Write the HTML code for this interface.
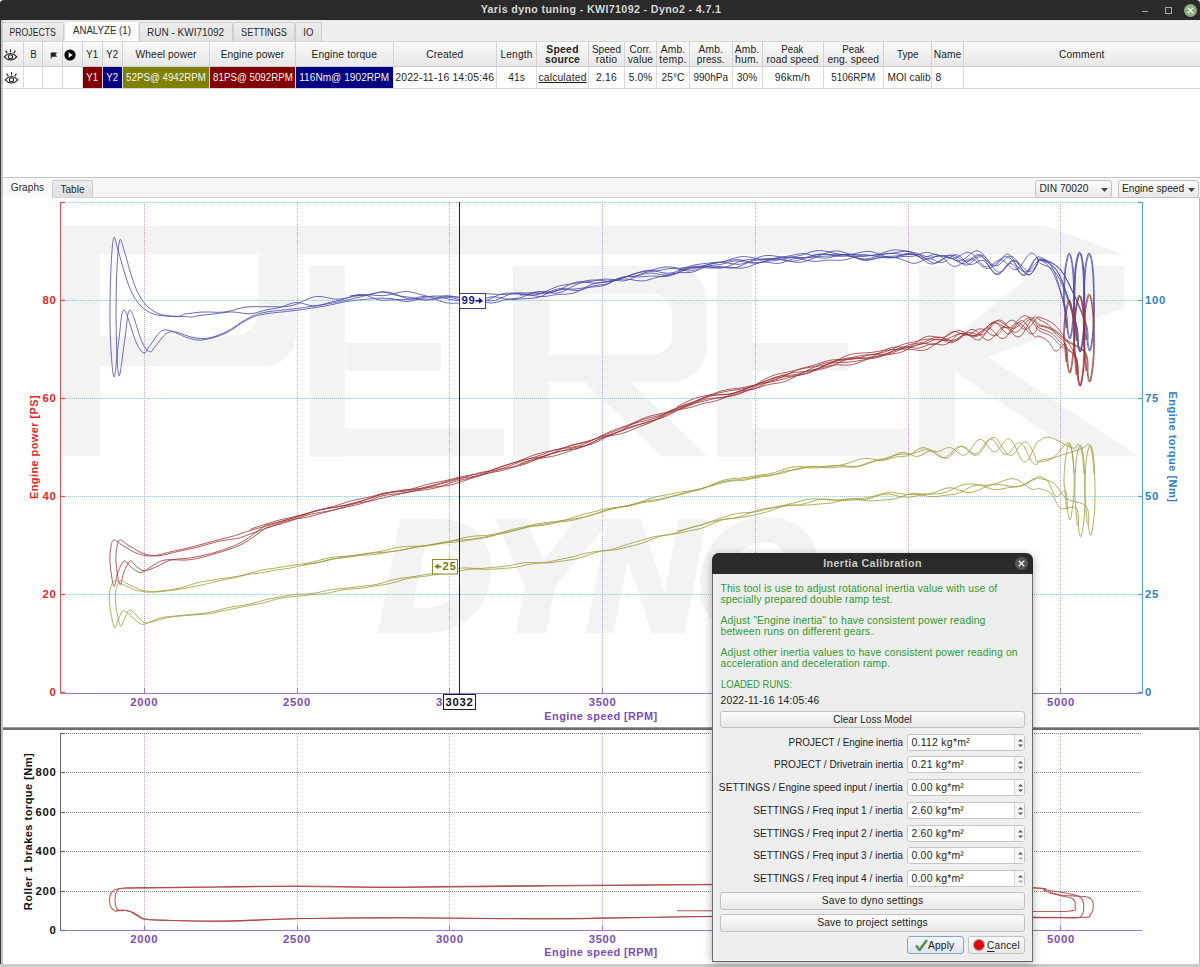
<!DOCTYPE html><html><head><meta charset="utf-8"><style>
*{box-sizing:border-box;margin:0;padding:0}
html,body{width:1200px;height:967px;overflow:hidden;background:#efefef;font-family:"Liberation Sans",sans-serif;font-size:10px;color:#202020;position:relative}
.a{position:absolute;white-space:nowrap}
.tab{position:absolute;top:22px;height:19px;background:linear-gradient(#ededed,#e3e3e3);border:1px solid #cdcdcd;border-bottom:none;color:#2a2a2a;text-align:center;line-height:19px;border-radius:2px 2px 0 0;white-space:nowrap}
.tab.sel{top:21px;height:20px;background:#fff;border-color:#e4e4e4;line-height:18px}
.hc{position:absolute;top:42px;height:25px;background:linear-gradient(#fafafa,#e8e8e8);border-right:1px solid #d2d2d2;border-bottom:1px solid #cdcdcd;color:#222;text-align:center;line-height:25px;white-space:nowrap}
.hc2{line-height:9.8px;padding-top:3px}
.rc{position:absolute;top:67px;height:22px;background:#fff;border-right:1px solid #dadada;border-bottom:1px solid #dadada;color:#1e1e1e;text-align:center;line-height:21px;white-space:nowrap;overflow:hidden}

.btn{position:absolute;border:1px solid #c2c2c2;border-radius:3px;background:linear-gradient(#fcfcfc,#e8e8e8);color:#222;text-align:center;white-space:nowrap}
.spin{position:absolute;left:907px;width:118px;height:17px;border:1px solid #c6c6c6;border-radius:3px;background:#fff;color:#222;line-height:16px;padding-left:3.5px}
.spin .ar{position:absolute;right:0;top:0;width:10px;height:15px;border-left:1px solid #d8d8d8;background:#f6f6f6}
.lbl{position:absolute;right:297px;color:#222;text-align:right;white-space:nowrap;line-height:11px}
.g{position:absolute;left:720.5px;color:#2f9a2f;white-space:nowrap;line-height:11px}
</style></head><body><div class="a" style="left:0;top:0;width:1200px;height:20px;background:#2a2a2a;border-radius:4px 4px 0 0"></div><div class="a" style="left:0;top:20px;width:1200px;height:1px;background:#e6e6e6"></div><div class="a" style="left:1px;top:3px;width:1200px;text-align:center;color:#d6d6d6;font-weight:bold;line-height:12px"><span style="font-size:10.70px;letter-spacing:0.356px">Yaris dyno tuning - KWI71092 - Dyno2 - 4.7.1</span></div><div class="a" style="left:1142px;top:11px;width:6px;height:1px;background:#a8a8a8"></div><div class="a" style="left:1165px;top:7px;width:7px;height:6.5px;border:1px solid #a8a8a8"></div><div class="a" style="left:1184px;top:3.5px;width:13px;height:13px;border-radius:50%;background:#8eac77"></div><svg class="a" style="left:1184px;top:3.5px" width="13" height="13"><path d="M3.8 3.8L9.2 9.2M9.2 3.8L3.8 9.2" stroke="#f0f0f0" stroke-width="1.3"/></svg><div class="a" style="left:0;top:20px;width:1px;height:947px;background:#3c3c3c"></div><div class="a" style="left:1px;top:20px;width:1.5px;height:947px;background:#c4c4c4"></div><div class="tab" style="left:2px;width:62px"><span style="display:inline-block;font-size:10.00px;transform:scaleX(0.8668);transform-origin:center">PROJECTS</span></div><div class="tab sel" style="left:64px;width:75px"><span style="display:inline-block;font-size:10.00px;transform:scaleX(0.9673);transform-origin:center">ANALYZE (1)</span></div><div class="tab" style="left:139px;width:94px"><span style="display:inline-block;font-size:10.00px;transform:scaleX(0.9973);transform-origin:center">RUN - KWI71092</span></div><div class="tab" style="left:233px;width:62px"><span style="display:inline-block;font-size:10.00px;transform:scaleX(0.9187);transform-origin:center">SETTINGS</span></div><div class="tab" style="left:295px;width:27px"><span style="display:inline-block;font-size:10.00px;transform:scaleX(0.9565);transform-origin:center">IO</span></div><div class="a" style="left:2.5px;top:41px;width:1197.5px;height:136px;background:#fff"></div><div class="a" style="left:2.5px;top:40.5px;width:1197.5px;height:1.5px;background:#d6d6d6"></div><div class="hc" style="left:2.5px;width:21.5px"><div style="position:absolute;left:0.5px;top:5.5px"><svg width="15" height="13" viewBox="0 0 15 13" style="display:block"><path d="M1.2 8.8Q7.5 2.2 13.8 8.8Q7.5 15.2 1.2 8.8Z" fill="none" stroke="#222" stroke-width="1.15"/><circle cx="7.5" cy="8.8" r="2.1" fill="none" stroke="#222" stroke-width="1.1"/><path d="M7.5 1.2V4.3M2.6 2.6L4.2 5.1M12.4 2.6L10.8 5.1" stroke="#222" stroke-width="1.1"/></svg></div></div><div class="hc" style="left:24px;width:19px"><span style="display:inline-block;font-size:10.00px;transform:scaleX(0.9597);transform-origin:center">B</span></div><div class="hc" style="left:43px;width:20px"><div style="position:absolute;left:7px;top:9.5px"><svg width="7" height="7" viewBox="0 0 7 7" style="display:block"><path d="M1 7V0.8H6.5L5.3 2.6L6.5 4.4H1.8" fill="#222" stroke="#222" stroke-width="0.6"/></svg></div></div><div class="hc" style="left:63px;width:20px"><div style="position:absolute;left:1.2px;top:6.5px"><svg width="12" height="12" viewBox="0 0 12 12" style="display:block"><circle cx="6" cy="6" r="5.6" fill="#000"/><path d="M4.6 3.3L8.7 6L4.6 8.7Z" fill="#fff"/></svg></div></div><div class="hc" style="left:83px;width:20px"><span style="display:inline-block;font-size:10.00px;transform:scaleX(0.9512);transform-origin:center">Y1</span></div><div class="hc" style="left:103px;width:20px"><span style="display:inline-block;font-size:10.00px;transform:scaleX(0.9512);transform-origin:center">Y2</span></div><div class="hc" style="left:123px;width:87px"><span style="font-size:10.23px;letter-spacing:0.122px">Wheel power</span></div><div class="hc" style="left:210px;width:86px"><span style="font-size:10.21px;letter-spacing:0.111px">Engine power</span></div><div class="hc" style="left:296px;width:97.5px"><span style="font-size:10.26px;letter-spacing:0.128px">Engine torque</span></div><div class="hc" style="left:393.5px;width:103.5px"><span style="font-size:10.19px;letter-spacing:0.097px">Created</span></div><div class="hc" style="left:497px;width:40px"><span style="font-size:10.26px;letter-spacing:0.135px">Length</span></div><div class="hc hc2" style="left:537px;width:52px"><b><span style="font-size:10.44px;letter-spacing:0.278px">Speed</span><br><span style="font-size:10.34px;letter-spacing:0.193px">source</span></b></div><div class="hc hc2" style="left:589px;width:36px"><span style="font-size:10.06px;letter-spacing:0.034px">Speed</span><br><span style="font-size:10.52px;letter-spacing:0.211px">ratio</span></div><div class="hc hc2" style="left:625px;width:32px"><span style="font-size:10.04px;letter-spacing:0.017px">Corr.</span><br><span style="font-size:10.33px;letter-spacing:0.161px">value</span></div><div class="hc hc2" style="left:657px;width:33px"><span style="font-size:10.22px;letter-spacing:0.129px">Amb.</span><br><span style="font-size:10.46px;letter-spacing:0.242px">temp.</span></div><div class="hc hc2" style="left:690px;width:42.5px"><span style="font-size:10.22px;letter-spacing:0.129px">Amb.</span><br><span style="font-size:10.14px;letter-spacing:0.063px">press.</span></div><div class="hc hc2" style="left:732.5px;width:30.0px"><span style="font-size:10.22px;letter-spacing:0.129px">Amb.</span><br><span style="font-size:10.36px;letter-spacing:0.210px">hum.</span></div><div class="hc hc2" style="left:762.5px;width:61.0px"><span style="display:inline-block;font-size:10.00px;transform:scaleX(0.9720);transform-origin:center">Peak</span><br><span style="font-size:10.21px;letter-spacing:0.106px">road speed</span></div><div class="hc hc2" style="left:823.5px;width:60.5px"><span style="display:inline-block;font-size:10.00px;transform:scaleX(0.9720);transform-origin:center">Peak</span><br><span style="font-size:10.22px;letter-spacing:0.112px">eng. speed</span></div><div class="hc" style="left:884px;width:48px"><span style="display:inline-block;font-size:10.00px;transform:scaleX(0.9886);transform-origin:center">Type</span></div><div class="hc" style="left:932px;width:32px"><span style="font-size:10.16px;letter-spacing:0.107px">Name</span></div><div class="hc" style="left:964px;width:236.5px"><span style="font-size:10.27px;letter-spacing:0.171px">Comment</span></div><div class="rc" style="left:2.5px;width:21.5px;"><div style="position:absolute;left:1.5px;top:3.5px"><svg width="15" height="13" viewBox="0 0 15 13" style="display:block"><path d="M1.2 8.8Q7.5 2.2 13.8 8.8Q7.5 15.2 1.2 8.8Z" fill="none" stroke="#222" stroke-width="1.15"/><circle cx="7.5" cy="8.8" r="2.1" fill="none" stroke="#222" stroke-width="1.1"/><path d="M7.5 1.2V4.3M2.6 2.6L4.2 5.1M12.4 2.6L10.8 5.1" stroke="#222" stroke-width="1.1"/></svg></div></div><div class="rc" style="left:24px;width:19px;"></div><div class="rc" style="left:43px;width:20px;"></div><div class="rc" style="left:63px;width:20px;"></div><div class="rc" style="left:83px;width:20px;background:#800000;color:#f2f2f2"><span style="display:inline-block;font-size:10.00px;transform:scaleX(0.9512);transform-origin:center">Y1</span></div><div class="rc" style="left:103px;width:20px;background:#000080;color:#f2f2f2"><span style="display:inline-block;font-size:10.00px;transform:scaleX(0.9512);transform-origin:center">Y2</span></div><div class="rc" style="left:123px;width:87px;background:#808000;color:#f6f6f6"><span style="display:inline-block;font-size:10.00px;transform:scaleX(0.9727);transform-origin:center">52PS@ 4942RPM</span></div><div class="rc" style="left:210px;width:86px;background:#800000;color:#f6f6f6"><span style="display:inline-block;font-size:10.00px;transform:scaleX(0.9727);transform-origin:center">81PS@ 5092RPM</span></div><div class="rc" style="left:296px;width:97.5px;background:#000080;color:#f6f6f6"><span style="font-size:10.07px;letter-spacing:0.043px">116Nm@ 1902RPM</span></div><div class="rc" style="left:393.5px;width:103.5px;"><span style="font-size:10.37px;letter-spacing:0.187px">2022-11-16 14:05:46</span></div><div class="rc" style="left:497px;width:40px;"><span style="font-size:10.19px;letter-spacing:0.103px">41s</span></div><div class="rc" style="left:537px;width:52px;"><u style="text-underline-offset:1px"><span style="font-size:10.34px;letter-spacing:0.157px">calculated</span></u></div><div class="rc" style="left:589px;width:36px;"><span style="font-size:10.33px;letter-spacing:0.167px">2.16</span></div><div class="rc" style="left:625px;width:32px;"><span style="font-size:10.20px;letter-spacing:0.115px">5.0%</span></div><div class="rc" style="left:657px;width:33px;"><span style="font-size:10.16px;letter-spacing:0.089px">25°C</span></div><div class="rc" style="left:690px;width:42.5px;"><span style="font-size:10.02px;letter-spacing:0.014px">990hPa</span></div><div class="rc" style="left:732.5px;width:30.0px;"><span style="font-size:10.18px;letter-spacing:0.122px">30%</span></div><div class="rc" style="left:762.5px;width:61.0px;"><span style="font-size:10.39px;letter-spacing:0.223px">96km/h</span></div><div class="rc" style="left:823.5px;width:60.5px;"><span style="display:inline-block;font-size:10.00px;transform:scaleX(0.9874);transform-origin:center">5106RPM</span></div><div class="rc" style="left:884px;width:48px;text-align:left;padding-left:3.5px;"><span style="font-size:10.10px;letter-spacing:0.047px">MOI calib</span></div><div class="rc" style="left:932px;width:32px;text-align:left;padding-left:3.5px;"><span style="font-size:10.33px;letter-spacing:0.191px">8</span></div><div class="rc" style="left:964px;width:236.5px;"></div><div class="a" style="left:2.5px;top:177px;width:1197.5px;height:1px;background:#c4c4c4"></div><div class="a" style="left:2.5px;top:178px;width:1197.5px;height:20px;background:#f6f6f6"></div><div class="a" style="left:2.5px;top:197px;width:1197.5px;height:1px;background:#d2d2d2"></div><div class="a" style="left:3px;top:178px;width:49px;height:20px;background:#fafafa;color:#2a2a2a;text-align:center;line-height:20px"><span style="font-size:10.10px;letter-spacing:0.058px">Graphs</span></div><div class="a" style="left:52px;top:180px;width:41px;height:17px;background:linear-gradient(#ececec,#e0e0e0);border:1px solid #cbcbcb;border-bottom:none;border-radius:2px 2px 0 0;color:#2a2a2a;text-align:center;line-height:17px"><span style="font-size:10.05px;letter-spacing:0.022px">Table</span></div><div class="btn" style="left:1035px;top:180px;width:77px;height:17.5px;text-align:left;padding-left:3.5px;line-height:16px"><span style="font-size:10.21px;letter-spacing:0.006px">DIN 70020</span><svg style="position:absolute;right:3.5px;top:6.5px" width="7" height="4"><path d="M0 0H7L3.5 4Z" fill="#444"/></svg></div><div class="btn" style="left:1117.5px;top:180px;width:81.5px;height:17.5px;text-align:left;padding-left:3.5px;line-height:16px"><span style="display:inline-block;font-size:10.19px;transform:scaleX(0.9990);transform-origin:left">Engine speed</span><svg style="position:absolute;right:3.5px;top:6.5px" width="7" height="4"><path d="M0 0H7L3.5 4Z" fill="#444"/></svg></div><div class="a" style="left:2.5px;top:198px;width:1196.5px;height:529px;background:#fff"></div><div class="a" style="left:1199px;top:198px;width:1px;height:766px;background:#b8b8b8"></div><div class="a" style="left:2.5px;top:727px;width:1196.5px;height:1px;background:#9a9a9a"></div><div class="a" style="left:2.5px;top:728px;width:1196.5px;height:2px;background:#6e6e6e"></div><div class="a" style="left:2.5px;top:730px;width:1196.5px;height:234px;background:#fff"></div><div class="a" style="left:0;top:964px;width:1200px;height:3px;background:#c9c9c9"></div><svg class="a" style="left:0;top:0" width="1200" height="967" viewBox="0 0 1200 967"><g fill="#f3f3f3" fill-rule="evenodd"><path d="M62 225.7H1045.5L1124 254.5H62Z"/><path d="M62 254.5H100.3V456H62Z"/><path d="M100.3 254.5H296V334A32 32 0 0 1 264 366H100.3Z M100.3 254.5H259V309.3A27 27 0 0 1 232 336.3H100.3Z"/><path d="M309.75 265.75H344.75V456.5H309.75Z"/><path d="M344.75 342.75H441V370.75H344.75Z"/><path d="M309.75 428.5H504V456.5H309.75Z"/><path d="M717.0 265.75H752.0V456.5H717.0Z"/><path d="M752.0 342.75H848.25V370.75H752.0Z"/><path d="M717.0 428.5H911.25V456.5H717.0Z"/><path d="M513 266H549V456.3H513Z"/><path d="M549 266H671.7A35 35 0 0 1 706.7 301V346.7A35 35 0 0 1 671.7 381.7H549Z M549 293.7H652A20 20 0 0 1 672 313.7V335A20 20 0 0 1 652 355H549Z"/><path d="M584 381.7H630L707 456.3H661.3Z"/><path d="M919 266H955V456.3H919Z"/><path d="M955 336L1042 266H1124V308L988 357L955 372Z"/><path d="M955 372L988 357L1139 456.3H1081.6Z"/></g><text x="380" y="629" font-family="Liberation Sans" font-weight="bold" font-style="italic" font-size="154" letter-spacing="-3" fill="#f3f3f3" stroke="#f3f3f3" stroke-width="8" stroke-linejoin="miter">DYNO</text><line x1="144.5" y1="202" x2="144.5" y2="692.5" stroke="#b8a0e0" stroke-width="1" stroke-dasharray="1 1"/><line x1="144.5" y1="734" x2="144.5" y2="930" stroke="#b8a0e0" stroke-width="1" stroke-dasharray="1 1"/><line x1="297.5" y1="202" x2="297.5" y2="692.5" stroke="#b8a0e0" stroke-width="1" stroke-dasharray="1 1"/><line x1="297.5" y1="734" x2="297.5" y2="930" stroke="#b8a0e0" stroke-width="1" stroke-dasharray="1 1"/><line x1="449.5" y1="202" x2="449.5" y2="692.5" stroke="#b8a0e0" stroke-width="1" stroke-dasharray="1 1"/><line x1="449.5" y1="734" x2="449.5" y2="930" stroke="#b8a0e0" stroke-width="1" stroke-dasharray="1 1"/><line x1="602.5" y1="202" x2="602.5" y2="692.5" stroke="#b8a0e0" stroke-width="1" stroke-dasharray="1 1"/><line x1="602.5" y1="734" x2="602.5" y2="930" stroke="#b8a0e0" stroke-width="1" stroke-dasharray="1 1"/><line x1="755.5" y1="202" x2="755.5" y2="692.5" stroke="#b8a0e0" stroke-width="1" stroke-dasharray="1 1"/><line x1="755.5" y1="734" x2="755.5" y2="930" stroke="#b8a0e0" stroke-width="1" stroke-dasharray="1 1"/><line x1="908.5" y1="202" x2="908.5" y2="692.5" stroke="#b8a0e0" stroke-width="1" stroke-dasharray="1 1"/><line x1="908.5" y1="734" x2="908.5" y2="930" stroke="#b8a0e0" stroke-width="1" stroke-dasharray="1 1"/><line x1="1060.5" y1="202" x2="1060.5" y2="692.5" stroke="#b8a0e0" stroke-width="1" stroke-dasharray="1 1"/><line x1="1060.5" y1="734" x2="1060.5" y2="930" stroke="#b8a0e0" stroke-width="1" stroke-dasharray="1 1"/><line x1="62" y1="594.5" x2="1142" y2="594.5" stroke="#9cc4e4" stroke-width="1" stroke-dasharray="1 1"/><line x1="62" y1="496.5" x2="1142" y2="496.5" stroke="#9cc4e4" stroke-width="1" stroke-dasharray="1 1"/><line x1="62" y1="398.5" x2="1142" y2="398.5" stroke="#9cc4e4" stroke-width="1" stroke-dasharray="1 1"/><line x1="62" y1="300.5" x2="1142" y2="300.5" stroke="#9cc4e4" stroke-width="1" stroke-dasharray="1 1"/><line x1="62" y1="202.5" x2="1142" y2="202.5" stroke="#9cc4e4" stroke-width="1" stroke-dasharray="1 1"/><line x1="62" y1="891.5" x2="1142" y2="891.5" stroke="#8a8a8a" stroke-width="1" stroke-dasharray="1 1"/><line x1="62" y1="851.5" x2="1142" y2="851.5" stroke="#8a8a8a" stroke-width="1" stroke-dasharray="1 1"/><line x1="62" y1="812.5" x2="1142" y2="812.5" stroke="#8a8a8a" stroke-width="1" stroke-dasharray="1 1"/><line x1="62" y1="772.5" x2="1142" y2="772.5" stroke="#8a8a8a" stroke-width="1" stroke-dasharray="1 1"/><line x1="62" y1="733.5" x2="1142" y2="733.5" stroke="#8a8a8a" stroke-width="1" stroke-dasharray="1 1"/><path d="M1066.8 328.0C1066.5 325.0 1065.7 315.4 1065.3 310.0C1064.9 304.6 1064.2 302.3 1064.3 295.5C1064.4 288.7 1064.9 275.9 1065.8 269.0C1066.7 262.1 1068.5 254.0 1069.8 254.0C1071.0 254.0 1072.5 262.1 1073.3 269.0C1074.1 275.9 1074.4 287.3 1074.5 295.5C1074.6 303.7 1074.4 310.9 1073.8 318.0C1073.2 325.1 1071.7 335.7 1070.8 338.0C1069.9 340.3 1069.1 336.7 1068.3 332.0C1067.5 327.3 1067.8 318.8 1065.8 310.0C1063.8 301.2 1059.0 286.8 1056.0 279.4C1053.0 271.9 1050.7 268.5 1048.0 265.4C1045.3 262.2 1041.8 260.9 1040.0 260.4C1038.2 259.8 1038.0 261.4 1037.0 262.2C1036.0 263.0 1035.0 264.2 1034.0 265.3C1033.0 266.4 1032.0 267.7 1031.0 268.6C1030.0 269.6 1029.0 270.5 1028.0 271.0C1027.0 271.6 1026.0 271.9 1025.0 271.9C1024.0 271.8 1023.0 271.4 1022.0 270.8C1021.0 270.2 1020.0 269.2 1019.0 268.2C1018.0 267.2 1017.0 265.8 1016.0 264.6C1015.0 263.4 1014.0 262.1 1013.0 261.0C1012.0 259.9 1011.0 258.9 1010.0 258.2C1009.0 257.5 1008.0 257.0 1007.0 256.8C1006.0 256.6 1005.0 256.7 1004.0 257.0C1003.0 257.4 1002.0 258.1 1001.0 258.8C1000.0 259.6 999.0 260.6 998.0 261.6C997.0 262.6 996.0 263.7 995.0 264.6C994.0 265.6 993.0 266.5 992.0 267.2C991.0 267.8 990.0 268.3 989.0 268.5C988.0 268.7 987.0 268.7 986.0 268.4C985.0 268.1 984.0 267.6 983.0 266.9C982.0 266.3 981.0 265.4 980.0 264.5C979.0 263.7 978.0 262.7 977.0 261.9C976.0 261.2 975.0 260.4 974.0 259.9C973.0 259.4 972.0 259.1 971.0 259.0C970.0 258.9 969.0 259.1 968.0 259.4C967.0 259.7 966.0 260.4 965.0 261.0C964.0 261.6 963.0 262.4 962.0 263.1C961.0 263.8 960.0 264.6 959.0 265.2C958.0 265.7 957.0 266.2 956.0 266.3C955.0 266.5 954.0 266.4 953.0 266.1C952.0 265.8 951.0 265.2 950.0 264.5C949.0 263.8 948.0 262.8 947.0 261.8C946.0 260.9 945.0 259.8 944.0 258.9C943.0 258.0 942.0 257.0 941.0 256.4C940.0 255.7 939.0 255.1 938.0 254.8C937.0 254.5 936.0 254.3 935.0 254.4C934.0 254.4 933.0 254.7 932.0 254.9C931.0 255.2 930.0 255.6 929.0 256.0C928.0 256.3 927.0 256.7 926.0 256.9C925.0 257.1 924.0 257.3 923.0 257.3C922.0 257.3 921.0 257.1 920.0 256.9C919.0 256.7 918.0 256.3 917.0 255.9C916.0 255.5 915.0 255.0 914.0 254.7C913.0 254.3 912.0 253.9 911.0 253.7C910.0 253.5 909.0 253.4 908.0 253.4C907.0 253.5 906.0 253.7 905.0 253.9C904.0 254.2 903.0 254.6 902.0 255.0C901.0 255.3 900.0 255.8 899.0 256.1C898.0 256.5 897.0 256.8 896.0 257.1C895.0 257.3 894.0 257.5 893.0 257.6C892.0 257.8 891.0 257.8 890.0 257.8C889.0 257.9 888.0 257.8 887.0 257.8C886.0 257.7 885.0 257.6 884.0 257.6C883.0 257.6 882.0 257.6 881.0 257.6C880.0 257.6 879.0 257.7 878.0 257.9C877.0 258.0 876.0 258.2 875.0 258.5C874.0 258.7 873.0 258.9 872.0 259.1C871.0 259.3 870.0 259.6 869.0 259.7C868.0 259.8 867.0 259.9 866.0 259.9C865.0 259.9 864.0 259.8 863.0 259.6C862.0 259.5 861.0 259.2 860.0 258.9C859.0 258.7 858.0 258.3 857.0 258.0C856.0 257.7 855.0 257.4 854.0 257.1C853.0 256.9 852.0 256.7 851.0 256.5C850.0 256.3 849.0 256.2 848.0 256.2C847.0 256.1 846.0 256.2 845.0 256.2C844.0 256.2 843.0 256.3 842.0 256.3C841.0 256.3 840.0 256.4 839.0 256.3C838.0 256.3 837.0 256.3 836.0 256.1C835.0 256.0 834.0 255.8 833.0 255.6C832.0 255.4 831.0 255.2 830.0 254.9C829.0 254.7 828.0 254.5 827.0 254.3C826.0 254.1 825.0 254.0 824.0 253.9C823.0 253.9 822.0 253.9 821.0 254.0C820.0 254.1 819.0 254.3 818.0 254.6C817.0 254.8 816.0 255.1 815.0 255.4C814.0 255.7 813.0 256.1 812.0 256.4C811.0 256.7 810.0 257.0 809.0 257.3C808.0 257.5 807.0 257.7 806.0 257.8C805.0 258.0 804.0 258.0 803.0 258.1C802.0 258.2 801.0 258.2 800.0 258.2C799.0 258.3 798.0 258.3 797.0 258.4C796.0 258.5 795.0 258.6 794.0 258.8C793.0 259.0 792.0 259.3 791.0 259.6C790.0 259.9 789.0 260.3 788.0 260.6C787.0 261.0 786.0 261.4 785.0 261.8C784.0 262.1 783.0 262.4 782.0 262.7C781.0 262.9 780.0 263.1 779.0 263.3C778.0 263.4 777.0 263.4 776.0 263.4C775.0 263.3 774.0 263.2 773.0 263.1C772.0 263.0 771.0 262.8 770.0 262.6C769.0 262.5 768.0 262.3 767.0 262.2C766.0 262.1 765.0 262.1 764.0 262.1C763.0 262.0 762.0 262.1 761.0 262.2C760.0 262.3 759.0 262.4 758.0 262.5C757.0 262.6 756.0 262.8 755.0 262.9C754.0 262.9 753.0 263.0 752.0 263.0C751.0 263.0 750.0 262.9 749.0 262.8C748.0 262.7 747.0 262.5 746.0 262.3C745.0 262.1 744.0 261.8 743.0 261.6C742.0 261.4 741.0 261.2 740.0 261.1C739.0 260.9 738.0 260.8 737.0 260.8C736.0 260.8 735.0 260.8 734.0 261.0C733.0 261.1 732.0 261.4 731.0 261.6C730.0 261.9 729.0 262.2 728.0 262.5C727.0 262.8 726.0 263.1 725.0 263.4C724.0 263.7 723.0 264.0 722.0 264.2C721.0 264.4 720.0 264.5 719.0 264.7C718.0 264.8 717.0 264.9 716.0 264.9C715.0 265.0 714.0 265.1 713.0 265.2C712.0 265.3 711.0 265.4 710.0 265.6C709.0 265.8 708.0 266.0 707.0 266.3C706.0 266.6 705.0 267.0 704.0 267.4C703.0 267.8 702.0 268.3 701.0 268.8C700.0 269.3 699.0 269.8 698.0 270.2C697.0 270.6 696.0 271.1 695.0 271.4C694.0 271.7 693.0 272.0 692.0 272.2C691.0 272.4 690.0 272.5 689.0 272.6C688.0 272.6 687.0 272.6 686.0 272.6C685.0 272.6 684.0 272.6 683.0 272.6C682.0 272.6 681.0 272.6 680.0 272.6C679.0 272.7 678.0 272.8 677.0 272.9C676.0 273.1 675.0 273.3 674.0 273.5C673.0 273.7 672.0 273.9 671.0 274.1C670.0 274.3 669.0 274.5 668.0 274.7C667.0 274.8 666.0 274.9 665.0 274.9C664.0 274.9 663.0 274.9 662.0 274.8C661.0 274.7 660.0 274.5 659.0 274.3C658.0 274.1 657.0 273.9 656.0 273.7C655.0 273.5 654.0 273.3 653.0 273.2C652.0 273.1 651.0 273.0 650.0 273.1C649.0 273.1 648.0 273.2 647.0 273.3C646.0 273.5 645.0 273.7 644.0 274.0C643.0 274.2 642.0 274.5 641.0 274.8C640.0 275.0 639.0 275.3 638.0 275.5C637.0 275.8 636.0 276.0 635.0 276.1C634.0 276.2 633.0 276.3 632.0 276.4C631.0 276.5 630.0 276.5 629.0 276.5C628.0 276.6 627.0 276.6 626.0 276.7C625.0 276.8 624.0 276.9 623.0 277.2C622.0 277.4 621.0 277.7 620.0 278.0C619.0 278.4 618.0 278.8 617.0 279.3C616.0 279.7 615.0 280.3 614.0 280.7C613.0 281.2 612.0 281.8 611.0 282.2C610.0 282.7 609.0 283.1 608.0 283.5C607.0 283.8 606.0 284.1 605.0 284.3C604.0 284.5 603.0 284.6 602.0 284.7C601.0 284.9 600.0 284.9 599.0 285.0C598.0 285.1 597.0 285.3 596.0 285.5C595.0 285.6 594.0 285.8 593.0 286.1C592.0 286.3 591.0 286.6 590.0 287.0C589.0 287.3 588.0 287.7 587.0 288.0C586.0 288.4 585.0 288.8 584.0 289.1C583.0 289.4 582.0 289.8 581.0 290.0C580.0 290.2 579.0 290.4 578.0 290.5C577.0 290.6 576.0 290.5 575.0 290.5C574.0 290.4 573.0 290.3 572.0 290.2C571.0 290.1 570.0 289.9 569.0 289.7C568.0 289.6 567.0 289.5 566.0 289.4C565.0 289.4 564.0 289.4 563.0 289.4C562.0 289.5 561.0 289.6 560.0 289.8C559.0 290.0 558.0 290.2 557.0 290.4C556.0 290.6 555.0 290.9 554.0 291.1C553.0 291.3 552.0 291.5 551.0 291.6C550.0 291.7 549.0 291.8 548.0 291.8C547.0 291.8 546.0 291.8 545.0 291.8C544.0 291.8 543.0 291.7 542.0 291.6C541.0 291.6 540.0 291.6 539.0 291.6C538.0 291.7 537.0 291.8 536.0 291.9C535.0 292.1 534.0 292.4 533.0 292.7C532.0 293.0 531.0 293.4 530.0 293.8C529.0 294.3 528.0 294.7 527.0 295.2C526.0 295.6 525.0 296.1 524.0 296.5C523.0 296.9 522.0 297.2 521.0 297.5C520.0 297.8 519.0 298.0 518.0 298.2C517.0 298.3 516.0 298.4 515.0 298.5C514.0 298.6 513.0 298.6 512.0 298.7C511.0 298.8 510.0 298.9 509.0 299.0C508.0 299.1 507.0 299.3 506.0 299.5C505.0 299.8 504.0 300.0 503.0 300.3C502.0 300.6 501.0 301.0 500.0 301.3C499.0 301.6 498.0 302.0 497.0 302.2C496.0 302.5 495.0 302.7 494.0 302.8C493.0 303.0 492.0 303.0 491.0 303.0C490.0 303.0 489.0 302.8 488.0 302.7C487.0 302.5 486.0 302.3 485.0 302.0C484.0 301.8 483.0 301.5 482.0 301.3C481.0 301.1 480.0 300.9 479.0 300.7C478.0 300.6 477.0 300.5 476.0 300.4C475.0 300.4 474.0 300.4 473.0 300.4C472.0 300.5 471.0 300.5 470.0 300.6C469.0 300.6 468.0 300.7 467.0 300.7C466.0 300.6 465.0 300.6 464.0 300.5C463.0 300.4 462.0 300.2 461.0 300.0C460.0 299.8 459.0 299.5 458.0 299.3C457.0 299.0 456.0 298.7 455.0 298.4C454.0 298.2 453.0 297.9 452.0 297.7C451.0 297.5 450.0 297.4 449.0 297.3C448.0 297.3 447.0 297.3 446.0 297.4C445.0 297.4 444.0 297.6 443.0 297.8C442.0 297.9 441.0 298.1 440.0 298.3C439.0 298.5 438.0 298.8 437.0 298.9C436.0 299.1 435.0 299.2 434.0 299.2C433.0 299.3 432.0 299.3 431.0 299.3C430.0 299.2 429.0 299.1 428.0 299.1C427.0 299.0 426.0 298.9 425.0 298.9C424.0 298.8 423.0 298.8 422.0 298.9C421.0 298.9 420.0 299.0 419.0 299.2C418.0 299.3 417.0 299.6 416.0 299.8C415.0 300.0 414.0 300.3 413.0 300.6C412.0 300.8 411.0 301.0 410.0 301.2C409.0 301.4 408.0 301.5 407.0 301.5C406.0 301.6 405.0 301.5 404.0 301.4C403.0 301.3 402.0 301.1 401.0 300.9C400.0 300.7 399.0 300.4 398.0 300.1C397.0 299.9 396.0 299.6 395.0 299.3C394.0 299.1 393.0 298.9 392.0 298.7C391.0 298.6 390.0 298.5 389.0 298.4C388.0 298.3 387.0 298.3 386.0 298.3C385.0 298.3 384.0 298.3 383.0 298.3C382.0 298.2 385.5 297.6 380.0 298.1C374.5 298.5 359.2 299.7 350.0 301.0C340.8 302.3 334.2 304.4 325.0 306.0C315.8 307.6 305.5 309.1 295.0 310.5C284.5 311.9 270.3 312.8 262.0 314.5C253.7 316.2 251.2 317.8 245.0 321.0C238.8 324.2 232.2 330.3 225.0 333.5C217.8 336.7 208.3 339.3 202.0 340.0C195.7 340.7 193.3 339.2 187.0 337.5C180.7 335.8 170.2 328.7 164.0 330.0C157.8 331.3 153.3 341.7 150.0 345.5C146.7 349.3 146.3 353.6 144.0 353.0C141.7 352.4 139.3 349.2 136.0 342.0C132.7 334.8 126.8 310.7 124.0 310.0C121.2 309.3 120.7 326.8 119.0 338.0C117.3 349.2 115.5 377.5 114.0 377.0C112.5 376.5 110.9 351.2 110.3 335.0C109.7 318.8 110.0 296.1 110.5 280.0C111.0 263.9 112.2 243.5 113.5 238.5C114.8 233.5 116.2 244.6 118.0 250.0C119.8 255.4 121.8 264.2 124.0 271.0C126.2 277.8 128.3 285.3 131.0 291.0C133.7 296.7 136.5 301.2 140.0 305.0C143.5 308.8 147.8 311.7 152.0 313.5C156.2 315.3 160.7 315.5 165.0 316.0C169.3 316.5 174.7 316.8 178.0 316.5C181.3 316.2 183.3 314.4 185.0 313.9C186.7 313.5 187.0 313.7 188.0 313.6C189.0 313.5 190.0 313.4 191.0 313.2C192.0 313.1 193.0 313.0 194.0 312.9C195.0 312.8 196.0 312.6 197.0 312.5C198.0 312.4 199.0 312.3 200.0 312.2C201.0 312.1 202.0 312.1 203.0 312.0C204.0 312.0 205.0 312.0 206.0 312.0C207.0 312.0 208.0 312.0 209.0 312.0C210.0 312.0 211.0 312.1 212.0 312.1C213.0 312.1 214.0 312.2 215.0 312.2C216.0 312.3 217.0 312.3 218.0 312.3C219.0 312.3 220.0 312.3 221.0 312.2C222.0 312.2 223.0 312.1 224.0 312.0C225.0 311.9 226.0 311.8 227.0 311.6C228.0 311.4 229.0 311.2 230.0 311.0C231.0 310.7 232.0 310.5 233.0 310.2C234.0 309.9 235.0 309.6 236.0 309.3C237.0 309.1 238.0 308.8 239.0 308.5C240.0 308.2 241.0 308.0 242.0 307.8C243.0 307.5 244.0 307.3 245.0 307.2C246.0 307.0 247.0 306.9 248.0 306.8C249.0 306.8 250.0 306.7 251.0 306.7C252.0 306.6 253.0 306.6 254.0 306.6C255.0 306.6 256.0 306.6 257.0 306.6C258.0 306.6 259.0 306.6 260.0 306.7C261.0 306.7 262.0 306.7 263.0 306.7C264.0 306.7 265.0 306.7 266.0 306.7C267.0 306.7 268.0 306.7 269.0 306.7C270.0 306.7 271.0 306.7 272.0 306.7C273.0 306.7 274.0 306.7 275.0 306.7C276.0 306.7 277.0 306.8 278.0 306.8C279.0 306.8 280.0 306.9 281.0 306.8C282.0 306.8 283.0 306.8 284.0 306.7C285.0 306.6 286.0 306.6 287.0 306.5C288.0 306.3 289.0 306.2 290.0 306.0C291.0 305.8 292.0 305.6 293.0 305.3C294.0 305.0 295.0 304.7 296.0 304.3C297.0 303.9 298.0 303.4 299.0 303.0C300.0 302.6 301.0 302.1 302.0 301.6C303.0 301.2 304.0 300.7 305.0 300.2C306.0 299.8 307.0 299.3 308.0 298.9C309.0 298.4 310.0 298.0 311.0 297.7C312.0 297.4 313.0 297.1 314.0 296.9C315.0 296.7 316.0 296.5 317.0 296.5C318.0 296.4 319.0 296.4 320.0 296.5C321.0 296.5 322.0 296.7 323.0 296.8C324.0 297.0 325.0 297.2 326.0 297.4C327.0 297.7 328.0 297.9 329.0 298.1C330.0 298.3 331.0 298.6 332.0 298.7C333.0 298.9 334.0 299.0 335.0 299.1C336.0 299.2 337.0 299.2 338.0 299.2C339.0 299.1 340.0 299.1 341.0 298.9C342.0 298.8 343.0 298.7 344.0 298.5C345.0 298.3 346.0 298.1 347.0 297.9C348.0 297.7 349.0 297.4 350.0 297.2C351.0 297.0 352.0 296.8 353.0 296.6C354.0 296.4 355.0 296.2 356.0 296.1C357.0 295.9 358.0 295.8 359.0 295.6C360.0 295.5 361.0 295.4 362.0 295.3C363.0 295.2 364.0 295.1 365.0 295.0C366.0 294.8 367.0 294.7 368.0 294.6C369.0 294.4 370.0 294.2 371.0 294.0C372.0 293.9 373.0 293.6 374.0 293.4C375.0 293.2 376.0 293.0 377.0 292.8C378.0 292.6 379.0 292.4 380.0 292.3C381.0 292.1 382.0 292.0 383.0 291.9C384.0 291.9 385.0 291.8 386.0 291.9C387.0 291.9 388.0 292.0 389.0 292.2C390.0 292.4 391.0 292.6 392.0 292.9C393.0 293.2 394.0 293.6 395.0 294.0C396.0 294.3 397.0 294.8 398.0 295.2C399.0 295.6 400.0 296.1 401.0 296.5C402.0 296.9 403.0 297.3 404.0 297.6C405.0 298.0 406.0 298.3 407.0 298.5C408.0 298.8 409.0 299.0 410.0 299.1C411.0 299.2 412.0 299.3 413.0 299.2C414.0 299.2 415.0 299.1 416.0 299.0C417.0 298.9 418.0 298.7 419.0 298.5C420.0 298.3 421.0 298.1 422.0 297.9C423.0 297.7 424.0 297.4 425.0 297.2C426.0 297.0 427.0 296.8 428.0 296.7C429.0 296.5 430.0 296.4 431.0 296.3C432.0 296.2 433.0 296.1 434.0 296.0C435.0 296.0 436.0 296.0 437.0 296.0C438.0 296.0 439.0 296.0 440.0 296.0C441.0 296.0 442.0 296.1 443.0 296.2C444.0 296.2 445.0 296.3 446.0 296.3C447.0 296.4 448.0 296.5 449.0 296.5C450.0 296.5 451.0 296.6 452.0 296.6C453.0 296.7 454.0 296.7 455.0 296.8C456.0 296.8 457.0 296.9 458.0 297.0C459.0 297.1 460.0 297.2 461.0 297.3C462.0 297.5 463.0 297.6 464.0 297.9C465.0 298.1 466.0 298.3 467.0 298.6C468.0 298.8 469.0 299.1 470.0 299.4C471.0 299.7 472.0 300.0 473.0 300.2C474.0 300.4 475.0 300.7 476.0 300.8C477.0 301.0 478.0 301.1 479.0 301.2C480.0 301.2 481.0 301.2 482.0 301.1C483.0 301.0 484.0 300.8 485.0 300.6C486.0 300.3 487.0 300.0 488.0 299.7C489.0 299.3 490.0 298.9 491.0 298.4C492.0 298.0 493.0 297.5 494.0 297.1C495.0 296.6 496.0 296.1 497.0 295.7C498.0 295.3 499.0 294.9 500.0 294.5C501.0 294.2 502.0 293.9 503.0 293.7C504.0 293.5 505.0 293.3 506.0 293.2C507.0 293.1 508.0 293.0 509.0 293.0C510.0 293.0 511.0 293.0 512.0 293.1C513.0 293.2 514.0 293.3 515.0 293.3C516.0 293.4 517.0 293.5 518.0 293.6C519.0 293.7 520.0 293.8 521.0 293.9C522.0 293.9 523.0 294.0 524.0 294.0C525.0 294.0 526.0 294.0 527.0 294.0C528.0 294.0 529.0 293.9 530.0 293.9C531.0 293.9 532.0 293.8 533.0 293.8C534.0 293.7 535.0 293.7 536.0 293.6C537.0 293.6 538.0 293.6 539.0 293.5C540.0 293.5 541.0 293.5 542.0 293.5C543.0 293.4 544.0 293.4 545.0 293.3C546.0 293.3 547.0 293.2 548.0 293.1C549.0 293.0 550.0 292.9 551.0 292.7C552.0 292.5 553.0 292.2 554.0 291.9C555.0 291.6 556.0 291.3 557.0 290.9C558.0 290.5 559.0 290.0 560.0 289.5C561.0 289.1 562.0 288.5 563.0 288.0C564.0 287.5 565.0 286.9 566.0 286.4C567.0 285.8 568.0 285.3 569.0 284.8C570.0 284.3 571.0 283.9 572.0 283.5C573.0 283.1 574.0 282.8 575.0 282.5C576.0 282.3 577.0 282.1 578.0 282.0C579.0 281.9 580.0 281.8 581.0 281.8C582.0 281.8 583.0 281.9 584.0 282.0C585.0 282.1 586.0 282.3 587.0 282.4C588.0 282.5 589.0 282.7 590.0 282.8C591.0 282.9 592.0 283.0 593.0 283.1C594.0 283.1 595.0 283.2 596.0 283.1C597.0 283.1 598.0 283.0 599.0 282.9C600.0 282.8 601.0 282.7 602.0 282.5C603.0 282.4 604.0 282.2 605.0 282.0C606.0 281.8 607.0 281.5 608.0 281.3C609.0 281.0 610.0 280.8 611.0 280.5C612.0 280.3 613.0 280.0 614.0 279.8C615.0 279.5 616.0 279.3 617.0 279.0C618.0 278.8 619.0 278.5 620.0 278.3C621.0 278.1 622.0 277.8 623.0 277.6C624.0 277.3 625.0 277.1 626.0 276.8C627.0 276.5 628.0 276.2 629.0 275.9C630.0 275.6 631.0 275.3 632.0 274.9C633.0 274.6 634.0 274.2 635.0 273.8C636.0 273.5 637.0 273.1 638.0 272.8C639.0 272.4 640.0 272.1 641.0 271.8C642.0 271.5 643.0 271.2 644.0 271.0C645.0 270.8 646.0 270.6 647.0 270.5C648.0 270.4 649.0 270.4 650.0 270.4C651.0 270.5 652.0 270.6 653.0 270.7C654.0 270.8 655.0 271.0 656.0 271.2C657.0 271.4 658.0 271.7 659.0 271.9C660.0 272.1 661.0 272.4 662.0 272.6C663.0 272.8 664.0 273.0 665.0 273.1C666.0 273.2 667.0 273.2 668.0 273.2C669.0 273.2 670.0 273.1 671.0 273.0C672.0 272.8 673.0 272.6 674.0 272.4C675.0 272.1 676.0 271.7 677.0 271.4C678.0 271.0 679.0 270.6 680.0 270.2C681.0 269.8 682.0 269.3 683.0 268.9C684.0 268.4 685.0 268.0 686.0 267.6C687.0 267.2 688.0 266.8 689.0 266.5C690.0 266.1 691.0 265.8 692.0 265.6C693.0 265.3 694.0 265.1 695.0 264.9C696.0 264.7 697.0 264.5 698.0 264.4C699.0 264.2 700.0 264.1 701.0 264.0C702.0 263.8 703.0 263.7 704.0 263.6C705.0 263.5 706.0 263.4 707.0 263.3C708.0 263.1 709.0 263.0 710.0 262.9C711.0 262.8 712.0 262.7 713.0 262.6C714.0 262.5 715.0 262.4 716.0 262.3C717.0 262.3 718.0 262.2 719.0 262.2C720.0 262.2 721.0 262.3 722.0 262.3C723.0 262.4 724.0 262.5 725.0 262.6C726.0 262.7 727.0 262.9 728.0 263.0C729.0 263.2 730.0 263.4 731.0 263.6C732.0 263.7 733.0 263.9 734.0 264.0C735.0 264.1 736.0 264.2 737.0 264.3C738.0 264.3 739.0 264.3 740.0 264.2C741.0 264.1 742.0 264.0 743.0 263.7C744.0 263.5 745.0 263.2 746.0 262.9C747.0 262.6 748.0 262.1 749.0 261.7C750.0 261.3 751.0 260.8 752.0 260.3C753.0 259.9 754.0 259.3 755.0 258.9C756.0 258.4 757.0 258.0 758.0 257.6C759.0 257.2 760.0 256.8 761.0 256.5C762.0 256.2 763.0 256.0 764.0 255.8C765.0 255.6 766.0 255.5 767.0 255.5C768.0 255.4 769.0 255.5 770.0 255.5C771.0 255.6 772.0 255.7 773.0 255.8C774.0 255.9 775.0 256.1 776.0 256.2C777.0 256.4 778.0 256.5 779.0 256.7C780.0 256.8 781.0 256.9 782.0 257.0C783.0 257.1 784.0 257.2 785.0 257.3C786.0 257.3 787.0 257.4 788.0 257.4C789.0 257.4 790.0 257.4 791.0 257.4C792.0 257.4 793.0 257.4 794.0 257.4C795.0 257.4 796.0 257.4 797.0 257.5C798.0 257.5 799.0 257.5 800.0 257.5C801.0 257.5 802.0 257.6 803.0 257.6C804.0 257.6 805.0 257.6 806.0 257.6C807.0 257.6 808.0 257.6 809.0 257.6C810.0 257.5 811.0 257.4 812.0 257.3C813.0 257.2 814.0 257.0 815.0 256.8C816.0 256.6 817.0 256.3 818.0 256.0C819.0 255.7 820.0 255.4 821.0 255.0C822.0 254.7 823.0 254.3 824.0 253.9C825.0 253.5 826.0 253.1 827.0 252.8C828.0 252.4 829.0 252.1 830.0 251.8C831.0 251.6 832.0 251.3 833.0 251.2C834.0 251.0 835.0 251.0 836.0 251.0C837.0 251.0 838.0 251.0 839.0 251.2C840.0 251.3 841.0 251.5 842.0 251.8C843.0 252.1 844.0 252.4 845.0 252.7C846.0 253.0 847.0 253.4 848.0 253.7C849.0 254.1 850.0 254.5 851.0 254.8C852.0 255.1 853.0 255.4 854.0 255.6C855.0 255.9 856.0 256.1 857.0 256.2C858.0 256.4 859.0 256.4 860.0 256.5C861.0 256.5 862.0 256.5 863.0 256.5C864.0 256.4 865.0 256.3 866.0 256.2C867.0 256.1 868.0 256.0 869.0 255.9C870.0 255.7 871.0 255.6 872.0 255.4C873.0 255.3 874.0 255.2 875.0 255.1C876.0 254.9 877.0 254.8 878.0 254.7C879.0 254.6 880.0 254.6 881.0 254.5C882.0 254.4 883.0 254.3 884.0 254.2C885.0 254.1 886.0 254.0 887.0 253.9C888.0 253.8 889.0 253.6 890.0 253.5C891.0 253.3 892.0 253.2 893.0 253.0C894.0 252.8 895.0 252.6 896.0 252.5C897.0 252.3 898.0 252.1 899.0 252.0C900.0 251.8 901.0 251.6 902.0 251.5C903.0 251.4 904.0 251.2 905.0 251.2C906.0 251.2 907.0 251.2 908.0 251.3C909.0 251.5 910.0 251.8 911.0 252.2C912.0 252.6 913.0 253.1 914.0 253.7C915.0 254.3 916.0 255.0 917.0 255.6C918.0 256.2 919.0 256.9 920.0 257.4C921.0 258.0 922.0 258.5 923.0 258.8C924.0 259.1 925.0 259.3 926.0 259.3C927.0 259.4 928.0 259.2 929.0 259.0C930.0 258.8 931.0 258.4 932.0 258.1C933.0 257.7 934.0 257.2 935.0 256.9C936.0 256.6 937.0 256.2 938.0 256.1C939.0 255.9 940.0 255.8 941.0 255.9C942.0 255.9 943.0 256.1 944.0 256.3C945.0 256.6 946.0 256.9 947.0 257.2C948.0 257.5 949.0 257.9 950.0 258.1C951.0 258.3 952.0 258.4 953.0 258.4C954.0 258.3 955.0 258.1 956.0 257.8C957.0 257.4 958.0 256.9 959.0 256.3C960.0 255.8 961.0 255.0 962.0 254.4C963.0 253.9 964.0 253.2 965.0 252.9C966.0 252.5 967.0 252.2 968.0 252.3C969.0 252.3 970.0 252.6 971.0 253.1C972.0 253.6 973.0 254.5 974.0 255.5C975.0 256.4 976.0 257.7 977.0 258.9C978.0 260.0 979.0 261.4 980.0 262.5C981.0 263.5 982.0 264.6 983.0 265.3C984.0 266.0 985.0 266.5 986.0 266.7C987.0 266.9 988.0 266.7 989.0 266.3C990.0 266.0 991.0 265.3 992.0 264.6C993.0 263.9 994.0 263.0 995.0 262.3C996.0 261.6 997.0 260.8 998.0 260.4C999.0 260.0 1000.0 259.7 1001.0 259.8C1002.0 259.9 1003.0 260.4 1004.0 261.0C1005.0 261.6 1006.0 262.6 1007.0 263.5C1008.0 264.5 1009.0 265.7 1010.0 266.6C1011.0 267.5 1012.0 268.5 1013.0 269.0C1014.0 269.4 1015.0 269.7 1016.0 269.5C1017.0 269.4 1018.0 268.8 1019.0 267.9C1020.0 267.0 1021.0 265.5 1022.0 264.2C1023.0 262.8 1024.0 260.9 1025.0 259.5C1026.0 258.0 1027.0 256.4 1028.0 255.3C1029.0 254.3 1030.0 253.4 1031.0 253.2C1032.0 253.0 1033.0 253.2 1034.0 254.0C1035.0 254.7 1036.0 256.1 1037.0 257.7C1038.0 259.2 1037.7 261.6 1040.0 263.3C1042.3 265.1 1047.5 265.2 1051.0 268.3C1054.5 271.5 1057.0 273.2 1061.0 282.3C1065.0 291.5 1072.4 312.6 1075.2 323.0C1078.0 333.4 1076.9 340.3 1077.7 345.0C1078.5 349.7 1079.3 353.3 1080.2 351.0C1081.1 348.7 1082.6 339.2 1083.2 331.0C1083.8 322.8 1084.0 312.0 1083.9 301.5C1083.8 291.0 1083.5 276.2 1082.7 268.0C1081.9 259.8 1080.5 252.0 1079.2 252.0C1078.0 252.0 1076.1 259.8 1075.2 268.0C1074.3 276.2 1073.8 292.3 1073.7 301.5C1073.6 310.7 1074.3 316.4 1074.7 323.0C1075.1 329.6 1076.0 338.0 1076.2 341.0" fill="none" stroke="#4848a8" stroke-width="1.0" stroke-opacity="0.8"/><path d="M1077.0 341.0C1076.8 338.0 1075.9 329.6 1075.5 323.0C1075.1 316.4 1074.4 310.7 1074.5 301.5C1074.6 292.3 1075.1 276.1 1076.0 268.0C1076.9 259.9 1078.8 253.0 1080.0 253.0C1081.2 253.0 1082.7 259.9 1083.5 268.0C1084.3 276.1 1084.6 291.0 1084.7 301.5C1084.8 312.0 1084.6 322.8 1084.0 331.0C1083.4 339.2 1081.9 348.7 1081.0 351.0C1080.1 353.3 1079.3 349.7 1078.5 345.0C1077.7 340.3 1078.9 334.0 1076.0 323.0C1073.1 312.0 1065.2 288.5 1061.0 278.7C1056.8 269.0 1054.5 267.9 1051.0 264.7C1047.5 261.6 1042.3 260.9 1040.0 259.7C1037.7 258.6 1038.0 258.0 1037.0 258.0C1036.0 258.1 1035.0 259.0 1034.0 260.1C1033.0 261.3 1032.0 263.2 1031.0 265.0C1030.0 266.7 1029.0 268.9 1028.0 270.4C1027.0 271.9 1026.0 273.4 1025.0 274.0C1024.0 274.7 1023.0 274.8 1022.0 274.3C1021.0 273.8 1020.0 272.5 1019.0 271.0C1018.0 269.5 1017.0 267.2 1016.0 265.3C1015.0 263.4 1014.0 261.0 1013.0 259.3C1012.0 257.7 1011.0 256.1 1010.0 255.2C1009.0 254.3 1008.0 254.0 1007.0 254.1C1006.0 254.2 1005.0 255.1 1004.0 256.0C1003.0 256.9 1002.0 258.5 1001.0 259.7C1000.0 260.9 999.0 262.5 998.0 263.4C997.0 264.4 996.0 265.3 995.0 265.6C994.0 265.9 993.0 265.8 992.0 265.4C991.0 265.1 990.0 264.1 989.0 263.2C988.0 262.4 987.0 261.1 986.0 260.1C985.0 259.2 984.0 258.2 983.0 257.6C982.0 257.0 981.0 256.6 980.0 256.7C979.0 256.7 978.0 257.1 977.0 257.7C976.0 258.2 975.0 259.2 974.0 260.1C973.0 261.0 972.0 262.1 971.0 262.8C970.0 263.6 969.0 264.3 968.0 264.7C967.0 265.0 966.0 265.1 965.0 265.0C964.0 264.8 963.0 264.2 962.0 263.6C961.0 262.9 960.0 261.9 959.0 261.1C958.0 260.2 957.0 259.2 956.0 258.5C955.0 257.7 954.0 257.0 953.0 256.5C952.0 256.0 951.0 255.7 950.0 255.5C949.0 255.3 948.0 255.4 947.0 255.4C946.0 255.4 945.0 255.6 944.0 255.7C943.0 255.8 942.0 255.9 941.0 255.9C940.0 255.8 939.0 255.7 938.0 255.5C937.0 255.3 936.0 254.9 935.0 254.6C934.0 254.2 933.0 253.7 932.0 253.4C931.0 253.1 930.0 252.7 929.0 252.6C928.0 252.4 927.0 252.3 926.0 252.4C925.0 252.5 924.0 252.7 923.0 253.0C922.0 253.3 921.0 253.7 920.0 254.1C919.0 254.5 918.0 254.9 917.0 255.2C916.0 255.6 915.0 255.9 914.0 256.1C913.0 256.3 912.0 256.4 911.0 256.4C910.0 256.5 909.0 256.4 908.0 256.4C907.0 256.4 906.0 256.3 905.0 256.4C904.0 256.4 903.0 256.4 902.0 256.5C901.0 256.6 900.0 256.8 899.0 257.0C898.0 257.1 897.0 257.3 896.0 257.4C895.0 257.5 894.0 257.6 893.0 257.7C892.0 257.7 891.0 257.7 890.0 257.6C889.0 257.5 888.0 257.4 887.0 257.1C886.0 256.9 885.0 256.6 884.0 256.2C883.0 255.9 882.0 255.5 881.0 255.0C880.0 254.6 879.0 254.2 878.0 253.8C877.0 253.4 876.0 253.0 875.0 252.6C874.0 252.3 873.0 252.0 872.0 251.8C871.0 251.6 870.0 251.5 869.0 251.4C868.0 251.4 867.0 251.4 866.0 251.5C865.0 251.6 864.0 251.7 863.0 251.9C862.0 252.1 861.0 252.3 860.0 252.5C859.0 252.7 858.0 253.0 857.0 253.2C856.0 253.4 855.0 253.6 854.0 253.8C853.0 253.9 852.0 254.0 851.0 254.2C850.0 254.3 849.0 254.4 848.0 254.4C847.0 254.5 846.0 254.6 845.0 254.7C844.0 254.8 843.0 254.9 842.0 255.0C841.0 255.1 840.0 255.3 839.0 255.4C838.0 255.6 837.0 255.8 836.0 256.1C835.0 256.3 834.0 256.6 833.0 256.8C832.0 257.0 831.0 257.3 830.0 257.5C829.0 257.7 828.0 257.9 827.0 258.0C826.0 258.2 825.0 258.3 824.0 258.2C823.0 258.2 822.0 258.2 821.0 258.0C820.0 257.9 819.0 257.7 818.0 257.4C817.0 257.1 816.0 256.8 815.0 256.5C814.0 256.2 813.0 255.8 812.0 255.5C811.0 255.1 810.0 254.8 809.0 254.5C808.0 254.3 807.0 254.0 806.0 253.9C805.0 253.7 804.0 253.7 803.0 253.6C802.0 253.6 801.0 253.7 800.0 253.8C799.0 253.9 798.0 254.1 797.0 254.2C796.0 254.4 795.0 254.7 794.0 254.9C793.0 255.1 792.0 255.3 791.0 255.5C790.0 255.7 789.0 255.9 788.0 256.1C787.0 256.3 786.0 256.4 785.0 256.6C784.0 256.7 783.0 256.8 782.0 257.0C781.0 257.1 780.0 257.2 779.0 257.4C778.0 257.5 777.0 257.7 776.0 257.9C775.0 258.1 774.0 258.4 773.0 258.6C772.0 258.9 771.0 259.3 770.0 259.6C769.0 259.9 768.0 260.3 767.0 260.7C766.0 261.0 765.0 261.4 764.0 261.7C763.0 262.0 762.0 262.3 761.0 262.5C760.0 262.7 759.0 262.9 758.0 263.0C757.0 263.0 756.0 263.0 755.0 263.0C754.0 262.9 753.0 262.8 752.0 262.6C751.0 262.4 750.0 262.1 749.0 261.8C748.0 261.6 747.0 261.3 746.0 261.0C745.0 260.7 744.0 260.5 743.0 260.3C742.0 260.0 741.0 259.9 740.0 259.8C739.0 259.6 738.0 259.6 737.0 259.6C736.0 259.6 735.0 259.7 734.0 259.8C733.0 259.9 732.0 260.1 731.0 260.3C730.0 260.5 729.0 260.7 728.0 260.9C727.0 261.1 726.0 261.4 725.0 261.5C724.0 261.7 723.0 261.9 722.0 262.1C721.0 262.3 720.0 262.4 719.0 262.5C718.0 262.7 717.0 262.8 716.0 263.0C715.0 263.1 714.0 263.3 713.0 263.5C712.0 263.7 711.0 263.9 710.0 264.2C709.0 264.4 708.0 264.8 707.0 265.1C706.0 265.5 705.0 265.9 704.0 266.3C703.0 266.7 702.0 267.2 701.0 267.6C700.0 268.1 699.0 268.5 698.0 268.9C697.0 269.3 696.0 269.7 695.0 270.0C694.0 270.3 693.0 270.5 692.0 270.7C691.0 270.9 690.0 270.9 689.0 270.9C688.0 270.9 687.0 270.8 686.0 270.7C685.0 270.6 684.0 270.4 683.0 270.2C682.0 270.0 681.0 269.8 680.0 269.6C679.0 269.3 678.0 269.1 677.0 268.9C676.0 268.8 675.0 268.6 674.0 268.6C673.0 268.5 672.0 268.5 671.0 268.5C670.0 268.6 669.0 268.7 668.0 268.8C667.0 268.9 666.0 269.1 665.0 269.3C664.0 269.4 663.0 269.6 662.0 269.8C661.0 270.0 660.0 270.2 659.0 270.4C658.0 270.5 657.0 270.7 656.0 270.8C655.0 271.0 654.0 271.1 653.0 271.2C652.0 271.3 651.0 271.4 650.0 271.6C649.0 271.8 648.0 271.9 647.0 272.1C646.0 272.4 645.0 272.6 644.0 272.9C643.0 273.2 642.0 273.6 641.0 274.0C640.0 274.4 639.0 274.9 638.0 275.4C637.0 275.9 636.0 276.4 635.0 276.9C634.0 277.4 633.0 277.9 632.0 278.4C631.0 278.8 630.0 279.3 629.0 279.6C628.0 280.0 627.0 280.3 626.0 280.5C625.0 280.7 624.0 280.8 623.0 280.9C622.0 280.9 621.0 280.9 620.0 280.8C619.0 280.7 618.0 280.6 617.0 280.4C616.0 280.3 615.0 280.1 614.0 279.9C613.0 279.8 612.0 279.6 611.0 279.4C610.0 279.3 609.0 279.2 608.0 279.2C607.0 279.1 606.0 279.1 605.0 279.1C604.0 279.2 603.0 279.2 602.0 279.4C601.0 279.5 600.0 279.6 599.0 279.8C598.0 280.0 597.0 280.2 596.0 280.4C595.0 280.6 594.0 280.8 593.0 281.0C592.0 281.2 591.0 281.3 590.0 281.5C589.0 281.6 588.0 281.7 587.0 281.9C586.0 282.0 585.0 282.1 584.0 282.3C583.0 282.5 582.0 282.7 581.0 282.9C580.0 283.2 579.0 283.5 578.0 283.9C577.0 284.2 576.0 284.6 575.0 285.1C574.0 285.6 573.0 286.1 572.0 286.7C571.0 287.2 570.0 287.8 569.0 288.4C568.0 288.9 567.0 289.5 566.0 290.0C565.0 290.6 564.0 291.1 563.0 291.5C562.0 291.9 561.0 292.2 560.0 292.5C559.0 292.8 558.0 292.9 557.0 293.1C556.0 293.2 555.0 293.2 554.0 293.2C553.0 293.1 552.0 293.0 551.0 292.9C550.0 292.8 549.0 292.7 548.0 292.6C547.0 292.5 546.0 292.3 545.0 292.2C544.0 292.2 543.0 292.1 542.0 292.1C541.0 292.0 540.0 292.0 539.0 292.1C538.0 292.1 537.0 292.2 536.0 292.3C535.0 292.4 534.0 292.5 533.0 292.5C532.0 292.6 531.0 292.7 530.0 292.8C529.0 292.8 528.0 292.9 527.0 292.9C526.0 292.9 525.0 292.9 524.0 292.9C523.0 292.9 522.0 292.8 521.0 292.8C520.0 292.8 519.0 292.8 518.0 292.8C517.0 292.8 516.0 292.9 515.0 293.0C514.0 293.1 513.0 293.3 512.0 293.6C511.0 293.8 510.0 294.1 509.0 294.5C508.0 294.8 507.0 295.3 506.0 295.7C505.0 296.2 504.0 296.7 503.0 297.1C502.0 297.6 501.0 298.1 500.0 298.5C499.0 298.9 498.0 299.4 497.0 299.7C496.0 300.1 495.0 300.3 494.0 300.5C493.0 300.7 492.0 300.8 491.0 300.9C490.0 300.9 489.0 300.9 488.0 300.8C487.0 300.7 486.0 300.5 485.0 300.4C484.0 300.2 483.0 300.0 482.0 299.9C481.0 299.7 480.0 299.5 479.0 299.3C478.0 299.2 477.0 299.1 476.0 299.0C475.0 298.8 474.0 298.8 473.0 298.7C472.0 298.7 471.0 298.6 470.0 298.6C469.0 298.6 468.0 298.5 467.0 298.5C466.0 298.4 465.0 298.4 464.0 298.3C463.0 298.2 462.0 298.0 461.0 297.9C460.0 297.7 459.0 297.6 458.0 297.4C457.0 297.2 456.0 297.0 455.0 296.8C454.0 296.6 453.0 296.3 452.0 296.2C451.0 296.0 450.0 295.8 449.0 295.8C448.0 295.7 447.0 295.7 446.0 295.7C445.0 295.8 444.0 295.9 443.0 296.1C442.0 296.2 441.0 296.5 440.0 296.8C439.0 297.1 438.0 297.5 437.0 297.8C436.0 298.2 435.0 298.5 434.0 298.8C433.0 299.1 432.0 299.4 431.0 299.6C430.0 299.9 429.0 300.0 428.0 300.1C427.0 300.2 426.0 300.2 425.0 300.1C424.0 300.1 423.0 299.9 422.0 299.8C421.0 299.6 420.0 299.4 419.0 299.2C418.0 298.9 417.0 298.7 416.0 298.5C415.0 298.2 414.0 298.0 413.0 297.8C412.0 297.6 411.0 297.4 410.0 297.3C409.0 297.1 408.0 297.0 407.0 296.9C406.0 296.8 405.0 296.7 404.0 296.6C403.0 296.4 402.0 296.3 401.0 296.2C400.0 296.1 399.0 295.9 398.0 295.7C397.0 295.5 396.0 295.3 395.0 295.0C394.0 294.8 393.0 294.5 392.0 294.2C391.0 293.9 390.0 293.6 389.0 293.3C388.0 293.0 387.0 292.8 386.0 292.6C385.0 292.4 384.0 292.2 383.0 292.1C382.0 292.0 385.2 290.9 380.0 292.1C374.8 293.2 360.7 297.0 351.8 299.0C342.9 301.0 336.0 302.4 326.8 304.0C317.6 305.6 307.3 307.1 296.8 308.5C286.3 309.9 272.1 310.8 263.8 312.5C255.5 314.2 253.0 315.8 246.8 319.0C240.6 322.2 233.3 328.3 226.8 331.5C220.3 334.7 213.6 337.2 208.0 338.2C202.4 339.2 199.3 338.6 193.0 337.5C186.7 336.4 176.2 330.5 170.0 331.8C163.8 333.1 159.3 342.2 156.0 345.5C152.7 348.8 152.3 352.4 150.0 351.8C147.7 351.2 145.3 349.0 142.0 342.0C138.7 335.0 132.8 310.7 130.0 310.0C127.2 309.3 126.8 327.0 125.0 338.0C123.2 349.0 120.5 376.3 119.1 375.8C117.6 375.3 116.7 351.0 116.3 335.0C115.9 319.0 116.0 295.7 116.5 280.0C117.0 264.3 118.2 245.9 119.5 240.9C120.8 235.9 122.2 245.0 124.0 250.0C125.8 255.0 127.8 264.2 130.0 271.0C132.2 277.8 134.3 285.3 137.0 291.0C139.7 296.7 142.5 301.2 146.0 305.0C149.5 308.8 153.8 311.7 158.0 313.5C162.2 315.3 166.7 315.5 171.0 316.0C175.3 316.5 180.7 316.3 184.0 316.5C187.3 316.7 189.3 317.0 191.0 317.0C192.7 317.0 193.0 316.7 194.0 316.5C195.0 316.3 196.0 316.1 197.0 316.0C198.0 315.8 199.0 315.6 200.0 315.4C201.0 315.3 202.0 315.2 203.0 315.1C204.0 315.0 205.0 314.9 206.0 314.8C207.0 314.7 208.0 314.6 209.0 314.5C210.0 314.4 211.0 314.3 212.0 314.2C213.0 314.1 214.0 314.0 215.0 313.9C216.0 313.7 217.0 313.6 218.0 313.5C219.0 313.3 220.0 313.2 221.0 313.0C222.0 312.9 223.0 312.7 224.0 312.6C225.0 312.5 226.0 312.3 227.0 312.2C228.0 312.1 229.0 312.1 230.0 312.0C231.0 312.0 232.0 312.0 233.0 312.0C234.0 312.0 235.0 312.1 236.0 312.2C237.0 312.3 238.0 312.5 239.0 312.6C240.0 312.8 241.0 313.0 242.0 313.1C243.0 313.3 244.0 313.4 245.0 313.5C246.0 313.6 247.0 313.7 248.0 313.7C249.0 313.8 250.0 313.7 251.0 313.6C252.0 313.5 253.0 313.4 254.0 313.2C255.0 313.0 256.0 312.7 257.0 312.5C258.0 312.2 259.0 311.9 260.0 311.6C261.0 311.3 262.0 311.0 263.0 310.8C264.0 310.5 265.0 310.3 266.0 310.0C267.0 309.8 268.0 309.6 269.0 309.4C270.0 309.2 271.0 309.1 272.0 308.9C273.0 308.8 274.0 308.6 275.0 308.5C276.0 308.3 277.0 308.1 278.0 307.9C279.0 307.7 280.0 307.4 281.0 307.1C282.0 306.8 283.0 306.4 284.0 306.0C285.0 305.7 286.0 305.3 287.0 304.9C288.0 304.5 289.0 304.1 290.0 303.8C291.0 303.5 292.0 303.2 293.0 303.0C294.0 302.8 295.0 302.7 296.0 302.6C297.0 302.6 298.0 302.6 299.0 302.7C300.0 302.8 301.0 303.0 302.0 303.3C303.0 303.5 304.0 303.8 305.0 304.1C306.0 304.4 307.0 304.7 308.0 305.0C309.0 305.2 310.0 305.4 311.0 305.6C312.0 305.7 313.0 305.8 314.0 305.9C315.0 305.9 316.0 305.8 317.0 305.7C318.0 305.6 319.0 305.4 320.0 305.2C321.0 305.0 322.0 304.7 323.0 304.4C324.0 304.1 325.0 303.8 326.0 303.5C327.0 303.2 328.0 302.9 329.0 302.7C330.0 302.4 331.0 302.2 332.0 301.9C333.0 301.7 334.0 301.5 335.0 301.3C336.0 301.1 337.0 300.9 338.0 300.6C339.0 300.4 340.0 300.2 341.0 299.9C342.0 299.7 343.0 299.4 344.0 299.1C345.0 298.8 346.0 298.4 347.0 298.0C348.0 297.7 349.0 297.3 350.0 296.9C351.0 296.5 352.0 296.1 353.0 295.8C354.0 295.4 355.0 295.1 356.0 294.9C357.0 294.7 358.0 294.5 359.0 294.4C360.0 294.3 361.0 294.4 362.0 294.5C363.0 294.6 364.0 294.8 365.0 295.0C366.0 295.3 367.0 295.7 368.0 296.0C369.0 296.4 370.0 296.8 371.0 297.2C372.0 297.6 373.0 298.0 374.0 298.4C375.0 298.7 376.0 299.1 377.0 299.3C378.0 299.6 379.0 299.8 380.0 300.0C381.0 300.1 382.0 300.2 383.0 300.2C384.0 300.3 385.0 300.2 386.0 300.2C387.0 300.2 388.0 300.1 389.0 300.0C390.0 299.9 391.0 299.9 392.0 299.8C393.0 299.7 394.0 299.7 395.0 299.7C396.0 299.6 397.0 299.6 398.0 299.6C399.0 299.6 400.0 299.6 401.0 299.7C402.0 299.7 403.0 299.7 404.0 299.6C405.0 299.6 406.0 299.6 407.0 299.5C408.0 299.4 409.0 299.3 410.0 299.1C411.0 299.0 412.0 298.8 413.0 298.5C414.0 298.3 415.0 298.1 416.0 297.8C417.0 297.6 418.0 297.3 419.0 297.1C420.0 296.9 421.0 296.7 422.0 296.6C423.0 296.5 424.0 296.4 425.0 296.4C426.0 296.5 427.0 296.6 428.0 296.8C429.0 296.9 430.0 297.2 431.0 297.5C432.0 297.8 433.0 298.2 434.0 298.6C435.0 299.0 436.0 299.5 437.0 299.8C438.0 300.2 439.0 300.6 440.0 301.0C441.0 301.4 442.0 301.7 443.0 302.0C444.0 302.3 445.0 302.6 446.0 302.8C447.0 302.9 448.0 303.1 449.0 303.1C450.0 303.2 451.0 303.2 452.0 303.3C453.0 303.3 454.0 303.3 455.0 303.2C456.0 303.2 457.0 303.2 458.0 303.2C459.0 303.1 460.0 303.1 461.0 303.1C462.0 303.1 463.0 303.1 464.0 303.1C465.0 303.1 466.0 303.1 467.0 303.1C468.0 303.1 469.0 303.0 470.0 303.0C471.0 302.9 472.0 302.7 473.0 302.5C474.0 302.4 475.0 302.1 476.0 301.8C477.0 301.5 478.0 301.2 479.0 300.8C480.0 300.4 481.0 300.0 482.0 299.6C483.0 299.2 484.0 298.8 485.0 298.4C486.0 298.1 487.0 297.7 488.0 297.5C489.0 297.2 490.0 297.0 491.0 296.9C492.0 296.8 493.0 296.8 494.0 296.8C495.0 296.8 496.0 297.0 497.0 297.1C498.0 297.3 499.0 297.5 500.0 297.7C501.0 297.9 502.0 298.2 503.0 298.4C504.0 298.6 505.0 298.9 506.0 299.0C507.0 299.2 508.0 299.4 509.0 299.5C510.0 299.5 511.0 299.6 512.0 299.6C513.0 299.6 514.0 299.5 515.0 299.5C516.0 299.4 517.0 299.3 518.0 299.2C519.0 299.1 520.0 299.0 521.0 298.9C522.0 298.8 523.0 298.7 524.0 298.7C525.0 298.6 526.0 298.6 527.0 298.5C528.0 298.5 529.0 298.5 530.0 298.4C531.0 298.4 532.0 298.4 533.0 298.2C534.0 298.1 535.0 298.0 536.0 297.8C537.0 297.6 538.0 297.4 539.0 297.1C540.0 296.7 541.0 296.3 542.0 295.9C543.0 295.5 544.0 295.0 545.0 294.5C546.0 294.0 547.0 293.4 548.0 292.9C549.0 292.3 550.0 291.8 551.0 291.3C552.0 290.8 553.0 290.4 554.0 290.0C555.0 289.6 556.0 289.3 557.0 289.1C558.0 288.9 559.0 288.7 560.0 288.6C561.0 288.6 562.0 288.6 563.0 288.6C564.0 288.6 565.0 288.7 566.0 288.7C567.0 288.8 568.0 288.9 569.0 289.0C570.0 289.0 571.0 289.1 572.0 289.1C573.0 289.1 574.0 289.1 575.0 289.0C576.0 288.9 577.0 288.8 578.0 288.7C579.0 288.6 580.0 288.4 581.0 288.3C582.0 288.1 583.0 287.9 584.0 287.8C585.0 287.6 586.0 287.5 587.0 287.4C588.0 287.3 589.0 287.2 590.0 287.1C591.0 287.0 592.0 287.0 593.0 286.9C594.0 286.9 595.0 286.8 596.0 286.7C597.0 286.7 598.0 286.5 599.0 286.4C600.0 286.3 601.0 286.2 602.0 285.9C603.0 285.7 604.0 285.5 605.0 285.2C606.0 284.8 607.0 284.4 608.0 284.0C609.0 283.5 610.0 283.0 611.0 282.5C612.0 282.0 613.0 281.4 614.0 280.8C615.0 280.3 616.0 279.8 617.0 279.3C618.0 278.8 619.0 278.4 620.0 278.0C621.0 277.7 622.0 277.4 623.0 277.2C624.0 276.9 625.0 276.8 626.0 276.7C627.0 276.6 628.0 276.6 629.0 276.6C630.0 276.6 631.0 276.7 632.0 276.7C633.0 276.8 634.0 276.9 635.0 276.9C636.0 276.9 637.0 276.9 638.0 276.9C639.0 276.9 640.0 276.9 641.0 276.8C642.0 276.7 643.0 276.7 644.0 276.6C645.0 276.5 646.0 276.4 647.0 276.3C648.0 276.2 649.0 276.1 650.0 276.1C651.0 276.0 652.0 276.0 653.0 276.0C654.0 276.0 655.0 276.1 656.0 276.1C657.0 276.2 658.0 276.3 659.0 276.4C660.0 276.4 661.0 276.5 662.0 276.6C663.0 276.6 664.0 276.6 665.0 276.6C666.0 276.5 667.0 276.4 668.0 276.2C669.0 276.1 670.0 275.8 671.0 275.5C672.0 275.1 673.0 274.7 674.0 274.3C675.0 273.8 676.0 273.3 677.0 272.8C678.0 272.3 679.0 271.7 680.0 271.2C681.0 270.7 682.0 270.2 683.0 269.7C684.0 269.3 685.0 268.9 686.0 268.5C687.0 268.2 688.0 267.9 689.0 267.7C690.0 267.5 691.0 267.4 692.0 267.3C693.0 267.2 694.0 267.2 695.0 267.2C696.0 267.1 697.0 267.2 698.0 267.2C699.0 267.1 700.0 267.2 701.0 267.1C702.0 267.1 703.0 267.1 704.0 267.0C705.0 267.0 706.0 266.9 707.0 266.8C708.0 266.7 709.0 266.6 710.0 266.5C711.0 266.5 712.0 266.4 713.0 266.3C714.0 266.3 715.0 266.3 716.0 266.3C717.0 266.4 718.0 266.4 719.0 266.5C720.0 266.6 721.0 266.8 722.0 266.9C723.0 267.1 724.0 267.3 725.0 267.5C726.0 267.6 727.0 267.8 728.0 267.9C729.0 268.0 730.0 268.1 731.0 268.1C732.0 268.1 733.0 268.1 734.0 267.9C735.0 267.8 736.0 267.6 737.0 267.3C738.0 267.0 739.0 266.6 740.0 266.2C741.0 265.8 742.0 265.3 743.0 264.9C744.0 264.4 745.0 263.9 746.0 263.5C747.0 263.0 748.0 262.5 749.0 262.2C750.0 261.8 751.0 261.4 752.0 261.2C753.0 260.9 754.0 260.7 755.0 260.5C756.0 260.3 757.0 260.2 758.0 260.2C759.0 260.1 760.0 260.1 761.0 260.0C762.0 260.0 763.0 260.0 764.0 259.9C765.0 259.9 766.0 259.9 767.0 259.8C768.0 259.8 769.0 259.7 770.0 259.6C771.0 259.5 772.0 259.4 773.0 259.3C774.0 259.2 775.0 259.1 776.0 259.1C777.0 259.0 778.0 259.0 779.0 259.0C780.0 259.0 781.0 259.1 782.0 259.2C783.0 259.3 784.0 259.5 785.0 259.7C786.0 259.9 787.0 260.1 788.0 260.4C789.0 260.6 790.0 260.9 791.0 261.2C792.0 261.4 793.0 261.7 794.0 261.9C795.0 262.1 796.0 262.3 797.0 262.3C798.0 262.4 799.0 262.4 800.0 262.3C801.0 262.2 802.0 262.1 803.0 261.8C804.0 261.6 805.0 261.3 806.0 261.0C807.0 260.6 808.0 260.2 809.0 259.9C810.0 259.5 811.0 259.1 812.0 258.7C813.0 258.3 814.0 258.0 815.0 257.7C816.0 257.4 817.0 257.1 818.0 256.9C819.0 256.7 820.0 256.6 821.0 256.5C822.0 256.4 823.0 256.3 824.0 256.2C825.0 256.2 826.0 256.2 827.0 256.1C828.0 256.1 829.0 256.0 830.0 256.0C831.0 255.9 832.0 255.9 833.0 255.8C834.0 255.7 835.0 255.6 836.0 255.5C837.0 255.4 838.0 255.3 839.0 255.2C840.0 255.1 841.0 255.0 842.0 255.0C843.0 255.0 844.0 255.0 845.0 255.1C846.0 255.2 847.0 255.3 848.0 255.5C849.0 255.7 850.0 256.0 851.0 256.3C852.0 256.6 853.0 257.0 854.0 257.3C855.0 257.7 856.0 258.1 857.0 258.4C858.0 258.8 859.0 259.2 860.0 259.4C861.0 259.7 862.0 260.0 863.0 260.1C864.0 260.3 865.0 260.4 866.0 260.4C867.0 260.4 868.0 260.3 869.0 260.1C870.0 260.0 871.0 259.8 872.0 259.5C873.0 259.3 874.0 259.0 875.0 258.7C876.0 258.5 877.0 258.1 878.0 257.9C879.0 257.6 880.0 257.4 881.0 257.2C882.0 257.0 883.0 256.8 884.0 256.7C885.0 256.6 886.0 256.5 887.0 256.4C888.0 256.4 889.0 256.3 890.0 256.3C891.0 256.3 892.0 256.2 893.0 256.2C894.0 256.1 895.0 256.1 896.0 256.0C897.0 255.9 898.0 255.7 899.0 255.6C900.0 255.5 901.0 255.4 902.0 255.3C903.0 255.1 904.0 255.0 905.0 254.8C906.0 254.7 907.0 254.5 908.0 254.4C909.0 254.2 910.0 254.1 911.0 254.2C912.0 254.2 913.0 254.3 914.0 254.5C915.0 254.8 916.0 255.1 917.0 255.6C918.0 256.1 919.0 256.8 920.0 257.4C921.0 258.1 922.0 258.9 923.0 259.7C924.0 260.4 925.0 261.2 926.0 261.8C927.0 262.5 928.0 263.1 929.0 263.4C930.0 263.8 931.0 264.0 932.0 264.0C933.0 264.0 934.0 263.8 935.0 263.5C936.0 263.1 937.0 262.5 938.0 261.9C939.0 261.4 940.0 260.6 941.0 260.0C942.0 259.3 943.0 258.6 944.0 258.2C945.0 257.7 946.0 257.4 947.0 257.2C948.0 257.1 949.0 257.2 950.0 257.4C951.0 257.7 952.0 258.2 953.0 258.8C954.0 259.3 955.0 260.1 956.0 260.7C957.0 261.3 958.0 262.0 959.0 262.5C960.0 263.0 961.0 263.4 962.0 263.5C963.0 263.7 964.0 263.6 965.0 263.2C966.0 262.9 967.0 262.3 968.0 261.6C969.0 260.9 970.0 259.9 971.0 259.0C972.0 258.2 973.0 257.1 974.0 256.4C975.0 255.7 976.0 255.1 977.0 254.8C978.0 254.6 979.0 254.6 980.0 255.0C981.0 255.4 982.0 256.2 983.0 257.3C984.0 258.3 985.0 259.8 986.0 261.3C987.0 262.8 988.0 264.7 989.0 266.3C990.0 267.8 991.0 269.6 992.0 270.8C993.0 272.1 994.0 273.2 995.0 273.8C996.0 274.4 997.0 274.7 998.0 274.5C999.0 274.3 1000.0 273.6 1001.0 272.7C1002.0 271.8 1003.0 270.4 1004.0 269.1C1005.0 267.9 1006.0 266.3 1007.0 265.0C1008.0 263.8 1009.0 262.5 1010.0 261.8C1011.0 261.0 1012.0 260.5 1013.0 260.5C1014.0 260.4 1015.0 260.9 1016.0 261.6C1017.0 262.3 1018.0 263.6 1019.0 264.8C1020.0 266.0 1021.0 267.7 1022.0 269.0C1023.0 270.3 1024.0 271.8 1025.0 272.7C1026.0 273.6 1027.0 274.4 1028.0 274.6C1029.0 274.7 1030.0 274.4 1031.0 273.7C1032.0 272.9 1033.0 271.6 1034.0 270.1C1035.0 268.7 1036.0 266.7 1037.0 264.9C1038.0 263.1 1037.2 259.6 1040.0 259.5C1042.8 259.5 1049.7 261.4 1054.0 264.5C1058.3 267.7 1060.8 268.9 1066.0 278.5C1071.2 288.1 1081.3 311.1 1084.9 322.0C1088.5 332.9 1086.6 339.3 1087.4 344.0C1088.2 348.7 1089.0 352.3 1089.9 350.0C1090.8 347.7 1092.3 338.1 1092.9 330.0C1093.5 321.9 1093.7 311.7 1093.6 301.5C1093.5 291.3 1093.2 277.1 1092.4 269.0C1091.6 260.9 1090.2 253.0 1088.9 253.0C1087.7 253.0 1085.8 260.9 1084.9 269.0C1084.0 277.1 1083.5 292.7 1083.4 301.5C1083.3 310.3 1084.0 315.6 1084.4 322.0C1084.8 328.4 1085.7 337.0 1085.9 340.0" fill="none" stroke="#4848a8" stroke-width="1.0" stroke-opacity="0.8"/><path d="M350.0 295.7C350.5 295.7 352.0 295.7 353.0 295.7C354.0 295.7 355.0 295.6 356.0 295.6C357.0 295.5 358.0 295.4 359.0 295.4C360.0 295.3 361.0 295.2 362.0 295.2C363.0 295.1 364.0 295.1 365.0 295.0C366.0 295.0 367.0 295.0 368.0 295.0C369.0 295.0 370.0 295.0 371.0 295.1C372.0 295.1 373.0 295.2 374.0 295.2C375.0 295.3 376.0 295.4 377.0 295.5C378.0 295.5 379.0 295.6 380.0 295.6C381.0 295.6 382.0 295.6 383.0 295.6C384.0 295.5 385.0 295.5 386.0 295.4C387.0 295.2 388.0 295.1 389.0 294.9C390.0 294.7 391.0 294.5 392.0 294.2C393.0 294.0 394.0 293.7 395.0 293.4C396.0 293.2 397.0 292.9 398.0 292.6C399.0 292.4 400.0 292.1 401.0 292.0C402.0 291.8 403.0 291.6 404.0 291.6C405.0 291.5 406.0 291.5 407.0 291.5C408.0 291.5 409.0 291.6 410.0 291.8C411.0 291.9 412.0 292.2 413.0 292.4C414.0 292.6 415.0 292.9 416.0 293.2C417.0 293.5 418.0 293.8 419.0 294.1C420.0 294.4 421.0 294.7 422.0 294.9C423.0 295.2 424.0 295.5 425.0 295.7C426.0 295.9 427.0 296.1 428.0 296.3C429.0 296.4 430.0 296.6 431.0 296.7C432.0 296.8 433.0 296.9 434.0 297.0C435.0 297.0 436.0 297.1 437.0 297.2C438.0 297.3 439.0 297.3 440.0 297.5C441.0 297.6 442.0 297.8 443.0 297.9C444.0 298.1 445.0 298.3 446.0 298.5C447.0 298.7 448.0 299.0 449.0 299.2C450.0 299.4 451.0 299.6 452.0 299.7C453.0 299.9 454.0 300.1 455.0 300.2C456.0 300.3 457.0 300.3 458.0 300.3C459.0 300.3 460.0 300.2 461.0 300.1C462.0 300.0 463.0 299.8 464.0 299.6C465.0 299.3 466.0 299.0 467.0 298.7C468.0 298.4 469.0 298.1 470.0 297.7C471.0 297.4 472.0 297.0 473.0 296.6C474.0 296.3 475.0 295.9 476.0 295.6C477.0 295.3 478.0 295.0 479.0 294.7C480.0 294.5 481.0 294.3 482.0 294.1C483.0 294.0 484.0 293.9 485.0 293.8C486.0 293.7 487.0 293.7 488.0 293.8C489.0 293.8 490.0 293.8 491.0 293.9C492.0 294.0 493.0 294.0 494.0 294.1C495.0 294.2 496.0 294.3 497.0 294.3C498.0 294.3 499.0 294.4 500.0 294.4C501.0 294.4 502.0 294.4 503.0 294.4C504.0 294.4 505.0 294.3 506.0 294.3C507.0 294.3 508.0 294.2 509.0 294.2C510.0 294.1 511.0 294.0 512.0 294.0C513.0 294.0 514.0 294.0 515.0 294.0C516.0 294.0 517.0 294.0 518.0 294.0C519.0 294.1 520.0 294.2 521.0 294.3C522.0 294.4 523.0 294.5 524.0 294.6C525.0 294.7 526.0 294.8 527.0 294.9C528.0 295.0 529.0 295.1 530.0 295.2C531.0 295.2 532.0 295.2 533.0 295.2C534.0 295.1 535.0 295.0 536.0 294.8C537.0 294.7 538.0 294.5 539.0 294.2C540.0 293.9 541.0 293.6 542.0 293.2C543.0 292.8 544.0 292.4 545.0 291.9C546.0 291.5 547.0 291.0 548.0 290.5C549.0 290.0 550.0 289.6 551.0 289.1C552.0 288.6 553.0 288.2 554.0 287.8C555.0 287.4 556.0 287.0 557.0 286.7C558.0 286.4 559.0 286.1 560.0 285.8C561.0 285.6 562.0 285.3 563.0 285.1C564.0 285.0 565.0 284.8 566.0 284.7C567.0 284.5 568.0 284.4 569.0 284.2C570.0 284.1 571.0 283.9 572.0 283.8C573.0 283.6 574.0 283.5 575.0 283.3C576.0 283.1 577.0 282.9 578.0 282.7C579.0 282.4 580.0 282.2 581.0 282.0C582.0 281.8 583.0 281.5 584.0 281.3C585.0 281.1 586.0 280.9 587.0 280.7C588.0 280.5 589.0 280.4 590.0 280.2C591.0 280.1 592.0 280.1 593.0 280.0C594.0 280.0 595.0 280.0 596.0 280.0C597.0 280.0 598.0 280.1 599.0 280.2C600.0 280.3 601.0 280.4 602.0 280.6C603.0 280.7 604.0 280.9 605.0 281.0C606.0 281.1 607.0 281.2 608.0 281.3C609.0 281.3 610.0 281.3 611.0 281.2C612.0 281.1 613.0 281.0 614.0 280.8C615.0 280.6 616.0 280.4 617.0 280.1C618.0 279.8 619.0 279.4 620.0 279.1C621.0 278.7 622.0 278.3 623.0 277.9C624.0 277.4 625.0 277.0 626.0 276.6C627.0 276.2 628.0 275.8 629.0 275.4C630.0 275.0 631.0 274.7 632.0 274.3C633.0 274.0 634.0 273.7 635.0 273.5C636.0 273.2 637.0 273.0 638.0 272.8C639.0 272.6 640.0 272.4 641.0 272.2C642.0 272.0 643.0 271.8 644.0 271.7C645.0 271.5 646.0 271.3 647.0 271.1C648.0 270.9 649.0 270.7 650.0 270.4C651.0 270.2 652.0 269.9 653.0 269.7C654.0 269.4 655.0 269.2 656.0 268.9C657.0 268.6 658.0 268.4 659.0 268.1C660.0 267.9 661.0 267.7 662.0 267.5C663.0 267.3 664.0 267.1 665.0 267.1C666.0 267.0 667.0 266.9 668.0 266.9C669.0 266.9 670.0 267.0 671.0 267.1C672.0 267.2 673.0 267.3 674.0 267.5C675.0 267.6 676.0 267.8 677.0 268.0C678.0 268.2 679.0 268.5 680.0 268.6C681.0 268.8 682.0 269.0 683.0 269.1C684.0 269.2 685.0 269.3 686.0 269.3C687.0 269.3 688.0 269.3 689.0 269.2C690.0 269.2 691.0 269.0 692.0 268.9C693.0 268.7 694.0 268.4 695.0 268.2C696.0 267.9 697.0 267.6 698.0 267.3C699.0 267.0 700.0 266.7 701.0 266.4C702.0 266.1 703.0 265.8 704.0 265.5C705.0 265.2 706.0 264.9 707.0 264.7C708.0 264.4 709.0 264.2 710.0 264.0C711.0 263.8 712.0 263.6 713.0 263.4C714.0 263.2 715.0 263.1 716.0 262.9C717.0 262.7 718.0 262.6 719.0 262.4C720.0 262.2 721.0 262.0 722.0 261.8C723.0 261.5 724.0 261.3 725.0 261.0C726.0 260.7 727.0 260.4 728.0 260.1C729.0 259.8 730.0 259.5 731.0 259.2C732.0 258.9 733.0 258.5 734.0 258.2C735.0 258.0 736.0 257.7 737.0 257.4C738.0 257.2 739.0 257.0 740.0 256.8C741.0 256.7 742.0 256.6 743.0 256.6C744.0 256.5 745.0 256.6 746.0 256.7C747.0 256.7 748.0 256.9 749.0 257.0C750.0 257.2 751.0 257.4 752.0 257.6C753.0 257.8 754.0 258.1 755.0 258.3C756.0 258.6 757.0 258.8 758.0 259.0C759.0 259.2 760.0 259.4 761.0 259.5C762.0 259.6 763.0 259.7 764.0 259.7C765.0 259.8 766.0 259.8 767.0 259.7C768.0 259.7 769.0 259.6 770.0 259.5C771.0 259.4 772.0 259.2 773.0 259.1C774.0 258.9 775.0 258.7 776.0 258.6C777.0 258.4 778.0 258.2 779.0 258.1C780.0 258.0 781.0 257.8 782.0 257.7C783.0 257.6 784.0 257.5 785.0 257.4C786.0 257.3 787.0 257.2 788.0 257.2C789.0 257.1 790.0 257.0 791.0 256.9C792.0 256.8 793.0 256.7 794.0 256.6C795.0 256.5 796.0 256.3 797.0 256.2C798.0 256.0 799.0 255.7 800.0 255.5C801.0 255.2 802.0 254.9 803.0 254.6C804.0 254.3 805.0 254.0 806.0 253.7C807.0 253.3 808.0 253.0 809.0 252.6C810.0 252.3 811.0 252.0 812.0 251.7C813.0 251.4 814.0 251.2 815.0 251.0C816.0 250.8 817.0 250.7 818.0 250.6C819.0 250.5 820.0 250.5 821.0 250.6C822.0 250.6 823.0 250.7 824.0 250.9C825.0 251.0 826.0 251.2 827.0 251.4C828.0 251.6 829.0 251.9 830.0 252.2C831.0 252.4 832.0 252.7 833.0 252.9C834.0 253.1 835.0 253.4 836.0 253.6C837.0 253.8 838.0 253.9 839.0 254.1C840.0 254.2 841.0 254.3 842.0 254.4C843.0 254.4 844.0 254.5 845.0 254.5C846.0 254.5 847.0 254.5 848.0 254.5C849.0 254.5 850.0 254.5 851.0 254.5C852.0 254.5 853.0 254.5 854.0 254.5C855.0 254.5 856.0 254.6 857.0 254.6C858.0 254.7 859.0 254.7 860.0 254.8C861.0 254.9 862.0 255.0 863.0 255.1C864.0 255.2 865.0 255.3 866.0 255.3C867.0 255.4 868.0 255.4 869.0 255.4C870.0 255.4 871.0 255.4 872.0 255.3C873.0 255.2 874.0 255.1 875.0 254.9C876.0 254.8 877.0 254.5 878.0 254.3C879.0 254.0 880.0 253.7 881.0 253.4C882.0 253.1 883.0 252.7 884.0 252.4C885.0 252.1 886.0 251.7 887.0 251.4C888.0 251.1 889.0 250.8 890.0 250.6C891.0 250.4 892.0 250.2 893.0 250.1C894.0 249.9 895.0 249.9 896.0 249.9C897.0 249.9 898.0 249.9 899.0 250.0C900.0 250.1 901.0 250.3 902.0 250.5C903.0 250.6 904.0 250.8 905.0 251.0C906.0 251.1 907.0 251.3 908.0 251.4C909.0 251.6 910.0 251.7 911.0 251.9C912.0 252.1 913.0 252.3 914.0 252.6C915.0 252.8 916.0 253.1 917.0 253.4C918.0 253.7 919.0 254.1 920.0 254.4C921.0 254.8 922.0 255.2 923.0 255.5C924.0 255.8 925.0 256.1 926.0 256.4C927.0 256.6 928.0 256.8 929.0 256.9C930.0 257.0 931.0 257.0 932.0 257.0C933.0 256.9 934.0 256.8 935.0 256.7C936.0 256.5 937.0 256.3 938.0 256.2C939.0 256.1 940.0 255.9 941.0 255.8C942.0 255.8 943.0 255.8 944.0 255.9C945.0 256.0 946.0 256.3 947.0 256.6C948.0 256.9 949.0 257.3 950.0 257.8C951.0 258.2 952.0 258.7 953.0 259.2C954.0 259.6 955.0 260.0 956.0 260.3C957.0 260.6 958.0 260.8 959.0 260.7C960.0 260.7 961.0 260.5 962.0 260.2C963.0 259.8 964.0 259.2 965.0 258.5C966.0 257.8 967.0 256.9 968.0 256.1C969.0 255.3 970.0 254.3 971.0 253.5C972.0 252.8 973.0 252.0 974.0 251.5C975.0 251.1 976.0 250.7 977.0 250.8C978.0 250.8 979.0 251.1 980.0 251.7C981.0 252.2 982.0 253.2 983.0 254.2C984.0 255.2 985.0 256.5 986.0 257.7C987.0 258.9 988.0 260.3 989.0 261.4C990.0 262.5 991.0 263.7 992.0 264.4C993.0 265.1 994.0 265.6 995.0 265.8C996.0 265.9 997.0 265.7 998.0 265.3C999.0 264.9 1000.0 264.0 1001.0 263.2C1002.0 262.3 1003.0 261.2 1004.0 260.2C1005.0 259.3 1006.0 258.2 1007.0 257.6C1008.0 256.9 1009.0 256.4 1010.0 256.3C1011.0 256.2 1012.0 256.4 1013.0 257.0C1014.0 257.6 1015.0 258.7 1016.0 259.9C1017.0 261.2 1018.0 262.9 1019.0 264.4C1020.0 266.0 1021.0 267.8 1022.0 269.3C1023.0 270.8 1024.0 272.3 1025.0 273.3C1026.0 274.2 1027.0 274.9 1028.0 275.0C1029.0 275.2 1030.0 274.8 1031.0 274.0C1032.0 273.2 1033.0 271.8 1034.0 270.3C1035.0 268.7 1036.0 266.7 1037.0 264.8C1038.0 262.9 1037.2 259.2 1040.0 259.0C1042.8 258.9 1049.7 260.9 1054.0 264.0C1058.3 267.2 1060.7 268.4 1066.0 278.0C1071.3 287.7 1082.0 311.0 1085.7 322.0C1089.4 333.0 1087.4 339.3 1088.2 344.0C1089.0 348.7 1089.8 352.3 1090.7 350.0C1091.6 347.7 1093.1 338.1 1093.7 330.0C1094.3 321.9 1094.5 311.7 1094.4 301.5C1094.3 291.3 1094.0 276.9 1093.2 269.0C1092.4 261.1 1091.0 254.0 1089.7 254.0C1088.5 254.0 1086.6 261.1 1085.7 269.0C1084.8 276.9 1084.3 292.7 1084.2 301.5C1084.1 310.3 1084.8 315.6 1085.2 322.0C1085.6 328.4 1086.5 337.0 1086.7 340.0" fill="none" stroke="#4848a8" stroke-width="1.0" stroke-opacity="0.8"/><path d="M520.0 295.4C520.5 295.3 522.0 295.0 523.0 294.9C524.0 294.8 525.0 294.8 526.0 294.8C527.0 294.8 528.0 294.9 529.0 295.0C530.0 295.1 531.0 295.2 532.0 295.4C533.0 295.6 534.0 295.7 535.0 295.9C536.0 296.1 537.0 296.2 538.0 296.3C539.0 296.4 540.0 296.5 541.0 296.5C542.0 296.5 543.0 296.5 544.0 296.5C545.0 296.4 546.0 296.3 547.0 296.2C548.0 296.0 549.0 295.8 550.0 295.7C551.0 295.5 552.0 295.3 553.0 295.2C554.0 295.0 555.0 294.9 556.0 294.7C557.0 294.6 558.0 294.5 559.0 294.4C560.0 294.4 561.0 294.3 562.0 294.3C563.0 294.2 564.0 294.2 565.0 294.2C566.0 294.1 567.0 294.1 568.0 294.0C569.0 293.9 570.0 293.8 571.0 293.6C572.0 293.4 573.0 293.2 574.0 292.9C575.0 292.6 576.0 292.2 577.0 291.8C578.0 291.4 579.0 290.9 580.0 290.4C581.0 289.9 582.0 289.3 583.0 288.8C584.0 288.2 585.0 287.6 586.0 287.1C587.0 286.6 588.0 286.1 589.0 285.6C590.0 285.2 591.0 284.7 592.0 284.4C593.0 284.0 594.0 283.7 595.0 283.4C596.0 283.2 597.0 282.9 598.0 282.8C599.0 282.6 600.0 282.5 601.0 282.4C602.0 282.2 603.0 282.2 604.0 282.1C605.0 282.1 606.0 282.0 607.0 281.9C608.0 281.7 609.0 281.6 610.0 281.4C611.0 281.3 612.0 281.1 613.0 280.9C614.0 280.7 615.0 280.4 616.0 280.2C617.0 280.0 618.0 279.8 619.0 279.6C620.0 279.4 621.0 279.3 622.0 279.2C623.0 279.1 624.0 279.0 625.0 279.0C626.0 279.0 627.0 279.1 628.0 279.2C629.0 279.3 630.0 279.4 631.0 279.6C632.0 279.8 633.0 280.0 634.0 280.1C635.0 280.3 636.0 280.5 637.0 280.6C638.0 280.7 639.0 280.8 640.0 280.9C641.0 280.9 642.0 280.9 643.0 280.8C644.0 280.8 645.0 280.6 646.0 280.4C647.0 280.3 648.0 280.0 649.0 279.7C650.0 279.5 651.0 279.1 652.0 278.8C653.0 278.5 654.0 278.2 655.0 277.9C656.0 277.6 657.0 277.3 658.0 277.1C659.0 276.8 660.0 276.6 661.0 276.4C662.0 276.2 663.0 276.0 664.0 275.8C665.0 275.7 666.0 275.5 667.0 275.4C668.0 275.2 669.0 275.1 670.0 274.9C671.0 274.8 672.0 274.6 673.0 274.4C674.0 274.1 675.0 273.8 676.0 273.5C677.0 273.2 678.0 272.9 679.0 272.5C680.0 272.1 681.0 271.7 682.0 271.2C683.0 270.8 684.0 270.4 685.0 269.9C686.0 269.5 687.0 269.1 688.0 268.7C689.0 268.4 690.0 268.1 691.0 267.8C692.0 267.6 693.0 267.4 694.0 267.2C695.0 267.1 696.0 267.1 697.0 267.0C698.0 267.0 699.0 267.1 700.0 267.2C701.0 267.2 702.0 267.4 703.0 267.5C704.0 267.6 705.0 267.7 706.0 267.8C707.0 267.9 708.0 268.0 709.0 268.0C710.0 268.1 711.0 268.1 712.0 268.0C713.0 268.0 714.0 267.9 715.0 267.9C716.0 267.8 717.0 267.7 718.0 267.6C719.0 267.5 720.0 267.4 721.0 267.3C722.0 267.2 723.0 267.1 724.0 267.1C725.0 267.1 726.0 267.1 727.0 267.1C728.0 267.1 729.0 267.2 730.0 267.3C731.0 267.4 732.0 267.5 733.0 267.6C734.0 267.7 735.0 267.9 736.0 268.0C737.0 268.1 738.0 268.1 739.0 268.2C740.0 268.2 741.0 268.2 742.0 268.1C743.0 268.0 744.0 267.9 745.0 267.6C746.0 267.4 747.0 267.2 748.0 266.9C749.0 266.5 750.0 266.2 751.0 265.8C752.0 265.4 753.0 265.0 754.0 264.6C755.0 264.2 756.0 263.8 757.0 263.4C758.0 263.1 759.0 262.8 760.0 262.5C761.0 262.2 762.0 261.9 763.0 261.7C764.0 261.5 765.0 261.4 766.0 261.3C767.0 261.2 768.0 261.1 769.0 261.0C770.0 260.9 771.0 260.9 772.0 260.8C773.0 260.7 774.0 260.6 775.0 260.5C776.0 260.4 777.0 260.2 778.0 260.1C779.0 259.9 780.0 259.7 781.0 259.5C782.0 259.3 783.0 259.1 784.0 258.9C785.0 258.6 786.0 258.4 787.0 258.2C788.0 258.0 789.0 257.9 790.0 257.8C791.0 257.7 792.0 257.6 793.0 257.6C794.0 257.6 795.0 257.7 796.0 257.8C797.0 257.9 798.0 258.1 799.0 258.3C800.0 258.5 801.0 258.8 802.0 259.1C803.0 259.3 804.0 259.6 805.0 259.9C806.0 260.1 807.0 260.4 808.0 260.6C809.0 260.8 810.0 261.0 811.0 261.1C812.0 261.3 813.0 261.3 814.0 261.4C815.0 261.4 816.0 261.3 817.0 261.3C818.0 261.2 819.0 261.1 820.0 261.0C821.0 260.9 822.0 260.7 823.0 260.6C824.0 260.5 825.0 260.4 826.0 260.3C827.0 260.2 828.0 260.2 829.0 260.2C830.0 260.1 831.0 260.1 832.0 260.1C833.0 260.2 834.0 260.2 835.0 260.2C836.0 260.3 837.0 260.3 838.0 260.3C839.0 260.3 840.0 260.3 841.0 260.3C842.0 260.2 843.0 260.1 844.0 260.0C845.0 259.8 846.0 259.6 847.0 259.4C848.0 259.1 849.0 258.8 850.0 258.5C851.0 258.2 852.0 257.8 853.0 257.5C854.0 257.2 855.0 256.8 856.0 256.5C857.0 256.2 858.0 255.9 859.0 255.6C860.0 255.4 861.0 255.2 862.0 255.1C863.0 255.0 864.0 254.9 865.0 254.9C866.0 254.9 867.0 255.0 868.0 255.1C869.0 255.2 870.0 255.3 871.0 255.5C872.0 255.7 873.0 255.9 874.0 256.0C875.0 256.2 876.0 256.4 877.0 256.5C878.0 256.6 879.0 256.7 880.0 256.8C881.0 256.9 882.0 257.0 883.0 257.0C884.0 257.0 885.0 257.0 886.0 257.1C887.0 257.1 888.0 257.1 889.0 257.1C890.0 257.1 891.0 257.2 892.0 257.3C893.0 257.4 894.0 257.5 895.0 257.7C896.0 257.8 897.0 258.1 898.0 258.3C899.0 258.6 900.0 258.9 901.0 259.2C902.0 259.5 903.0 259.8 904.0 260.2C905.0 260.6 906.0 261.0 907.0 261.4C908.0 261.8 909.0 262.2 910.0 262.6C911.0 262.9 912.0 263.2 913.0 263.3C914.0 263.4 915.0 263.3 916.0 263.2C917.0 263.0 918.0 262.6 919.0 262.2C920.0 261.8 921.0 261.2 922.0 260.7C923.0 260.2 924.0 259.6 925.0 259.2C926.0 258.9 927.0 258.6 928.0 258.5C929.0 258.4 930.0 258.5 931.0 258.7C932.0 259.0 933.0 259.4 934.0 259.9C935.0 260.3 936.0 261.0 937.0 261.4C938.0 261.8 939.0 262.3 940.0 262.4C941.0 262.6 942.0 262.5 943.0 262.3C944.0 262.0 945.0 261.4 946.0 260.8C947.0 260.2 948.0 259.2 949.0 258.4C950.0 257.6 951.0 256.7 952.0 256.1C953.0 255.5 954.0 254.9 955.0 254.8C956.0 254.6 957.0 254.7 958.0 255.1C959.0 255.5 960.0 256.3 961.0 257.2C962.0 258.0 963.0 259.2 964.0 260.2C965.0 261.2 966.0 262.3 967.0 263.0C968.0 263.7 969.0 264.2 970.0 264.4C971.0 264.6 972.0 264.5 973.0 264.2C974.0 263.9 975.0 263.2 976.0 262.7C977.0 262.1 978.0 261.4 979.0 261.0C980.0 260.6 981.0 260.2 982.0 260.3C983.0 260.4 984.0 260.9 985.0 261.6C986.0 262.3 987.0 263.6 988.0 264.8C989.0 266.0 990.0 267.6 991.0 268.9C992.0 270.2 993.0 271.6 994.0 272.5C995.0 273.4 996.0 274.0 997.0 274.1C998.0 274.2 999.0 273.8 1000.0 273.1C1001.0 272.5 1002.0 271.2 1003.0 270.1C1004.0 269.0 1005.0 267.5 1006.0 266.4C1007.0 265.4 1008.0 264.4 1009.0 263.9C1010.0 263.5 1011.0 263.5 1012.0 263.9C1013.0 264.3 1014.0 265.4 1015.0 266.5C1016.0 267.6 1017.0 269.3 1018.0 270.7C1019.0 272.0 1020.0 273.6 1021.0 274.4C1022.0 275.3 1023.0 275.9 1024.0 275.8C1025.0 275.8 1026.0 275.0 1027.0 273.9C1028.0 272.8 1029.0 270.9 1030.0 269.0C1031.0 267.2 1032.0 264.8 1033.0 263.0C1034.0 261.2 1035.0 259.3 1036.0 258.3C1037.0 257.3 1037.0 256.3 1039.0 256.9C1041.0 257.5 1045.2 258.8 1048.0 261.9C1050.8 265.1 1053.2 267.9 1056.0 275.9C1058.8 283.9 1063.1 300.7 1065.0 310.0C1066.9 319.3 1066.7 327.3 1067.5 332.0C1068.3 336.7 1069.1 340.3 1070.0 338.0C1070.9 335.7 1072.4 325.1 1073.0 318.0C1073.6 310.9 1073.8 303.7 1073.7 295.5C1073.6 287.3 1073.3 276.1 1072.5 269.0C1071.7 261.9 1070.2 253.0 1069.0 253.0C1067.8 253.0 1065.9 261.9 1065.0 269.0C1064.1 276.1 1063.6 288.7 1063.5 295.5C1063.4 302.3 1064.1 304.6 1064.5 310.0C1064.9 315.4 1065.8 325.0 1066.0 328.0" fill="none" stroke="#4848a8" stroke-width="1.0" stroke-opacity="0.8"/><path d="M680.0 268.0C680.5 268.0 682.0 267.9 683.0 267.8C684.0 267.7 685.0 267.6 686.0 267.5C687.0 267.5 688.0 267.4 689.0 267.2C690.0 267.1 691.0 267.0 692.0 266.9C693.0 266.8 694.0 266.6 695.0 266.5C696.0 266.4 697.0 266.3 698.0 266.2C699.0 266.2 700.0 266.1 701.0 266.1C702.0 266.1 703.0 266.1 704.0 266.2C705.0 266.3 706.0 266.4 707.0 266.5C708.0 266.6 709.0 266.8 710.0 267.0C711.0 267.2 712.0 267.4 713.0 267.5C714.0 267.7 715.0 267.8 716.0 267.9C717.0 268.0 718.0 268.1 719.0 268.1C720.0 268.1 721.0 268.0 722.0 267.9C723.0 267.7 724.0 267.5 725.0 267.3C726.0 267.0 727.0 266.7 728.0 266.3C729.0 265.9 730.0 265.5 731.0 265.1C732.0 264.6 733.0 264.1 734.0 263.7C735.0 263.2 736.0 262.8 737.0 262.4C738.0 262.0 739.0 261.6 740.0 261.2C741.0 260.9 742.0 260.6 743.0 260.4C744.0 260.1 745.0 260.0 746.0 259.8C747.0 259.7 748.0 259.6 749.0 259.5C750.0 259.4 751.0 259.4 752.0 259.3C753.0 259.3 754.0 259.3 755.0 259.2C756.0 259.2 757.0 259.2 758.0 259.1C759.0 259.1 760.0 259.0 761.0 259.0C762.0 258.9 763.0 258.8 764.0 258.8C765.0 258.7 766.0 258.6 767.0 258.5C768.0 258.5 769.0 258.4 770.0 258.4C771.0 258.4 772.0 258.4 773.0 258.5C774.0 258.5 775.0 258.6 776.0 258.8C777.0 258.9 778.0 259.0 779.0 259.2C780.0 259.4 781.0 259.6 782.0 259.9C783.0 260.1 784.0 260.3 785.0 260.5C786.0 260.7 787.0 260.9 788.0 261.0C789.0 261.2 790.0 261.3 791.0 261.3C792.0 261.3 793.0 261.3 794.0 261.2C795.0 261.1 796.0 260.9 797.0 260.6C798.0 260.4 799.0 260.1 800.0 259.8C801.0 259.4 802.0 259.0 803.0 258.7C804.0 258.3 805.0 257.8 806.0 257.4C807.0 257.1 808.0 256.7 809.0 256.3C810.0 256.0 811.0 255.6 812.0 255.4C813.0 255.1 814.0 254.9 815.0 254.7C816.0 254.5 817.0 254.4 818.0 254.3C819.0 254.3 820.0 254.2 821.0 254.2C822.0 254.2 823.0 254.2 824.0 254.3C825.0 254.3 826.0 254.3 827.0 254.4C828.0 254.4 829.0 254.4 830.0 254.4C831.0 254.5 832.0 254.5 833.0 254.5C834.0 254.5 835.0 254.4 836.0 254.4C837.0 254.4 838.0 254.4 839.0 254.4C840.0 254.5 841.0 254.5 842.0 254.5C843.0 254.6 844.0 254.7 845.0 254.8C846.0 254.9 847.0 255.1 848.0 255.3C849.0 255.5 850.0 255.8 851.0 256.0C852.0 256.3 853.0 256.6 854.0 256.9C855.0 257.1 856.0 257.4 857.0 257.7C858.0 258.0 859.0 258.2 860.0 258.4C861.0 258.6 862.0 258.8 863.0 258.8C864.0 258.9 865.0 258.9 866.0 258.9C867.0 258.8 868.0 258.7 869.0 258.5C870.0 258.3 871.0 258.1 872.0 257.8C873.0 257.5 874.0 257.1 875.0 256.8C876.0 256.5 877.0 256.1 878.0 255.7C879.0 255.4 880.0 255.0 881.0 254.8C882.0 254.5 883.0 254.2 884.0 254.0C885.0 253.8 886.0 253.6 887.0 253.5C888.0 253.4 889.0 253.4 890.0 253.4C891.0 253.3 892.0 253.4 893.0 253.4C894.0 253.5 895.0 253.6 896.0 253.7C897.0 253.8 898.0 253.9 899.0 254.0C900.0 254.1 901.0 254.3 902.0 254.4C903.0 254.5 904.0 254.6 905.0 254.6C906.0 254.7 907.0 254.6 908.0 254.6C909.0 254.6 910.0 254.5 911.0 254.4C912.0 254.3 913.0 254.2 914.0 254.3C915.0 254.3 916.0 254.3 917.0 254.5C918.0 254.7 919.0 254.9 920.0 255.3C921.0 255.7 922.0 256.3 923.0 256.9C924.0 257.5 925.0 258.2 926.0 258.9C927.0 259.6 928.0 260.4 929.0 261.0C930.0 261.6 931.0 262.2 932.0 262.5C933.0 262.9 934.0 263.1 935.0 263.1C936.0 263.1 937.0 262.8 938.0 262.4C939.0 262.1 940.0 261.4 941.0 260.7C942.0 260.1 943.0 259.2 944.0 258.5C945.0 257.8 946.0 257.0 947.0 256.4C948.0 255.8 949.0 255.4 950.0 255.1C951.0 254.9 952.0 254.9 953.0 255.0C954.0 255.2 955.0 255.6 956.0 256.1C957.0 256.6 958.0 257.3 959.0 258.0C960.0 258.6 961.0 259.4 962.0 259.9C963.0 260.4 964.0 260.9 965.0 261.2C966.0 261.4 967.0 261.4 968.0 261.2C969.0 261.0 970.0 260.5 971.0 260.0C972.0 259.4 973.0 258.6 974.0 258.0C975.0 257.3 976.0 256.5 977.0 256.0C978.0 255.5 979.0 255.1 980.0 255.0C981.0 254.9 982.0 255.1 983.0 255.6C984.0 256.1 985.0 257.0 986.0 258.1C987.0 259.2 988.0 260.6 989.0 262.0C990.0 263.4 991.0 265.0 992.0 266.3C993.0 267.7 994.0 269.1 995.0 270.0C996.0 270.9 997.0 271.7 998.0 272.0C999.0 272.3 1000.0 272.2 1001.0 271.8C1002.0 271.4 1003.0 270.5 1004.0 269.6C1005.0 268.6 1006.0 267.3 1007.0 266.2C1008.0 265.1 1009.0 263.8 1010.0 262.9C1011.0 262.1 1012.0 261.3 1013.0 260.9C1014.0 260.6 1015.0 260.6 1016.0 260.9C1017.0 261.2 1018.0 262.0 1019.0 262.8C1020.0 263.7 1021.0 265.0 1022.0 266.1C1023.0 267.2 1024.0 268.5 1025.0 269.4C1026.0 270.2 1027.0 271.1 1028.0 271.4C1029.0 271.7 1030.0 271.6 1031.0 271.2C1032.0 270.7 1033.0 269.7 1034.0 268.6C1035.0 267.4 1036.0 265.7 1037.0 264.2C1038.0 262.7 1037.7 259.5 1040.0 259.5C1042.3 259.6 1047.5 261.4 1051.0 264.5C1054.5 267.7 1056.8 268.8 1061.0 278.5C1065.2 288.3 1073.1 311.9 1076.0 323.0C1078.9 334.1 1077.7 340.3 1078.5 345.0C1079.3 349.7 1080.1 353.3 1081.0 351.0C1081.9 348.7 1083.4 339.2 1084.0 331.0C1084.6 322.8 1084.8 312.0 1084.7 301.5C1084.6 291.0 1084.3 276.1 1083.5 268.0C1082.7 259.9 1081.2 253.0 1080.0 253.0C1078.8 253.0 1076.9 259.9 1076.0 268.0C1075.1 276.1 1074.6 292.3 1074.5 301.5C1074.4 310.7 1075.1 316.4 1075.5 323.0C1075.9 329.6 1076.8 338.0 1077.0 341.0" fill="none" stroke="#4848a8" stroke-width="1.0" stroke-opacity="0.8"/><path d="M1066.8 362.0C1066.5 359.0 1065.7 348.3 1065.3 344.0C1064.9 339.7 1064.2 340.7 1064.3 336.0C1064.4 331.3 1064.9 321.8 1065.8 316.0C1066.7 310.2 1068.5 301.0 1069.8 301.0C1071.0 301.0 1072.5 310.2 1073.3 316.0C1074.1 321.8 1074.4 330.0 1074.5 336.0C1074.6 342.0 1074.4 346.0 1073.8 352.0C1073.2 358.0 1071.7 369.7 1070.8 372.0C1069.9 374.3 1069.1 370.7 1068.3 366.0C1067.5 361.3 1067.8 346.5 1065.8 344.0C1063.8 341.5 1059.0 351.6 1056.0 351.1C1053.0 350.6 1050.8 343.6 1048.0 341.1C1045.2 338.6 1041.0 336.7 1039.0 336.1C1037.0 335.5 1037.0 337.5 1036.0 337.3C1035.0 337.1 1034.0 336.2 1033.0 335.1C1032.0 333.9 1031.0 332.0 1030.0 330.4C1029.0 328.7 1028.0 326.6 1027.0 325.1C1026.0 323.7 1025.0 322.2 1024.0 321.5C1023.0 320.8 1022.0 320.5 1021.0 320.8C1020.0 321.1 1019.0 322.0 1018.0 323.1C1017.0 324.2 1016.0 325.9 1015.0 327.2C1014.0 328.6 1013.0 330.3 1012.0 331.4C1011.0 332.4 1010.0 333.3 1009.0 333.6C1008.0 333.9 1007.0 333.7 1006.0 333.1C1005.0 332.5 1004.0 331.4 1003.0 330.2C1002.0 329.1 1001.0 327.6 1000.0 326.5C999.0 325.3 998.0 324.1 997.0 323.5C996.0 322.9 995.0 322.6 994.0 322.9C993.0 323.1 992.0 323.9 991.0 325.0C990.0 326.0 989.0 327.6 988.0 329.1C987.0 330.6 986.0 332.5 985.0 334.0C984.0 335.4 983.0 336.9 982.0 337.9C981.0 338.9 980.0 339.6 979.0 339.9C978.0 340.2 977.0 340.0 976.0 339.7C975.0 339.3 974.0 338.6 973.0 337.9C972.0 337.3 971.0 336.4 970.0 335.9C969.0 335.4 968.0 334.9 967.0 334.7C966.0 334.6 965.0 334.7 964.0 335.1C963.0 335.4 962.0 336.1 961.0 336.8C960.0 337.5 959.0 338.4 958.0 339.2C957.0 339.9 956.0 340.8 955.0 341.3C954.0 341.9 953.0 342.3 952.0 342.5C951.0 342.7 950.0 342.6 949.0 342.5C948.0 342.3 947.0 341.8 946.0 341.5C945.0 341.1 944.0 340.5 943.0 340.2C942.0 339.8 941.0 339.5 940.0 339.3C939.0 339.1 938.0 339.1 937.0 339.2C936.0 339.3 935.0 339.6 934.0 339.9C933.0 340.3 932.0 340.7 931.0 341.1C930.0 341.5 929.0 342.0 928.0 342.4C927.0 342.7 926.0 343.0 925.0 343.3C924.0 343.5 923.0 343.7 922.0 343.9C921.0 344.1 920.0 344.2 919.0 344.4C918.0 344.6 917.0 344.8 916.0 345.1C915.0 345.4 914.0 345.8 913.0 346.3C912.0 346.7 911.0 347.3 910.0 347.8C909.0 348.4 908.0 349.0 907.0 349.6C906.0 350.1 905.0 350.7 904.0 351.1C903.0 351.6 902.0 352.0 901.0 352.3C900.0 352.6 899.0 352.8 898.0 353.0C897.0 353.3 896.0 353.4 895.0 353.6C894.0 353.8 893.0 353.9 892.0 354.1C891.0 354.2 890.0 354.4 889.0 354.5C888.0 354.7 887.0 354.8 886.0 355.0C885.0 355.2 884.0 355.4 883.0 355.6C882.0 355.7 881.0 356.0 880.0 356.2C879.0 356.4 878.0 356.6 877.0 356.8C876.0 357.0 875.0 357.2 874.0 357.3C873.0 357.5 872.0 357.6 871.0 357.7C870.0 357.9 869.0 357.9 868.0 358.0C867.0 358.0 866.0 358.0 865.0 358.0C864.0 358.0 863.0 358.0 862.0 357.9C861.0 357.9 860.0 357.9 859.0 357.8C858.0 357.8 857.0 357.8 856.0 357.8C855.0 357.9 854.0 357.9 853.0 358.0C852.0 358.1 851.0 358.3 850.0 358.5C849.0 358.7 848.0 359.0 847.0 359.4C846.0 359.7 845.0 360.1 844.0 360.5C843.0 360.9 842.0 361.4 841.0 361.8C840.0 362.3 839.0 362.8 838.0 363.2C837.0 363.7 836.0 364.2 835.0 364.6C834.0 365.0 833.0 365.5 832.0 365.9C831.0 366.3 830.0 366.6 829.0 366.9C828.0 367.3 827.0 367.6 826.0 367.9C825.0 368.1 824.0 368.4 823.0 368.6C822.0 368.9 821.0 369.1 820.0 369.3C819.0 369.6 818.0 369.8 817.0 370.0C816.0 370.3 815.0 370.5 814.0 370.8C813.0 371.1 812.0 371.4 811.0 371.7C810.0 371.9 809.0 372.3 808.0 372.6C807.0 372.9 806.0 373.2 805.0 373.5C804.0 373.7 803.0 374.0 802.0 374.3C801.0 374.5 800.0 374.8 799.0 375.0C798.0 375.2 797.0 375.4 796.0 375.6C795.0 375.8 794.0 375.9 793.0 376.0C792.0 376.1 791.0 376.2 790.0 376.3C789.0 376.3 788.0 376.4 787.0 376.5C786.0 376.6 785.0 376.6 784.0 376.8C783.0 376.9 782.0 377.0 781.0 377.2C780.0 377.4 779.0 377.6 778.0 377.9C777.0 378.2 776.0 378.5 775.0 378.9C774.0 379.2 773.0 379.7 772.0 380.1C771.0 380.6 770.0 381.1 769.0 381.6C768.0 382.1 767.0 382.6 766.0 383.1C765.0 383.6 764.0 384.2 763.0 384.7C762.0 385.2 761.0 385.7 760.0 386.2C759.0 386.7 758.0 387.2 757.0 387.6C756.0 388.0 755.0 388.4 754.0 388.8C753.0 389.1 752.0 389.4 751.0 389.6C750.0 389.9 749.0 390.2 748.0 390.5C747.0 390.7 746.0 391.0 745.0 391.3C744.0 391.6 743.0 391.9 742.0 392.2C741.0 392.5 740.0 392.8 739.0 393.1C738.0 393.5 737.0 393.8 736.0 394.1C735.0 394.5 734.0 394.8 733.0 395.1C732.0 395.4 731.0 395.7 730.0 396.0C729.0 396.3 728.0 396.5 727.0 396.8C726.0 397.0 725.0 397.2 724.0 397.3C723.0 397.5 722.0 397.6 721.0 397.7C720.0 397.8 719.0 397.8 718.0 397.9C717.0 398.0 716.0 398.0 715.0 398.0C714.0 398.1 713.0 398.1 712.0 398.2C711.0 398.3 710.0 398.4 709.0 398.5C708.0 398.7 707.0 398.9 706.0 399.1C705.0 399.3 704.0 399.6 703.0 399.9C702.0 400.2 701.0 400.5 700.0 400.9C699.0 401.3 698.0 401.7 697.0 402.1C696.0 402.6 695.0 403.0 694.0 403.5C693.0 404.0 692.0 404.5 691.0 404.9C690.0 405.4 689.0 405.8 688.0 406.2C687.0 406.6 686.0 406.9 685.0 407.3C684.0 407.6 683.0 408.0 682.0 408.4C681.0 408.7 680.0 409.1 679.0 409.4C678.0 409.8 677.0 410.2 676.0 410.6C675.0 411.0 674.0 411.3 673.0 411.8C672.0 412.2 671.0 412.6 670.0 413.1C669.0 413.5 668.0 414.0 667.0 414.5C666.0 415.0 665.0 415.5 664.0 416.0C663.0 416.5 662.0 417.0 661.0 417.5C660.0 418.0 659.0 418.5 658.0 418.9C657.0 419.4 656.0 419.8 655.0 420.2C654.0 420.6 653.0 421.0 652.0 421.3C651.0 421.7 650.0 422.0 649.0 422.3C648.0 422.6 647.0 422.8 646.0 423.0C645.0 423.3 644.0 423.5 643.0 423.7C642.0 423.9 641.0 424.1 640.0 424.4C639.0 424.6 638.0 424.8 637.0 425.0C636.0 425.3 635.0 425.6 634.0 425.9C633.0 426.2 632.0 426.5 631.0 426.8C630.0 427.2 629.0 427.5 628.0 427.9C627.0 428.3 626.0 428.7 625.0 429.2C624.0 429.6 623.0 430.0 622.0 430.4C621.0 430.8 620.0 431.3 619.0 431.7C618.0 432.1 617.0 432.5 616.0 432.9C615.0 433.3 614.0 433.7 613.0 434.0C612.0 434.4 611.0 434.7 610.0 435.1C609.0 435.4 608.0 435.8 607.0 436.1C606.0 436.4 605.0 436.7 604.0 437.1C603.0 437.4 602.0 437.8 601.0 438.2C600.0 438.7 599.0 439.2 598.0 439.7C597.0 440.2 596.0 440.7 595.0 441.2C594.0 441.6 593.0 442.2 592.0 442.6C591.0 443.1 590.0 443.6 589.0 444.1C588.0 444.6 587.0 445.0 586.0 445.4C585.0 445.9 584.0 446.3 583.0 446.6C582.0 447.0 581.0 447.3 580.0 447.6C579.0 447.9 578.0 448.2 577.0 448.4C576.0 448.7 575.0 448.8 574.0 449.0C573.0 449.2 572.0 449.4 571.0 449.5C570.0 449.7 569.0 449.8 568.0 449.9C567.0 450.1 566.0 450.2 565.0 450.4C564.0 450.6 563.0 450.7 562.0 450.9C561.0 451.1 560.0 451.3 559.0 451.6C558.0 451.8 557.0 452.1 556.0 452.3C555.0 452.6 554.0 452.9 553.0 453.2C552.0 453.5 551.0 453.8 550.0 454.2C549.0 454.5 548.0 454.8 547.0 455.1C546.0 455.5 545.0 455.8 544.0 456.1C543.0 456.5 542.0 456.8 541.0 457.1C540.0 457.4 539.0 457.7 538.0 458.0C537.0 458.2 536.0 458.5 535.0 458.7C534.0 459.0 533.0 459.3 532.0 459.6C531.0 459.9 530.0 460.2 529.0 460.5C528.0 460.9 527.0 461.2 526.0 461.6C525.0 462.0 524.0 462.4 523.0 462.8C522.0 463.2 521.0 463.6 520.0 464.1C519.0 464.5 518.0 465.0 517.0 465.4C516.0 465.8 515.0 466.3 514.0 466.7C513.0 467.1 512.0 467.5 511.0 467.9C510.0 468.2 509.0 468.6 508.0 468.9C507.0 469.2 506.0 469.5 505.0 469.8C504.0 470.1 503.0 470.3 502.0 470.5C501.0 470.8 500.0 471.0 499.0 471.2C498.0 471.4 497.0 471.6 496.0 471.7C495.0 471.9 494.0 472.1 493.0 472.3C492.0 472.5 491.0 472.7 490.0 472.9C489.0 473.2 488.0 473.4 487.0 473.6C486.0 473.9 485.0 474.1 484.0 474.4C483.0 474.6 482.0 474.9 481.0 475.2C480.0 475.5 479.0 475.7 478.0 476.0C477.0 476.3 476.0 476.5 475.0 476.8C474.0 477.1 473.0 477.3 472.0 477.5C471.0 477.8 470.0 478.0 469.0 478.2C468.0 478.5 467.0 478.7 466.0 478.9C465.0 479.1 464.0 479.3 463.0 479.5C462.0 479.8 461.0 480.0 460.0 480.2C459.0 480.4 458.0 480.7 457.0 481.0C456.0 481.2 455.0 481.5 454.0 481.8C453.0 482.1 452.0 482.4 451.0 482.8C450.0 483.1 449.0 483.5 448.0 483.8C447.0 484.2 446.0 484.5 445.0 484.9C444.0 485.3 443.0 485.6 442.0 485.9C441.0 486.3 440.0 486.6 439.0 486.9C438.0 487.2 437.0 487.5 436.0 487.8C435.0 488.0 434.0 488.2 433.0 488.5C432.0 488.7 431.0 488.9 430.0 489.0C429.0 489.2 428.0 489.3 427.0 489.5C426.0 489.6 425.0 489.7 424.0 489.9C423.0 490.0 422.0 490.1 421.0 490.2C420.0 490.4 419.0 490.5 418.0 490.6C417.0 490.8 416.0 490.9 415.0 491.1C414.0 491.2 413.0 491.4 412.0 491.5C411.0 491.7 410.0 491.9 409.0 492.0C408.0 492.2 407.0 492.4 406.0 492.5C405.0 492.7 404.0 492.8 403.0 493.0C402.0 493.1 401.0 493.3 400.0 493.4C399.0 493.5 398.0 493.7 397.0 493.8C396.0 493.9 395.0 494.0 394.0 494.1C393.0 494.2 392.0 494.3 391.0 494.5C390.0 494.6 389.0 494.7 388.0 494.8C387.0 495.0 386.0 495.1 385.0 495.3C384.0 495.5 383.0 495.7 382.0 495.9C381.0 496.1 380.0 496.4 379.0 496.8C378.0 497.1 377.0 497.6 376.0 498.0C375.0 498.4 374.0 498.9 373.0 499.3C372.0 499.7 371.0 500.1 370.0 500.5C369.0 500.9 368.0 501.3 367.0 501.7C366.0 502.1 365.0 502.4 364.0 502.7C363.0 503.1 362.0 503.4 361.0 503.7C360.0 503.9 359.0 504.2 358.0 504.5C357.0 504.7 356.0 504.9 355.0 505.2C354.0 505.4 353.0 505.6 352.0 505.8C351.0 506.0 350.0 506.2 349.0 506.4C348.0 506.6 347.0 506.9 346.0 507.1C345.0 507.3 344.0 507.5 343.0 507.8C342.0 508.0 341.0 508.3 340.0 508.5C339.0 508.7 338.0 509.0 337.0 509.2C336.0 509.4 335.0 509.7 334.0 509.9C333.0 510.1 332.0 510.3 331.0 510.5C330.0 510.7 329.0 510.9 328.0 511.1C327.0 511.3 326.0 511.5 325.0 511.6C324.0 511.8 323.0 512.0 322.0 512.1C321.0 512.3 320.0 512.4 319.0 512.6C318.0 512.8 317.0 512.9 316.0 513.1C315.0 513.3 314.0 513.5 313.0 513.7C312.0 513.9 311.0 514.2 310.0 514.4C309.0 514.7 308.0 514.9 307.0 515.2C306.0 515.5 305.0 515.8 304.0 516.1C303.0 516.5 302.0 516.8 301.0 517.1C300.0 517.4 299.0 517.8 298.0 518.1C297.0 518.5 296.0 518.9 295.0 519.3C294.0 519.7 293.0 520.0 292.0 520.4C291.0 520.7 290.0 521.1 289.0 521.4C288.0 521.7 287.0 522.1 286.0 522.4C285.0 522.7 284.0 523.0 283.0 523.2C282.0 523.5 281.0 523.8 280.0 524.1C279.0 524.4 278.0 524.7 277.0 525.0C276.0 525.2 275.0 525.5 274.0 525.8C273.0 526.1 272.0 526.4 271.0 526.7C270.0 527.1 269.0 527.4 268.0 527.7C267.0 528.0 269.3 525.9 265.0 528.6C260.7 531.4 250.3 540.0 242.0 544.2C233.7 548.4 223.7 551.1 215.0 553.7C206.3 556.3 198.3 558.7 190.0 559.7C181.7 560.8 171.3 559.0 165.0 560.0C158.7 561.0 156.0 563.9 152.0 566.0C148.0 568.1 144.5 572.3 141.0 572.5C137.5 572.7 133.8 568.9 131.0 567.0C128.2 565.1 126.4 560.2 124.2 561.0C122.0 561.8 119.7 567.8 118.0 572.0C116.3 576.2 115.2 587.6 113.9 586.4C112.6 585.2 110.8 571.1 110.2 565.0C109.6 558.9 109.9 554.2 110.5 550.0C111.1 545.8 111.7 540.8 113.6 540.0C115.5 539.2 118.4 542.9 122.0 545.0C125.6 547.1 131.2 550.8 135.0 552.5C138.8 554.2 141.7 555.0 145.0 555.5C148.3 556.0 150.5 556.2 155.0 555.5C159.5 554.8 165.8 552.9 172.0 551.5C178.2 550.1 185.3 548.7 192.0 547.0C198.7 545.3 205.3 543.3 212.0 541.5C218.7 539.7 228.2 537.4 232.0 536.4C235.8 535.4 234.0 535.8 235.0 535.5C236.0 535.2 237.0 534.9 238.0 534.6C239.0 534.2 240.0 533.9 241.0 533.5C242.0 533.2 243.0 532.9 244.0 532.5C245.0 532.2 246.0 531.8 247.0 531.5C248.0 531.2 249.0 530.9 250.0 530.6C251.0 530.2 252.0 529.9 253.0 529.6C254.0 529.4 255.0 529.1 256.0 528.8C257.0 528.5 258.0 528.2 259.0 528.0C260.0 527.7 261.0 527.5 262.0 527.2C263.0 526.9 264.0 526.7 265.0 526.4C266.0 526.2 267.0 525.9 268.0 525.6C269.0 525.3 270.0 525.1 271.0 524.8C272.0 524.5 273.0 524.1 274.0 523.8C275.0 523.5 276.0 523.2 277.0 522.9C278.0 522.5 279.0 522.2 280.0 521.9C281.0 521.6 282.0 521.2 283.0 520.9C284.0 520.6 285.0 520.3 286.0 520.0C287.0 519.6 288.0 519.3 289.0 519.0C290.0 518.7 291.0 518.4 292.0 518.1C293.0 517.8 294.0 517.5 295.0 517.1C296.0 516.8 297.0 516.5 298.0 516.2C299.0 515.9 300.0 515.7 301.0 515.4C302.0 515.1 303.0 514.8 304.0 514.5C305.0 514.2 306.0 513.9 307.0 513.7C308.0 513.4 309.0 513.0 310.0 512.7C311.0 512.4 312.0 512.1 313.0 511.8C314.0 511.5 315.0 511.2 316.0 511.0C317.0 510.7 318.0 510.4 319.0 510.1C320.0 509.9 321.0 509.6 322.0 509.4C323.0 509.2 324.0 509.0 325.0 508.8C326.0 508.6 327.0 508.4 328.0 508.2C329.0 508.0 330.0 507.9 331.0 507.8C332.0 507.6 333.0 507.5 334.0 507.3C335.0 507.2 336.0 507.0 337.0 506.9C338.0 506.8 339.0 506.6 340.0 506.4C341.0 506.3 342.0 506.1 343.0 505.9C344.0 505.7 345.0 505.5 346.0 505.3C347.0 505.0 348.0 504.8 349.0 504.5C350.0 504.3 351.0 504.0 352.0 503.7C353.0 503.5 354.0 503.2 355.0 502.9C356.0 502.6 357.0 502.3 358.0 502.0C359.0 501.7 360.0 501.4 361.0 501.1C362.0 500.8 363.0 500.5 364.0 500.2C365.0 499.9 366.0 499.5 367.0 499.2C368.0 498.9 369.0 498.6 370.0 498.3C371.0 498.0 372.0 497.7 373.0 497.4C374.0 497.0 375.0 496.7 376.0 496.4C377.0 496.0 378.0 495.6 379.0 495.3C380.0 495.0 381.0 494.7 382.0 494.5C383.0 494.2 384.0 494.0 385.0 493.8C386.0 493.5 387.0 493.3 388.0 493.1C389.0 492.8 390.0 492.6 391.0 492.3C392.0 492.1 393.0 491.9 394.0 491.6C395.0 491.4 396.0 491.2 397.0 491.0C398.0 490.8 399.0 490.6 400.0 490.5C401.0 490.3 402.0 490.2 403.0 490.0C404.0 489.9 405.0 489.8 406.0 489.7C407.0 489.6 408.0 489.5 409.0 489.5C410.0 489.4 411.0 489.3 412.0 489.3C413.0 489.2 414.0 489.1 415.0 489.1C416.0 489.0 417.0 488.9 418.0 488.8C419.0 488.7 420.0 488.6 421.0 488.5C422.0 488.3 423.0 488.2 424.0 488.0C425.0 487.8 426.0 487.6 427.0 487.4C428.0 487.2 429.0 487.0 430.0 486.7C431.0 486.5 432.0 486.2 433.0 485.9C434.0 485.7 435.0 485.4 436.0 485.1C437.0 484.8 438.0 484.6 439.0 484.3C440.0 484.0 441.0 483.7 442.0 483.5C443.0 483.2 444.0 482.9 445.0 482.7C446.0 482.4 447.0 482.1 448.0 481.9C449.0 481.6 450.0 481.4 451.0 481.1C452.0 480.8 453.0 480.6 454.0 480.3C455.0 480.1 456.0 479.8 457.0 479.5C458.0 479.2 459.0 478.9 460.0 478.6C461.0 478.4 462.0 478.0 463.0 477.7C464.0 477.4 465.0 477.1 466.0 476.8C467.0 476.5 468.0 476.1 469.0 475.8C470.0 475.5 471.0 475.2 472.0 474.8C473.0 474.5 474.0 474.2 475.0 474.0C476.0 473.7 477.0 473.4 478.0 473.1C479.0 472.9 480.0 472.7 481.0 472.5C482.0 472.2 483.0 472.1 484.0 471.9C485.0 471.7 486.0 471.5 487.0 471.4C488.0 471.2 489.0 471.0 490.0 470.9C491.0 470.7 492.0 470.6 493.0 470.4C494.0 470.2 495.0 470.1 496.0 469.9C497.0 469.7 498.0 469.5 499.0 469.2C500.0 469.0 501.0 468.7 502.0 468.4C503.0 468.1 504.0 467.8 505.0 467.5C506.0 467.2 507.0 466.8 508.0 466.5C509.0 466.1 510.0 465.7 511.0 465.3C512.0 464.9 513.0 464.6 514.0 464.2C515.0 463.8 516.0 463.4 517.0 463.0C518.0 462.6 519.0 462.2 520.0 461.9C521.0 461.5 522.0 461.1 523.0 460.8C524.0 460.4 525.0 460.1 526.0 459.8C527.0 459.5 528.0 459.1 529.0 458.8C530.0 458.5 531.0 458.2 532.0 457.9C533.0 457.6 534.0 457.3 535.0 457.0C536.0 456.6 537.0 456.3 538.0 456.0C539.0 455.7 540.0 455.4 541.0 455.0C542.0 454.6 543.0 454.2 544.0 453.8C545.0 453.4 546.0 453.0 547.0 452.7C548.0 452.3 549.0 451.9 550.0 451.6C551.0 451.3 552.0 451.0 553.0 450.7C554.0 450.4 555.0 450.1 556.0 449.8C557.0 449.6 558.0 449.4 559.0 449.2C560.0 449.0 561.0 448.8 562.0 448.6C563.0 448.5 564.0 448.3 565.0 448.2C566.0 448.0 567.0 447.9 568.0 447.8C569.0 447.6 570.0 447.5 571.0 447.4C572.0 447.2 573.0 447.0 574.0 446.8C575.0 446.7 576.0 446.4 577.0 446.2C578.0 446.0 579.0 445.7 580.0 445.4C581.0 445.1 582.0 444.7 583.0 444.4C584.0 444.0 585.0 443.6 586.0 443.2C587.0 442.8 588.0 442.3 589.0 441.9C590.0 441.4 591.0 441.0 592.0 440.5C593.0 440.0 594.0 439.5 595.0 439.1C596.0 438.6 597.0 438.1 598.0 437.6C599.0 437.1 600.0 436.6 601.0 436.2C602.0 435.7 603.0 435.4 604.0 435.0C605.0 434.6 606.0 434.3 607.0 434.0C608.0 433.6 609.0 433.3 610.0 432.9C611.0 432.6 612.0 432.2 613.0 431.9C614.0 431.5 615.0 431.1 616.0 430.7C617.0 430.3 618.0 429.9 619.0 429.5C620.0 429.1 621.0 428.7 622.0 428.3C623.0 427.9 624.0 427.5 625.0 427.1C626.0 426.6 627.0 426.2 628.0 425.8C629.0 425.4 630.0 425.0 631.0 424.7C632.0 424.3 633.0 423.9 634.0 423.6C635.0 423.3 636.0 423.0 637.0 422.7C638.0 422.4 639.0 422.1 640.0 421.9C641.0 421.6 642.0 421.4 643.0 421.2C644.0 420.9 645.0 420.7 646.0 420.5C647.0 420.3 648.0 420.0 649.0 419.8C650.0 419.5 651.0 419.3 652.0 419.0C653.0 418.7 654.0 418.4 655.0 418.1C656.0 417.7 657.0 417.4 658.0 417.0C659.0 416.6 660.0 416.1 661.0 415.7C662.0 415.2 663.0 414.7 664.0 414.2C665.0 413.7 666.0 413.2 667.0 412.7C668.0 412.2 669.0 411.6 670.0 411.1C671.0 410.6 672.0 410.1 673.0 409.6C674.0 409.1 675.0 408.6 676.0 408.2C677.0 407.7 678.0 407.3 679.0 406.9C680.0 406.4 681.0 406.1 682.0 405.7C683.0 405.3 684.0 405.0 685.0 404.6C686.0 404.3 687.0 404.0 688.0 403.7C689.0 403.4 690.0 403.1 691.0 402.7C692.0 402.4 693.0 401.9 694.0 401.6C695.0 401.2 696.0 400.8 697.0 400.4C698.0 400.1 699.0 399.7 700.0 399.3C701.0 399.0 702.0 398.6 703.0 398.3C704.0 397.9 705.0 397.6 706.0 397.3C707.0 397.0 708.0 396.7 709.0 396.5C710.0 396.2 711.0 396.0 712.0 395.8C713.0 395.6 714.0 395.4 715.0 395.3C716.0 395.1 717.0 395.0 718.0 394.9C719.0 394.8 720.0 394.7 721.0 394.7C722.0 394.6 723.0 394.6 724.0 394.5C725.0 394.4 726.0 394.4 727.0 394.3C728.0 394.2 729.0 394.1 730.0 394.0C731.0 393.9 732.0 393.7 733.0 393.5C734.0 393.3 735.0 393.1 736.0 392.8C737.0 392.5 738.0 392.2 739.0 391.9C740.0 391.5 741.0 391.1 742.0 390.7C743.0 390.3 744.0 389.9 745.0 389.5C746.0 389.1 747.0 388.6 748.0 388.2C749.0 387.7 750.0 387.3 751.0 386.9C752.0 386.4 753.0 386.1 754.0 385.6C755.0 385.2 756.0 384.7 757.0 384.3C758.0 383.9 759.0 383.4 760.0 383.0C761.0 382.6 762.0 382.2 763.0 381.9C764.0 381.5 765.0 381.2 766.0 380.8C767.0 380.5 768.0 380.2 769.0 379.8C770.0 379.5 771.0 379.2 772.0 378.8C773.0 378.5 774.0 378.2 775.0 377.8C776.0 377.5 777.0 377.1 778.0 376.8C779.0 376.5 780.0 376.1 781.0 375.8C782.0 375.5 783.0 375.1 784.0 374.8C785.0 374.5 786.0 374.2 787.0 374.0C788.0 373.7 789.0 373.5 790.0 373.3C791.0 373.0 792.0 372.9 793.0 372.7C794.0 372.5 795.0 372.4 796.0 372.3C797.0 372.2 798.0 372.1 799.0 372.0C800.0 371.9 801.0 371.8 802.0 371.8C803.0 371.7 804.0 371.7 805.0 371.6C806.0 371.5 807.0 371.4 808.0 371.2C809.0 371.1 810.0 370.9 811.0 370.7C812.0 370.4 813.0 370.2 814.0 369.9C815.0 369.6 816.0 369.2 817.0 368.8C818.0 368.5 819.0 368.0 820.0 367.6C821.0 367.1 822.0 366.7 823.0 366.2C824.0 365.7 825.0 365.2 826.0 364.8C827.0 364.3 828.0 363.8 829.0 363.4C830.0 363.0 831.0 362.5 832.0 362.1C833.0 361.8 834.0 361.4 835.0 361.1C836.0 360.7 837.0 360.4 838.0 360.2C839.0 359.9 840.0 359.7 841.0 359.4C842.0 359.2 843.0 359.0 844.0 358.8C845.0 358.6 846.0 358.4 847.0 358.3C848.0 358.1 849.0 357.9 850.0 357.7C851.0 357.5 852.0 357.4 853.0 357.2C854.0 357.0 855.0 356.8 856.0 356.6C857.0 356.4 858.0 356.2 859.0 356.0C860.0 355.8 861.0 355.7 862.0 355.5C863.0 355.3 864.0 355.1 865.0 355.0C866.0 354.9 867.0 354.7 868.0 354.6C869.0 354.6 870.0 354.5 871.0 354.4C872.0 354.4 873.0 354.4 874.0 354.4C875.0 354.3 876.0 354.4 877.0 354.4C878.0 354.4 879.0 354.4 880.0 354.4C881.0 354.4 882.0 354.4 883.0 354.4C884.0 354.3 885.0 354.3 886.0 354.1C887.0 354.0 888.0 353.9 889.0 353.7C890.0 353.4 891.0 353.2 892.0 352.9C893.0 352.6 894.0 352.2 895.0 351.8C896.0 351.4 897.0 351.0 898.0 350.5C899.0 350.0 900.0 349.5 901.0 349.0C902.0 348.4 903.0 347.8 904.0 347.3C905.0 346.7 906.0 346.2 907.0 345.7C908.0 345.3 909.0 344.9 910.0 344.6C911.0 344.3 912.0 344.0 913.0 343.8C914.0 343.7 915.0 343.6 916.0 343.4C917.0 343.3 918.0 343.2 919.0 343.1C920.0 342.9 921.0 342.8 922.0 342.5C923.0 342.3 924.0 341.9 925.0 341.6C926.0 341.2 927.0 340.7 928.0 340.3C929.0 339.8 930.0 339.3 931.0 338.9C932.0 338.5 933.0 338.0 934.0 337.7C935.0 337.4 936.0 337.2 937.0 337.1C938.0 337.0 939.0 337.1 940.0 337.2C941.0 337.4 942.0 337.7 943.0 338.0C944.0 338.3 945.0 338.8 946.0 339.1C947.0 339.4 948.0 339.8 949.0 340.0C950.0 340.2 951.0 340.4 952.0 340.3C953.0 340.3 954.0 340.1 955.0 339.7C956.0 339.4 957.0 338.8 958.0 338.3C959.0 337.7 960.0 336.9 961.0 336.3C962.0 335.6 963.0 334.9 964.0 334.3C965.0 333.8 966.0 333.3 967.0 333.0C968.0 332.7 969.0 332.6 970.0 332.6C971.0 332.6 972.0 332.9 973.0 333.2C974.0 333.4 975.0 333.9 976.0 334.2C977.0 334.5 978.0 334.8 979.0 335.0C980.0 335.1 981.0 335.1 982.0 334.8C983.0 334.6 984.0 334.0 985.0 333.3C986.0 332.6 987.0 331.6 988.0 330.5C989.0 329.4 990.0 328.0 991.0 326.8C992.0 325.6 993.0 324.2 994.0 323.2C995.0 322.2 996.0 321.2 997.0 320.7C998.0 320.2 999.0 319.9 1000.0 320.0C1001.0 320.2 1002.0 320.7 1003.0 321.5C1004.0 322.2 1005.0 323.4 1006.0 324.5C1007.0 325.6 1008.0 327.0 1009.0 328.1C1010.0 329.2 1011.0 330.4 1012.0 331.1C1013.0 331.8 1014.0 332.2 1015.0 332.3C1016.0 332.4 1017.0 332.0 1018.0 331.4C1019.0 330.8 1020.0 329.7 1021.0 328.6C1022.0 327.4 1023.0 325.9 1024.0 324.7C1025.0 323.5 1026.0 322.1 1027.0 321.2C1028.0 320.4 1029.0 319.6 1030.0 319.4C1031.0 319.2 1032.0 319.5 1033.0 320.1C1034.0 320.7 1035.0 321.9 1036.0 323.2C1037.0 324.5 1036.5 326.3 1039.0 327.9C1041.5 329.5 1047.3 330.4 1051.0 332.9C1054.7 335.4 1057.0 338.9 1061.0 342.9C1065.0 346.9 1072.4 351.0 1075.2 357.0C1078.0 363.0 1076.9 374.3 1077.7 379.0C1078.5 383.7 1079.3 387.3 1080.2 385.0C1081.1 382.7 1082.6 372.5 1083.2 365.0C1083.8 357.5 1084.0 349.0 1083.9 340.0C1083.8 331.0 1083.5 318.5 1082.7 311.0C1081.9 303.5 1080.5 295.0 1079.2 295.0C1078.0 295.0 1076.1 303.5 1075.2 311.0C1074.3 318.5 1073.8 332.3 1073.7 340.0C1073.6 347.7 1074.3 351.2 1074.7 357.0C1075.1 362.8 1076.0 372.0 1076.2 375.0" fill="none" stroke="#9c3434" stroke-width="1.0" stroke-opacity="0.8"/><path d="M1077.0 375.0C1076.8 372.0 1075.9 362.8 1075.5 357.0C1075.1 351.2 1074.4 347.7 1074.5 340.0C1074.6 332.3 1075.1 318.3 1076.0 311.0C1076.9 303.7 1078.8 296.0 1080.0 296.0C1081.2 296.0 1082.7 303.7 1083.5 311.0C1084.3 318.3 1084.6 331.0 1084.7 340.0C1084.8 349.0 1084.6 357.5 1084.0 365.0C1083.4 372.5 1081.9 382.7 1081.0 385.0C1080.1 387.3 1079.3 383.7 1078.5 379.0C1077.7 374.3 1078.9 364.8 1076.0 357.0C1073.1 349.2 1065.2 338.0 1061.0 332.2C1056.8 326.5 1054.7 324.7 1051.0 322.2C1047.3 319.7 1041.5 317.8 1039.0 317.2C1036.5 316.7 1037.0 318.2 1036.0 319.1C1035.0 320.0 1034.0 321.5 1033.0 322.8C1032.0 324.0 1031.0 325.5 1030.0 326.6C1029.0 327.6 1028.0 328.6 1027.0 329.0C1026.0 329.5 1025.0 329.5 1024.0 329.2C1023.0 328.9 1022.0 328.1 1021.0 327.3C1020.0 326.4 1019.0 325.2 1018.0 324.2C1017.0 323.2 1016.0 322.0 1015.0 321.4C1014.0 320.7 1013.0 320.2 1012.0 320.2C1011.0 320.1 1010.0 320.5 1009.0 321.2C1008.0 321.9 1007.0 323.0 1006.0 324.2C1005.0 325.4 1004.0 327.0 1003.0 328.4C1002.0 329.8 1001.0 331.3 1000.0 332.4C999.0 333.5 998.0 334.5 997.0 335.1C996.0 335.7 995.0 335.9 994.0 335.8C993.0 335.8 992.0 335.3 991.0 334.7C990.0 334.2 989.0 333.2 988.0 332.5C987.0 331.7 986.0 330.8 985.0 330.2C984.0 329.6 983.0 329.1 982.0 328.9C981.0 328.7 980.0 328.7 979.0 329.0C978.0 329.2 977.0 329.7 976.0 330.3C975.0 330.9 974.0 331.7 973.0 332.3C972.0 332.9 971.0 333.6 970.0 334.1C969.0 334.6 968.0 334.9 967.0 335.0C966.0 335.1 965.0 335.0 964.0 334.8C963.0 334.6 962.0 334.1 961.0 333.7C960.0 333.3 959.0 332.7 958.0 332.3C957.0 332.0 956.0 331.6 955.0 331.5C954.0 331.5 953.0 331.5 952.0 331.9C951.0 332.2 950.0 332.8 949.0 333.5C948.0 334.3 947.0 335.3 946.0 336.2C945.0 337.2 944.0 338.3 943.0 339.2C942.0 340.2 941.0 341.2 940.0 341.9C939.0 342.7 938.0 343.3 937.0 343.7C936.0 344.1 935.0 344.4 934.0 344.5C933.0 344.6 932.0 344.5 931.0 344.4C930.0 344.3 929.0 344.0 928.0 343.9C927.0 343.7 926.0 343.6 925.0 343.5C924.0 343.5 923.0 343.5 922.0 343.6C921.0 343.8 920.0 344.0 919.0 344.3C918.0 344.6 917.0 344.9 916.0 345.3C915.0 345.6 914.0 346.0 913.0 346.3C912.0 346.6 911.0 346.8 910.0 347.0C909.0 347.1 908.0 347.2 907.0 347.2C906.0 347.2 905.0 347.1 904.0 347.1C903.0 347.0 902.0 346.9 901.0 346.8C900.0 346.8 899.0 346.8 898.0 346.8C897.0 346.8 896.0 346.9 895.0 347.0C894.0 347.1 893.0 347.2 892.0 347.4C891.0 347.7 890.0 347.9 889.0 348.3C888.0 348.6 887.0 349.0 886.0 349.5C885.0 349.9 884.0 350.4 883.0 350.9C882.0 351.4 881.0 352.0 880.0 352.6C879.0 353.1 878.0 353.7 877.0 354.2C876.0 354.7 875.0 355.2 874.0 355.7C873.0 356.1 872.0 356.5 871.0 356.9C870.0 357.2 869.0 357.5 868.0 357.7C867.0 358.0 866.0 358.1 865.0 358.3C864.0 358.4 863.0 358.5 862.0 358.5C861.0 358.6 860.0 358.6 859.0 358.6C858.0 358.6 857.0 358.6 856.0 358.6C855.0 358.6 854.0 358.6 853.0 358.7C852.0 358.7 851.0 358.8 850.0 358.9C849.0 359.0 848.0 359.1 847.0 359.3C846.0 359.4 845.0 359.6 844.0 359.7C843.0 359.9 842.0 360.1 841.0 360.3C840.0 360.5 839.0 360.6 838.0 360.8C837.0 361.0 836.0 361.2 835.0 361.3C834.0 361.5 833.0 361.7 832.0 361.8C831.0 362.0 830.0 362.2 829.0 362.3C828.0 362.5 827.0 362.7 826.0 362.9C825.0 363.2 824.0 363.4 823.0 363.7C822.0 364.0 821.0 364.3 820.0 364.6C819.0 365.0 818.0 365.4 817.0 365.8C816.0 366.2 815.0 366.7 814.0 367.2C813.0 367.7 812.0 368.2 811.0 368.7C810.0 369.2 809.0 369.7 808.0 370.2C807.0 370.7 806.0 371.2 805.0 371.6C804.0 372.1 803.0 372.5 802.0 372.8C801.0 373.2 800.0 373.5 799.0 373.8C798.0 374.0 797.0 374.3 796.0 374.5C795.0 374.6 794.0 374.8 793.0 374.9C792.0 375.0 791.0 375.0 790.0 375.1C789.0 375.1 788.0 375.2 787.0 375.2C786.0 375.3 785.0 375.4 784.0 375.5C783.0 375.6 782.0 375.7 781.0 375.9C780.0 376.0 779.0 376.2 778.0 376.5C777.0 376.7 776.0 377.0 775.0 377.3C774.0 377.7 773.0 378.0 772.0 378.4C771.0 378.8 770.0 379.2 769.0 379.6C768.0 380.0 767.0 380.5 766.0 380.9C765.0 381.3 764.0 381.8 763.0 382.2C762.0 382.6 761.0 383.0 760.0 383.5C759.0 383.9 758.0 384.3 757.0 384.7C756.0 385.1 755.0 385.5 754.0 385.9C753.0 386.2 752.0 386.5 751.0 386.8C750.0 387.2 749.0 387.5 748.0 387.8C747.0 388.2 746.0 388.6 745.0 388.9C744.0 389.3 743.0 389.7 742.0 390.1C741.0 390.5 740.0 390.9 739.0 391.2C738.0 391.6 737.0 392.0 736.0 392.3C735.0 392.6 734.0 393.0 733.0 393.2C732.0 393.5 731.0 393.7 730.0 393.9C729.0 394.1 728.0 394.3 727.0 394.4C726.0 394.5 725.0 394.6 724.0 394.6C723.0 394.7 722.0 394.7 721.0 394.7C720.0 394.7 719.0 394.7 718.0 394.7C717.0 394.7 716.0 394.8 715.0 394.8C714.0 394.9 713.0 395.0 712.0 395.1C711.0 395.3 710.0 395.5 709.0 395.7C708.0 395.9 707.0 396.2 706.0 396.6C705.0 396.9 704.0 397.3 703.0 397.7C702.0 398.2 701.0 398.6 700.0 399.1C699.0 399.6 698.0 400.1 697.0 400.6C696.0 401.1 695.0 401.7 694.0 402.2C693.0 402.7 692.0 403.3 691.0 403.7C690.0 404.2 689.0 404.6 688.0 405.0C687.0 405.4 686.0 405.8 685.0 406.1C684.0 406.5 683.0 406.8 682.0 407.2C681.0 407.5 680.0 407.9 679.0 408.2C678.0 408.6 677.0 408.9 676.0 409.3C675.0 409.7 674.0 410.0 673.0 410.4C672.0 410.8 671.0 411.2 670.0 411.6C669.0 411.9 668.0 412.3 667.0 412.7C666.0 413.1 665.0 413.5 664.0 413.8C663.0 414.2 662.0 414.5 661.0 414.9C660.0 415.2 659.0 415.5 658.0 415.8C657.0 416.1 656.0 416.3 655.0 416.6C654.0 416.8 653.0 417.0 652.0 417.3C651.0 417.5 650.0 417.7 649.0 417.9C648.0 418.2 647.0 418.4 646.0 418.6C645.0 418.9 644.0 419.2 643.0 419.5C642.0 419.8 641.0 420.1 640.0 420.5C639.0 420.9 638.0 421.3 637.0 421.8C636.0 422.2 635.0 422.7 634.0 423.3C633.0 423.8 632.0 424.3 631.0 424.9C630.0 425.5 629.0 426.1 628.0 426.6C627.0 427.2 626.0 427.8 625.0 428.4C624.0 428.9 623.0 429.5 622.0 430.0C621.0 430.5 620.0 431.0 619.0 431.4C618.0 431.9 617.0 432.3 616.0 432.7C615.0 433.1 614.0 433.4 613.0 433.7C612.0 434.1 611.0 434.3 610.0 434.6C609.0 434.9 608.0 435.1 607.0 435.4C606.0 435.6 605.0 435.8 604.0 436.1C603.0 436.3 602.0 436.6 601.0 436.9C600.0 437.2 599.0 437.6 598.0 437.9C597.0 438.3 596.0 438.6 595.0 438.9C594.0 439.3 593.0 439.6 592.0 439.9C591.0 440.2 590.0 440.5 589.0 440.8C588.0 441.1 587.0 441.4 586.0 441.6C585.0 441.9 584.0 442.1 583.0 442.4C582.0 442.6 581.0 442.8 580.0 443.1C579.0 443.3 578.0 443.5 577.0 443.7C576.0 444.0 575.0 444.2 574.0 444.5C573.0 444.7 572.0 445.0 571.0 445.3C570.0 445.6 569.0 445.9 568.0 446.3C567.0 446.7 566.0 447.0 565.0 447.5C564.0 447.9 563.0 448.3 562.0 448.7C561.0 449.2 560.0 449.7 559.0 450.1C558.0 450.6 557.0 451.1 556.0 451.5C555.0 452.0 554.0 452.4 553.0 452.9C552.0 453.3 551.0 453.7 550.0 454.1C549.0 454.5 548.0 454.8 547.0 455.1C546.0 455.5 545.0 455.8 544.0 456.0C543.0 456.3 542.0 456.6 541.0 456.8C540.0 457.0 539.0 457.1 538.0 457.3C537.0 457.5 536.0 457.6 535.0 457.7C534.0 457.9 533.0 458.0 532.0 458.2C531.0 458.3 530.0 458.5 529.0 458.7C528.0 458.9 527.0 459.1 526.0 459.4C525.0 459.6 524.0 459.9 523.0 460.1C522.0 460.4 521.0 460.7 520.0 461.0C519.0 461.3 518.0 461.6 517.0 461.9C516.0 462.2 515.0 462.5 514.0 462.8C513.0 463.1 512.0 463.4 511.0 463.7C510.0 464.0 509.0 464.3 508.0 464.6C507.0 465.0 506.0 465.3 505.0 465.6C504.0 465.9 503.0 466.2 502.0 466.5C501.0 466.9 500.0 467.2 499.0 467.6C498.0 467.9 497.0 468.3 496.0 468.7C495.0 469.1 494.0 469.5 493.0 469.9C492.0 470.3 491.0 470.8 490.0 471.2C489.0 471.6 488.0 472.0 487.0 472.4C486.0 472.8 485.0 473.2 484.0 473.6C483.0 474.0 482.0 474.3 481.0 474.7C480.0 475.0 479.0 475.3 478.0 475.5C477.0 475.8 476.0 476.0 475.0 476.2C474.0 476.4 473.0 476.6 472.0 476.8C471.0 476.9 470.0 477.0 469.0 477.1C468.0 477.3 467.0 477.4 466.0 477.5C465.0 477.6 464.0 477.7 463.0 477.8C462.0 477.9 461.0 478.0 460.0 478.2C459.0 478.3 458.0 478.5 457.0 478.7C456.0 478.9 455.0 479.1 454.0 479.4C453.0 479.6 452.0 479.9 451.0 480.1C450.0 480.4 449.0 480.7 448.0 481.0C447.0 481.3 446.0 481.6 445.0 481.9C444.0 482.2 443.0 482.5 442.0 482.8C441.0 483.1 440.0 483.4 439.0 483.6C438.0 483.9 437.0 484.2 436.0 484.4C435.0 484.7 434.0 484.9 433.0 485.2C432.0 485.4 431.0 485.7 430.0 485.9C429.0 486.2 428.0 486.4 427.0 486.6C426.0 486.9 425.0 487.1 424.0 487.4C423.0 487.6 422.0 487.9 421.0 488.1C420.0 488.4 419.0 488.6 418.0 488.8C417.0 489.1 416.0 489.3 415.0 489.6C414.0 489.8 413.0 490.0 412.0 490.2C411.0 490.4 410.0 490.6 409.0 490.7C408.0 490.9 407.0 491.0 406.0 491.1C405.0 491.2 404.0 491.3 403.0 491.4C402.0 491.5 401.0 491.5 400.0 491.6C399.0 491.6 398.0 491.7 397.0 491.7C396.0 491.8 395.0 491.8 394.0 491.9C393.0 492.0 392.0 492.0 391.0 492.1C390.0 492.2 389.0 492.4 388.0 492.5C387.0 492.7 386.0 492.8 385.0 493.0C384.0 493.2 383.0 493.4 382.0 493.7C381.0 494.0 380.0 494.3 379.0 494.6C378.0 495.0 377.0 495.5 376.0 495.9C375.0 496.4 374.0 496.8 373.0 497.2C372.0 497.6 371.0 498.0 370.0 498.4C369.0 498.8 368.0 499.1 367.0 499.4C366.0 499.8 365.0 500.1 364.0 500.4C363.0 500.7 362.0 501.0 361.0 501.2C360.0 501.5 359.0 501.8 358.0 502.0C357.0 502.3 356.0 502.5 355.0 502.7C354.0 503.0 353.0 503.2 352.0 503.4C351.0 503.7 350.0 503.9 349.0 504.2C348.0 504.4 347.0 504.6 346.0 504.9C345.0 505.1 344.0 505.4 343.0 505.6C342.0 505.8 341.0 506.1 340.0 506.3C339.0 506.5 338.0 506.7 337.0 506.9C336.0 507.1 335.0 507.3 334.0 507.5C333.0 507.7 332.0 507.8 331.0 508.0C330.0 508.1 329.0 508.3 328.0 508.5C327.0 508.6 326.0 508.8 325.0 508.9C324.0 509.1 323.0 509.3 322.0 509.5C321.0 509.7 320.0 509.9 319.0 510.1C318.0 510.4 317.0 510.6 316.0 510.9C315.0 511.2 314.0 511.5 313.0 511.8C312.0 512.1 311.0 512.4 310.0 512.7C309.0 513.1 308.0 513.4 307.0 513.8C306.0 514.1 305.0 514.5 304.0 514.8C303.0 515.2 302.0 515.5 301.0 515.8C300.0 516.1 299.0 516.4 298.0 516.7C297.0 517.1 296.0 517.4 295.0 517.7C294.0 518.1 293.0 518.3 292.0 518.6C291.0 518.9 290.0 519.2 289.0 519.4C288.0 519.7 287.0 519.9 286.0 520.1C285.0 520.4 284.0 520.6 283.0 520.8C282.0 521.1 281.0 521.3 280.0 521.5C279.0 521.8 278.0 522.0 277.0 522.3C276.0 522.5 275.0 522.8 274.0 523.1C273.0 523.4 272.0 523.6 271.0 523.9C270.0 524.2 269.0 524.5 268.0 524.8C267.0 525.1 269.3 522.8 265.0 525.7C260.7 528.6 249.8 537.7 242.0 542.0C234.2 546.3 226.2 548.9 218.0 551.5C209.8 554.1 200.8 556.1 193.0 557.5C185.2 558.9 176.8 558.6 171.0 560.0C165.2 561.4 162.4 564.2 158.0 566.0C153.6 567.8 148.1 570.5 144.6 570.7C141.1 570.9 139.4 568.6 137.0 567.0C134.6 565.4 132.4 560.2 130.2 561.0C128.0 561.8 125.7 568.1 124.0 572.0C122.3 575.9 121.2 585.8 119.9 584.6C118.6 583.4 116.8 570.8 116.2 565.0C115.6 559.2 115.9 554.2 116.5 550.0C117.1 545.8 117.7 540.8 119.6 540.0C121.5 539.2 124.4 542.9 128.0 545.0C131.6 547.1 137.2 550.8 141.0 552.5C144.8 554.2 147.7 555.0 151.0 555.5C154.3 556.0 156.5 556.2 161.0 555.5C165.5 554.8 171.8 552.9 178.0 551.5C184.2 550.1 191.3 548.7 198.0 547.0C204.7 545.3 211.3 543.0 218.0 541.5C224.7 540.0 234.2 539.0 238.0 538.3C241.8 537.6 240.0 537.7 241.0 537.4C242.0 537.0 243.0 536.7 244.0 536.3C245.0 536.0 246.0 535.6 247.0 535.2C248.0 534.9 249.0 534.5 250.0 534.1C251.0 533.7 252.0 533.3 253.0 533.0C254.0 532.6 255.0 532.2 256.0 531.8C257.0 531.5 258.0 531.1 259.0 530.7C260.0 530.4 261.0 530.0 262.0 529.6C263.0 529.3 264.0 529.0 265.0 528.6C266.0 528.3 267.0 527.9 268.0 527.5C269.0 527.2 270.0 526.8 271.0 526.4C272.0 526.0 273.0 525.6 274.0 525.3C275.0 524.9 276.0 524.5 277.0 524.2C278.0 523.8 279.0 523.4 280.0 523.1C281.0 522.7 282.0 522.4 283.0 522.1C284.0 521.8 285.0 521.5 286.0 521.2C287.0 521.0 288.0 520.7 289.0 520.5C290.0 520.2 291.0 520.0 292.0 519.8C293.0 519.6 294.0 519.4 295.0 519.2C296.0 519.0 297.0 518.8 298.0 518.6C299.0 518.4 300.0 518.3 301.0 518.2C302.0 518.0 303.0 517.9 304.0 517.7C305.0 517.5 306.0 517.3 307.0 517.1C308.0 516.9 309.0 516.7 310.0 516.5C311.0 516.2 312.0 516.0 313.0 515.7C314.0 515.4 315.0 515.2 316.0 514.9C317.0 514.6 318.0 514.3 319.0 514.0C320.0 513.8 321.0 513.5 322.0 513.2C323.0 512.9 324.0 512.7 325.0 512.4C326.0 512.1 327.0 511.9 328.0 511.6C329.0 511.3 330.0 511.1 331.0 510.8C332.0 510.5 333.0 510.3 334.0 510.0C335.0 509.7 336.0 509.5 337.0 509.2C338.0 508.9 339.0 508.6 340.0 508.3C341.0 508.0 342.0 507.6 343.0 507.3C344.0 507.0 345.0 506.7 346.0 506.4C347.0 506.0 348.0 505.7 349.0 505.4C350.0 505.1 351.0 504.8 352.0 504.5C353.0 504.2 354.0 504.0 355.0 503.7C356.0 503.5 357.0 503.2 358.0 503.0C359.0 502.8 360.0 502.6 361.0 502.4C362.0 502.2 363.0 502.1 364.0 501.9C365.0 501.8 366.0 501.6 367.0 501.4C368.0 501.3 369.0 501.1 370.0 501.0C371.0 500.8 372.0 500.6 373.0 500.4C374.0 500.2 375.0 500.0 376.0 499.7C377.0 499.4 378.0 499.1 379.0 498.8C380.0 498.6 381.0 498.4 382.0 498.2C383.0 497.9 384.0 497.8 385.0 497.5C386.0 497.3 387.0 497.1 388.0 496.8C389.0 496.6 390.0 496.3 391.0 496.1C392.0 495.8 393.0 495.6 394.0 495.3C395.0 495.1 396.0 494.9 397.0 494.6C398.0 494.4 399.0 494.2 400.0 494.0C401.0 493.7 402.0 493.5 403.0 493.3C404.0 493.1 405.0 492.9 406.0 492.7C407.0 492.5 408.0 492.3 409.0 492.1C410.0 491.8 411.0 491.6 412.0 491.4C413.0 491.2 414.0 490.9 415.0 490.7C416.0 490.4 417.0 490.2 418.0 489.9C419.0 489.7 420.0 489.4 421.0 489.2C422.0 489.0 423.0 488.7 424.0 488.5C425.0 488.3 426.0 488.1 427.0 487.9C428.0 487.7 429.0 487.6 430.0 487.4C431.0 487.3 432.0 487.2 433.0 487.0C434.0 486.9 435.0 486.8 436.0 486.8C437.0 486.7 438.0 486.6 439.0 486.5C440.0 486.4 441.0 486.4 442.0 486.3C443.0 486.2 444.0 486.1 445.0 485.9C446.0 485.8 447.0 485.7 448.0 485.5C449.0 485.3 450.0 485.1 451.0 484.9C452.0 484.7 453.0 484.4 454.0 484.1C455.0 483.8 456.0 483.5 457.0 483.2C458.0 482.9 459.0 482.5 460.0 482.2C461.0 481.8 462.0 481.5 463.0 481.1C464.0 480.8 465.0 480.4 466.0 480.1C467.0 479.7 468.0 479.4 469.0 479.0C470.0 478.7 471.0 478.4 472.0 478.1C473.0 477.7 474.0 477.4 475.0 477.1C476.0 476.8 477.0 476.5 478.0 476.2C479.0 475.9 480.0 475.6 481.0 475.3C482.0 475.0 483.0 474.7 484.0 474.4C485.0 474.1 486.0 473.8 487.0 473.5C488.0 473.1 489.0 472.8 490.0 472.5C491.0 472.2 492.0 471.8 493.0 471.5C494.0 471.2 495.0 470.9 496.0 470.6C497.0 470.3 498.0 470.0 499.0 469.7C500.0 469.5 501.0 469.2 502.0 469.0C503.0 468.8 504.0 468.6 505.0 468.4C506.0 468.2 507.0 468.0 508.0 467.8C509.0 467.7 510.0 467.5 511.0 467.4C512.0 467.2 513.0 467.0 514.0 466.9C515.0 466.7 516.0 466.5 517.0 466.3C518.0 466.1 519.0 465.9 520.0 465.6C521.0 465.4 522.0 465.1 523.0 464.8C524.0 464.4 525.0 464.1 526.0 463.7C527.0 463.4 528.0 463.0 529.0 462.6C530.0 462.2 531.0 461.7 532.0 461.3C533.0 460.9 534.0 460.5 535.0 460.1C536.0 459.6 537.0 459.2 538.0 458.8C539.0 458.4 540.0 458.1 541.0 457.7C542.0 457.3 543.0 456.8 544.0 456.5C545.0 456.1 546.0 455.7 547.0 455.4C548.0 455.0 549.0 454.7 550.0 454.4C551.0 454.1 552.0 453.8 553.0 453.5C554.0 453.2 555.0 453.0 556.0 452.7C557.0 452.4 558.0 452.1 559.0 451.8C560.0 451.5 561.0 451.2 562.0 450.9C563.0 450.6 564.0 450.3 565.0 450.1C566.0 449.8 567.0 449.5 568.0 449.2C569.0 449.0 570.0 448.7 571.0 448.4C572.0 448.2 573.0 448.0 574.0 447.8C575.0 447.5 576.0 447.4 577.0 447.2C578.0 447.0 579.0 446.8 580.0 446.6C581.0 446.5 582.0 446.3 583.0 446.1C584.0 445.9 585.0 445.8 586.0 445.6C587.0 445.3 588.0 445.1 589.0 444.9C590.0 444.6 591.0 444.3 592.0 444.0C593.0 443.6 594.0 443.2 595.0 442.8C596.0 442.4 597.0 441.9 598.0 441.4C599.0 440.9 600.0 440.4 601.0 439.8C602.0 439.3 603.0 438.8 604.0 438.3C605.0 437.8 606.0 437.4 607.0 436.9C608.0 436.4 609.0 435.9 610.0 435.5C611.0 435.0 612.0 434.5 613.0 434.1C614.0 433.7 615.0 433.2 616.0 432.8C617.0 432.4 618.0 432.1 619.0 431.7C620.0 431.3 621.0 431.0 622.0 430.7C623.0 430.3 624.0 430.0 625.0 429.7C626.0 429.3 627.0 429.0 628.0 428.6C629.0 428.3 630.0 428.0 631.0 427.6C632.0 427.3 633.0 426.9 634.0 426.5C635.0 426.2 636.0 425.8 637.0 425.4C638.0 425.0 639.0 424.7 640.0 424.3C641.0 423.9 642.0 423.6 643.0 423.2C644.0 422.9 645.0 422.6 646.0 422.3C647.0 421.9 648.0 421.7 649.0 421.4C650.0 421.1 651.0 420.8 652.0 420.6C653.0 420.3 654.0 420.1 655.0 419.8C656.0 419.5 657.0 419.3 658.0 419.0C659.0 418.7 660.0 418.5 661.0 418.1C662.0 417.8 663.0 417.5 664.0 417.1C665.0 416.7 666.0 416.3 667.0 415.8C668.0 415.4 669.0 414.9 670.0 414.4C671.0 413.9 672.0 413.3 673.0 412.8C674.0 412.2 675.0 411.7 676.0 411.1C677.0 410.6 678.0 410.0 679.0 409.5C680.0 408.9 681.0 408.4 682.0 407.9C683.0 407.4 684.0 407.0 685.0 406.6C686.0 406.2 687.0 405.8 688.0 405.5C689.0 405.1 690.0 404.8 691.0 404.5C692.0 404.2 693.0 403.9 694.0 403.6C695.0 403.3 696.0 403.0 697.0 402.8C698.0 402.5 699.0 402.3 700.0 402.0C701.0 401.8 702.0 401.6 703.0 401.3C704.0 401.1 705.0 400.9 706.0 400.6C707.0 400.4 708.0 400.1 709.0 399.9C710.0 399.6 711.0 399.4 712.0 399.2C713.0 398.9 714.0 398.7 715.0 398.5C716.0 398.3 717.0 398.1 718.0 397.9C719.0 397.7 720.0 397.5 721.0 397.4C722.0 397.2 723.0 397.1 724.0 397.0C725.0 396.9 726.0 396.7 727.0 396.6C728.0 396.5 729.0 396.4 730.0 396.2C731.0 396.1 732.0 395.9 733.0 395.7C734.0 395.5 735.0 395.3 736.0 395.0C737.0 394.7 738.0 394.4 739.0 394.1C740.0 393.7 741.0 393.3 742.0 392.9C743.0 392.5 744.0 392.0 745.0 391.5C746.0 391.1 747.0 390.5 748.0 390.1C749.0 389.6 750.0 389.1 751.0 388.6C752.0 388.1 753.0 387.7 754.0 387.2C755.0 386.8 756.0 386.3 757.0 385.8C758.0 385.4 759.0 385.0 760.0 384.6C761.0 384.2 762.0 383.9 763.0 383.6C764.0 383.3 765.0 383.1 766.0 382.9C767.0 382.6 768.0 382.4 769.0 382.2C770.0 382.1 771.0 381.9 772.0 381.7C773.0 381.5 774.0 381.3 775.0 381.1C776.0 380.9 777.0 380.7 778.0 380.4C779.0 380.2 780.0 380.0 781.0 379.7C782.0 379.4 783.0 379.2 784.0 378.9C785.0 378.6 786.0 378.3 787.0 378.1C788.0 377.8 789.0 377.5 790.0 377.3C791.0 377.0 792.0 376.8 793.0 376.6C794.0 376.3 795.0 376.1 796.0 375.9C797.0 375.7 798.0 375.5 799.0 375.3C800.0 375.1 801.0 374.9 802.0 374.7C803.0 374.5 804.0 374.3 805.0 374.1C806.0 373.8 807.0 373.5 808.0 373.2C809.0 372.9 810.0 372.5 811.0 372.1C812.0 371.7 813.0 371.3 814.0 370.8C815.0 370.4 816.0 369.9 817.0 369.4C818.0 368.9 819.0 368.3 820.0 367.8C821.0 367.3 822.0 366.8 823.0 366.3C824.0 365.9 825.0 365.4 826.0 365.0C827.0 364.6 828.0 364.2 829.0 363.9C830.0 363.6 831.0 363.4 832.0 363.2C833.0 363.0 834.0 362.8 835.0 362.7C836.0 362.6 837.0 362.5 838.0 362.5C839.0 362.5 840.0 362.4 841.0 362.4C842.0 362.4 843.0 362.4 844.0 362.4C845.0 362.4 846.0 362.3 847.0 362.3C848.0 362.2 849.0 362.1 850.0 362.0C851.0 361.9 852.0 361.8 853.0 361.7C854.0 361.6 855.0 361.4 856.0 361.2C857.0 361.1 858.0 360.9 859.0 360.7C860.0 360.5 861.0 360.3 862.0 360.2C863.0 360.0 864.0 359.8 865.0 359.6C866.0 359.5 867.0 359.3 868.0 359.1C869.0 359.0 870.0 358.8 871.0 358.7C872.0 358.5 873.0 358.4 874.0 358.2C875.0 358.0 876.0 357.8 877.0 357.6C878.0 357.3 879.0 357.1 880.0 356.7C881.0 356.4 882.0 356.1 883.0 355.7C884.0 355.3 885.0 354.9 886.0 354.4C887.0 354.0 888.0 353.5 889.0 353.0C890.0 352.5 891.0 351.9 892.0 351.4C893.0 350.9 894.0 350.4 895.0 350.0C896.0 349.5 897.0 349.1 898.0 348.7C899.0 348.3 900.0 348.0 901.0 347.7C902.0 347.4 903.0 347.2 904.0 347.0C905.0 346.9 906.0 346.9 907.0 346.9C908.0 347.0 909.0 347.1 910.0 347.3C911.0 347.4 912.0 347.7 913.0 347.8C914.0 348.0 915.0 348.2 916.0 348.2C917.0 348.2 918.0 348.2 919.0 348.0C920.0 347.9 921.0 347.6 922.0 347.2C923.0 346.9 924.0 346.4 925.0 346.0C926.0 345.6 927.0 345.1 928.0 344.8C929.0 344.4 930.0 344.1 931.0 343.9C932.0 343.7 933.0 343.7 934.0 343.7C935.0 343.7 936.0 343.9 937.0 344.1C938.0 344.3 939.0 344.6 940.0 344.7C941.0 344.9 942.0 345.0 943.0 345.0C944.0 344.9 945.0 344.7 946.0 344.3C947.0 343.9 948.0 343.3 949.0 342.6C950.0 341.8 951.0 340.8 952.0 339.9C953.0 339.0 954.0 337.9 955.0 337.0C956.0 336.1 957.0 335.2 958.0 334.6C959.0 334.0 960.0 333.5 961.0 333.3C962.0 333.0 963.0 333.1 964.0 333.2C965.0 333.3 966.0 333.8 967.0 334.1C968.0 334.4 969.0 334.9 970.0 335.2C971.0 335.5 972.0 335.7 973.0 335.7C974.0 335.6 975.0 335.4 976.0 335.0C977.0 334.6 978.0 333.8 979.0 333.1C980.0 332.4 981.0 331.4 982.0 330.7C983.0 329.9 984.0 329.1 985.0 328.6C986.0 328.2 987.0 327.8 988.0 327.9C989.0 328.0 990.0 328.4 991.0 329.0C992.0 329.7 993.0 330.7 994.0 331.7C995.0 332.7 996.0 334.1 997.0 335.1C998.0 336.1 999.0 337.1 1000.0 337.7C1001.0 338.3 1002.0 338.7 1003.0 338.5C1004.0 338.4 1005.0 337.8 1006.0 336.9C1007.0 336.0 1008.0 334.6 1009.0 333.3C1010.0 331.9 1011.0 330.0 1012.0 328.6C1013.0 327.2 1014.0 325.6 1015.0 324.6C1016.0 323.7 1017.0 323.0 1018.0 322.8C1019.0 322.7 1020.0 323.0 1021.0 323.7C1022.0 324.4 1023.0 325.6 1024.0 326.8C1025.0 327.9 1026.0 329.5 1027.0 330.6C1028.0 331.7 1029.0 332.9 1030.0 333.4C1031.0 333.9 1032.0 334.1 1033.0 333.7C1034.0 333.3 1035.0 332.2 1036.0 330.9C1037.0 329.6 1036.0 325.9 1039.0 325.9C1042.0 325.9 1049.5 328.4 1054.0 330.9C1058.5 333.4 1060.8 337.2 1066.0 340.9C1071.2 344.6 1081.3 347.3 1084.9 353.0C1088.5 358.7 1086.6 370.3 1087.4 375.0C1088.2 379.7 1089.0 383.3 1089.9 381.0C1090.8 378.7 1092.3 368.2 1092.9 361.0C1093.5 353.8 1093.7 346.0 1093.6 337.5C1093.5 329.0 1093.2 317.2 1092.4 310.0C1091.6 302.8 1090.2 294.0 1088.9 294.0C1087.7 294.0 1085.8 302.8 1084.9 310.0C1084.0 317.2 1083.5 330.3 1083.4 337.5C1083.3 344.7 1084.0 347.4 1084.4 353.0C1084.8 358.6 1085.7 368.0 1085.9 371.0" fill="none" stroke="#9c3434" stroke-width="1.0" stroke-opacity="0.8"/><path d="M250.0 529.4C250.5 529.2 252.0 528.7 253.0 528.3C254.0 528.0 255.0 527.7 256.0 527.3C257.0 527.0 258.0 526.7 259.0 526.3C260.0 526.0 261.0 525.7 262.0 525.4C263.0 525.0 264.0 524.7 265.0 524.4C266.0 524.1 267.0 523.8 268.0 523.5C269.0 523.1 270.0 522.8 271.0 522.5C272.0 522.2 273.0 521.9 274.0 521.6C275.0 521.3 276.0 521.0 277.0 520.7C278.0 520.5 279.0 520.2 280.0 519.9C281.0 519.7 282.0 519.4 283.0 519.2C284.0 519.0 285.0 518.8 286.0 518.5C287.0 518.3 288.0 518.1 289.0 517.9C290.0 517.7 291.0 517.5 292.0 517.2C293.0 517.0 294.0 516.8 295.0 516.5C296.0 516.3 297.0 516.0 298.0 515.7C299.0 515.5 300.0 515.3 301.0 515.0C302.0 514.8 303.0 514.5 304.0 514.2C305.0 514.0 306.0 513.7 307.0 513.4C308.0 513.1 309.0 512.8 310.0 512.5C311.0 512.2 312.0 511.9 313.0 511.7C314.0 511.4 315.0 511.1 316.0 510.8C317.0 510.5 318.0 510.3 319.0 510.0C320.0 509.8 321.0 509.5 322.0 509.3C323.0 509.0 324.0 508.8 325.0 508.5C326.0 508.3 327.0 508.0 328.0 507.8C329.0 507.5 330.0 507.3 331.0 507.0C332.0 506.8 333.0 506.5 334.0 506.2C335.0 505.9 336.0 505.6 337.0 505.3C338.0 505.0 339.0 504.7 340.0 504.4C341.0 504.1 342.0 503.7 343.0 503.4C344.0 503.1 345.0 502.7 346.0 502.4C347.0 502.1 348.0 501.8 349.0 501.5C350.0 501.2 351.0 500.9 352.0 500.7C353.0 500.4 354.0 500.2 355.0 499.9C356.0 499.7 357.0 499.5 358.0 499.3C359.0 499.1 360.0 498.9 361.0 498.7C362.0 498.5 363.0 498.4 364.0 498.2C365.0 498.0 366.0 497.8 367.0 497.6C368.0 497.4 369.0 497.2 370.0 497.0C371.0 496.8 372.0 496.5 373.0 496.3C374.0 496.0 375.0 495.7 376.0 495.4C377.0 495.1 378.0 494.8 379.0 494.5C380.0 494.2 381.0 494.0 382.0 493.8C383.0 493.6 384.0 493.5 385.0 493.3C386.0 493.2 387.0 493.0 388.0 492.8C389.0 492.7 390.0 492.5 391.0 492.4C392.0 492.3 393.0 492.1 394.0 492.0C395.0 491.9 396.0 491.7 397.0 491.6C398.0 491.5 399.0 491.4 400.0 491.2C401.0 491.1 402.0 490.9 403.0 490.8C404.0 490.6 405.0 490.4 406.0 490.2C407.0 490.1 408.0 489.8 409.0 489.6C410.0 489.4 411.0 489.1 412.0 488.9C413.0 488.6 414.0 488.3 415.0 488.0C416.0 487.7 417.0 487.4 418.0 487.1C419.0 486.8 420.0 486.5 421.0 486.2C422.0 485.9 423.0 485.6 424.0 485.3C425.0 485.0 426.0 484.7 427.0 484.5C428.0 484.2 429.0 484.0 430.0 483.7C431.0 483.5 432.0 483.3 433.0 483.1C434.0 482.9 435.0 482.7 436.0 482.5C437.0 482.3 438.0 482.1 439.0 481.9C440.0 481.7 441.0 481.5 442.0 481.3C443.0 481.1 444.0 480.9 445.0 480.7C446.0 480.5 447.0 480.2 448.0 480.0C449.0 479.8 450.0 479.5 451.0 479.3C452.0 479.0 453.0 478.8 454.0 478.5C455.0 478.2 456.0 478.0 457.0 477.7C458.0 477.5 459.0 477.3 460.0 477.0C461.0 476.8 462.0 476.6 463.0 476.4C464.0 476.2 465.0 476.0 466.0 475.9C467.0 475.7 468.0 475.5 469.0 475.4C470.0 475.2 471.0 475.1 472.0 474.9C473.0 474.8 474.0 474.6 475.0 474.5C476.0 474.3 477.0 474.1 478.0 473.9C479.0 473.7 480.0 473.5 481.0 473.3C482.0 473.1 483.0 472.8 484.0 472.6C485.0 472.3 486.0 472.0 487.0 471.7C488.0 471.3 489.0 471.0 490.0 470.7C491.0 470.3 492.0 469.9 493.0 469.6C494.0 469.2 495.0 468.8 496.0 468.5C497.0 468.1 498.0 467.8 499.0 467.4C500.0 467.1 501.0 466.7 502.0 466.4C503.0 466.0 504.0 465.7 505.0 465.4C506.0 465.1 507.0 464.8 508.0 464.5C509.0 464.2 510.0 463.9 511.0 463.5C512.0 463.2 513.0 462.9 514.0 462.6C515.0 462.3 516.0 461.9 517.0 461.6C518.0 461.2 519.0 460.9 520.0 460.5C521.0 460.1 522.0 459.7 523.0 459.3C524.0 458.9 525.0 458.5 526.0 458.1C527.0 457.7 528.0 457.3 529.0 456.9C530.0 456.5 531.0 456.1 532.0 455.8C533.0 455.4 534.0 455.1 535.0 454.7C536.0 454.4 537.0 454.1 538.0 453.9C539.0 453.6 540.0 453.3 541.0 453.1C542.0 452.8 543.0 452.5 544.0 452.3C545.0 452.0 546.0 451.8 547.0 451.6C548.0 451.4 549.0 451.2 550.0 451.0C551.0 450.8 552.0 450.6 553.0 450.4C554.0 450.1 555.0 449.9 556.0 449.7C557.0 449.5 558.0 449.2 559.0 449.0C560.0 448.7 561.0 448.5 562.0 448.2C563.0 447.9 564.0 447.6 565.0 447.4C566.0 447.1 567.0 446.8 568.0 446.5C569.0 446.2 570.0 446.0 571.0 445.7C572.0 445.4 573.0 445.2 574.0 444.9C575.0 444.7 576.0 444.4 577.0 444.2C578.0 444.0 579.0 443.8 580.0 443.5C581.0 443.3 582.0 443.1 583.0 442.8C584.0 442.6 585.0 442.4 586.0 442.1C587.0 441.8 588.0 441.5 589.0 441.2C590.0 440.9 591.0 440.5 592.0 440.1C593.0 439.8 594.0 439.3 595.0 438.9C596.0 438.4 597.0 438.0 598.0 437.5C599.0 437.0 600.0 436.4 601.0 435.9C602.0 435.4 603.0 434.9 604.0 434.4C605.0 433.9 606.0 433.5 607.0 433.1C608.0 432.6 609.0 432.2 610.0 431.7C611.0 431.3 612.0 430.9 613.0 430.5C614.0 430.1 615.0 429.7 616.0 429.3C617.0 429.0 618.0 428.6 619.0 428.2C620.0 427.9 621.0 427.5 622.0 427.2C623.0 426.8 624.0 426.5 625.0 426.1C626.0 425.7 627.0 425.4 628.0 425.0C629.0 424.6 630.0 424.2 631.0 423.8C632.0 423.4 633.0 422.9 634.0 422.5C635.0 422.1 636.0 421.6 637.0 421.2C638.0 420.7 639.0 420.3 640.0 419.8C641.0 419.4 642.0 419.0 643.0 418.6C644.0 418.2 645.0 417.8 646.0 417.4C647.0 417.1 648.0 416.7 649.0 416.4C650.0 416.1 651.0 415.9 652.0 415.6C653.0 415.3 654.0 415.1 655.0 414.9C656.0 414.6 657.0 414.4 658.0 414.2C659.0 414.0 660.0 413.8 661.0 413.6C662.0 413.3 663.0 413.1 664.0 412.8C665.0 412.5 666.0 412.3 667.0 412.0C668.0 411.6 669.0 411.3 670.0 410.9C671.0 410.6 672.0 410.2 673.0 409.8C674.0 409.4 675.0 409.0 676.0 408.6C677.0 408.2 678.0 407.8 679.0 407.4C680.0 407.0 681.0 406.6 682.0 406.2C683.0 405.8 684.0 405.5 685.0 405.1C686.0 404.8 687.0 404.5 688.0 404.1C689.0 403.8 690.0 403.5 691.0 403.2C692.0 402.8 693.0 402.5 694.0 402.1C695.0 401.7 696.0 401.4 697.0 401.0C698.0 400.7 699.0 400.3 700.0 399.9C701.0 399.5 702.0 399.1 703.0 398.7C704.0 398.3 705.0 397.9 706.0 397.4C707.0 397.0 708.0 396.5 709.0 396.0C710.0 395.6 711.0 395.1 712.0 394.7C713.0 394.2 714.0 393.7 715.0 393.3C716.0 392.9 717.0 392.5 718.0 392.1C719.0 391.7 720.0 391.4 721.0 391.1C722.0 390.8 723.0 390.5 724.0 390.3C725.0 390.0 726.0 389.8 727.0 389.7C728.0 389.5 729.0 389.4 730.0 389.2C731.0 389.1 732.0 389.0 733.0 388.9C734.0 388.8 735.0 388.7 736.0 388.6C737.0 388.5 738.0 388.4 739.0 388.2C740.0 388.1 741.0 387.9 742.0 387.8C743.0 387.6 744.0 387.4 745.0 387.2C746.0 387.0 747.0 386.8 748.0 386.5C749.0 386.3 750.0 386.1 751.0 385.8C752.0 385.6 753.0 385.4 754.0 385.2C755.0 384.9 756.0 384.6 757.0 384.3C758.0 384.1 759.0 383.8 760.0 383.5C761.0 383.3 762.0 383.1 763.0 382.9C764.0 382.6 765.0 382.5 766.0 382.3C767.0 382.0 768.0 381.9 769.0 381.6C770.0 381.4 771.0 381.2 772.0 380.9C773.0 380.7 774.0 380.4 775.0 380.1C776.0 379.8 777.0 379.4 778.0 379.0C779.0 378.6 780.0 378.2 781.0 377.7C782.0 377.3 783.0 376.8 784.0 376.3C785.0 375.8 786.0 375.3 787.0 374.8C788.0 374.2 789.0 373.7 790.0 373.2C791.0 372.7 792.0 372.2 793.0 371.7C794.0 371.3 795.0 370.8 796.0 370.4C797.0 370.0 798.0 369.6 799.0 369.2C800.0 368.9 801.0 368.6 802.0 368.3C803.0 368.0 804.0 367.7 805.0 367.5C806.0 367.2 807.0 367.0 808.0 366.7C809.0 366.5 810.0 366.2 811.0 366.0C812.0 365.7 813.0 365.4 814.0 365.1C815.0 364.8 816.0 364.5 817.0 364.2C818.0 363.9 819.0 363.5 820.0 363.2C821.0 362.9 822.0 362.5 823.0 362.2C824.0 361.9 825.0 361.6 826.0 361.3C827.0 361.0 828.0 360.8 829.0 360.5C830.0 360.3 831.0 360.2 832.0 360.0C833.0 359.9 834.0 359.8 835.0 359.7C836.0 359.6 837.0 359.6 838.0 359.6C839.0 359.6 840.0 359.6 841.0 359.6C842.0 359.6 843.0 359.7 844.0 359.7C845.0 359.7 846.0 359.7 847.0 359.6C848.0 359.6 849.0 359.5 850.0 359.4C851.0 359.3 852.0 359.2 853.0 359.1C854.0 358.9 855.0 358.7 856.0 358.5C857.0 358.3 858.0 358.0 859.0 357.8C860.0 357.5 861.0 357.2 862.0 357.0C863.0 356.7 864.0 356.4 865.0 356.1C866.0 355.9 867.0 355.6 868.0 355.4C869.0 355.1 870.0 354.9 871.0 354.7C872.0 354.5 873.0 354.3 874.0 354.1C875.0 353.9 876.0 353.8 877.0 353.6C878.0 353.4 879.0 353.2 880.0 353.0C881.0 352.8 882.0 352.6 883.0 352.4C884.0 352.1 885.0 351.8 886.0 351.5C887.0 351.2 888.0 350.8 889.0 350.4C890.0 350.1 891.0 349.6 892.0 349.2C893.0 348.7 894.0 348.3 895.0 347.8C896.0 347.3 897.0 346.8 898.0 346.4C899.0 345.9 900.0 345.4 901.0 345.0C902.0 344.7 903.0 344.4 904.0 344.1C905.0 343.8 906.0 343.6 907.0 343.4C908.0 343.1 909.0 342.9 910.0 342.7C911.0 342.5 912.0 342.3 913.0 342.1C914.0 341.9 915.0 341.6 916.0 341.4C917.0 341.1 918.0 340.9 919.0 340.6C920.0 340.4 921.0 340.1 922.0 339.9C923.0 339.7 924.0 339.5 925.0 339.3C926.0 339.2 927.0 339.1 928.0 339.1C929.0 339.0 930.0 339.1 931.0 339.1C932.0 339.2 933.0 339.3 934.0 339.4C935.0 339.5 936.0 339.7 937.0 339.8C938.0 339.9 939.0 340.0 940.0 340.0C941.0 340.0 942.0 340.0 943.0 339.9C944.0 339.7 945.0 339.5 946.0 339.2C947.0 339.0 948.0 338.6 949.0 338.2C950.0 337.7 951.0 337.2 952.0 336.8C953.0 336.3 954.0 335.8 955.0 335.3C956.0 334.9 957.0 334.5 958.0 334.2C959.0 333.9 960.0 333.7 961.0 333.6C962.0 333.5 963.0 333.6 964.0 333.7C965.0 333.8 966.0 334.0 967.0 334.2C968.0 334.4 969.0 334.8 970.0 335.0C971.0 335.2 972.0 335.5 973.0 335.5C974.0 335.6 975.0 335.6 976.0 335.5C977.0 335.3 978.0 334.9 979.0 334.4C980.0 333.9 981.0 333.2 982.0 332.4C983.0 331.6 984.0 330.6 985.0 329.6C986.0 328.6 987.0 327.4 988.0 326.4C989.0 325.4 990.0 324.4 991.0 323.6C992.0 322.8 993.0 322.0 994.0 321.6C995.0 321.1 996.0 320.9 997.0 320.9C998.0 320.8 999.0 321.1 1000.0 321.5C1001.0 321.9 1002.0 322.5 1003.0 323.2C1004.0 323.8 1005.0 324.7 1006.0 325.4C1007.0 326.1 1008.0 326.8 1009.0 327.3C1010.0 327.8 1011.0 328.2 1012.0 328.3C1013.0 328.4 1014.0 328.3 1015.0 328.0C1016.0 327.6 1017.0 327.0 1018.0 326.3C1019.0 325.6 1020.0 324.6 1021.0 323.7C1022.0 322.7 1023.0 321.6 1024.0 320.8C1025.0 319.9 1026.0 319.0 1027.0 318.5C1028.0 317.9 1029.0 317.5 1030.0 317.5C1031.0 317.4 1032.0 317.7 1033.0 318.2C1034.0 318.8 1035.0 319.7 1036.0 320.8C1037.0 321.8 1036.0 323.1 1039.0 324.5C1042.0 326.0 1049.5 327.0 1054.0 329.5C1058.5 332.0 1060.7 335.6 1066.0 339.5C1071.3 343.4 1082.0 347.1 1085.7 353.0C1089.4 358.9 1087.4 370.3 1088.2 375.0C1089.0 379.7 1089.8 383.3 1090.7 381.0C1091.6 378.7 1093.1 368.2 1093.7 361.0C1094.3 353.8 1094.5 346.0 1094.4 337.5C1094.3 329.0 1094.0 317.1 1093.2 310.0C1092.4 302.9 1091.0 295.0 1089.7 295.0C1088.5 295.0 1086.6 302.9 1085.7 310.0C1084.8 317.1 1084.3 330.3 1084.2 337.5C1084.1 344.7 1084.8 347.4 1085.2 353.0C1085.6 358.6 1086.5 368.0 1086.7 371.0" fill="none" stroke="#9c3434" stroke-width="1.0" stroke-opacity="0.8"/><path d="M520.0 464.6C520.5 464.5 522.0 464.0 523.0 463.6C524.0 463.3 525.0 462.9 526.0 462.5C527.0 462.2 528.0 461.8 529.0 461.4C530.0 461.1 531.0 460.7 532.0 460.4C533.0 460.1 534.0 459.8 535.0 459.5C536.0 459.3 537.0 459.0 538.0 458.8C539.0 458.6 540.0 458.4 541.0 458.2C542.0 458.0 543.0 457.8 544.0 457.7C545.0 457.5 546.0 457.3 547.0 457.2C548.0 457.0 549.0 456.9 550.0 456.7C551.0 456.6 552.0 456.4 553.0 456.2C554.0 456.0 555.0 455.8 556.0 455.5C557.0 455.3 558.0 455.0 559.0 454.7C560.0 454.4 561.0 454.1 562.0 453.7C563.0 453.4 564.0 453.0 565.0 452.7C566.0 452.3 567.0 452.0 568.0 451.6C569.0 451.2 570.0 450.9 571.0 450.5C572.0 450.2 573.0 449.9 574.0 449.5C575.0 449.2 576.0 448.9 577.0 448.6C578.0 448.2 579.0 447.9 580.0 447.6C581.0 447.2 582.0 446.9 583.0 446.5C584.0 446.2 585.0 445.8 586.0 445.4C587.0 445.0 588.0 444.6 589.0 444.1C590.0 443.7 591.0 443.2 592.0 442.7C593.0 442.2 594.0 441.7 595.0 441.2C596.0 440.7 597.0 440.2 598.0 439.7C599.0 439.2 600.0 438.7 601.0 438.3C602.0 437.8 603.0 437.5 604.0 437.2C605.0 436.9 606.0 436.7 607.0 436.4C608.0 436.2 609.0 436.0 610.0 435.8C611.0 435.7 612.0 435.5 613.0 435.3C614.0 435.1 615.0 435.0 616.0 434.8C617.0 434.6 618.0 434.4 619.0 434.2C620.0 434.0 621.0 433.7 622.0 433.4C623.0 433.1 624.0 432.8 625.0 432.5C626.0 432.1 627.0 431.8 628.0 431.4C629.0 431.0 630.0 430.6 631.0 430.2C632.0 429.8 633.0 429.3 634.0 428.9C635.0 428.5 636.0 428.1 637.0 427.7C638.0 427.3 639.0 427.0 640.0 426.6C641.0 426.2 642.0 425.8 643.0 425.4C644.0 425.1 645.0 424.7 646.0 424.3C647.0 423.9 648.0 423.5 649.0 423.1C650.0 422.7 651.0 422.2 652.0 421.7C653.0 421.2 654.0 420.7 655.0 420.2C656.0 419.7 657.0 419.1 658.0 418.5C659.0 417.9 660.0 417.3 661.0 416.8C662.0 416.2 663.0 415.6 664.0 415.0C665.0 414.5 666.0 413.9 667.0 413.5C668.0 413.0 669.0 412.5 670.0 412.1C671.0 411.7 672.0 411.3 673.0 411.0C674.0 410.7 675.0 410.4 676.0 410.2C677.0 410.0 678.0 409.8 679.0 409.6C680.0 409.4 681.0 409.2 682.0 409.1C683.0 408.9 684.0 408.8 685.0 408.6C686.0 408.4 687.0 408.2 688.0 408.0C689.0 407.8 690.0 407.6 691.0 407.3C692.0 407.0 693.0 406.6 694.0 406.3C695.0 406.0 696.0 405.6 697.0 405.3C698.0 405.0 699.0 404.7 700.0 404.4C701.0 404.1 702.0 403.8 703.0 403.6C704.0 403.3 705.0 403.1 706.0 402.9C707.0 402.7 708.0 402.5 709.0 402.3C710.0 402.1 711.0 402.0 712.0 401.8C713.0 401.5 714.0 401.3 715.0 401.1C716.0 400.8 717.0 400.6 718.0 400.2C719.0 399.9 720.0 399.6 721.0 399.2C722.0 398.8 723.0 398.3 724.0 397.9C725.0 397.4 726.0 396.9 727.0 396.4C728.0 395.9 729.0 395.4 730.0 395.0C731.0 394.5 732.0 394.0 733.0 393.6C734.0 393.2 735.0 392.8 736.0 392.4C737.0 392.0 738.0 391.7 739.0 391.5C740.0 391.2 741.0 391.0 742.0 390.8C743.0 390.6 744.0 390.4 745.0 390.3C746.0 390.1 747.0 390.0 748.0 389.9C749.0 389.7 750.0 389.6 751.0 389.4C752.0 389.3 753.0 389.1 754.0 388.9C755.0 388.7 756.0 388.4 757.0 388.1C758.0 387.8 759.0 387.4 760.0 387.1C761.0 386.7 762.0 386.4 763.0 386.1C764.0 385.8 765.0 385.5 766.0 385.2C767.0 384.9 768.0 384.7 769.0 384.5C770.0 384.3 771.0 384.1 772.0 383.9C773.0 383.8 774.0 383.6 775.0 383.5C776.0 383.4 777.0 383.2 778.0 383.1C779.0 382.9 780.0 382.8 781.0 382.5C782.0 382.3 783.0 382.1 784.0 381.8C785.0 381.5 786.0 381.1 787.0 380.7C788.0 380.3 789.0 379.8 790.0 379.3C791.0 378.8 792.0 378.3 793.0 377.8C794.0 377.2 795.0 376.6 796.0 376.1C797.0 375.5 798.0 374.9 799.0 374.4C800.0 373.9 801.0 373.4 802.0 373.0C803.0 372.6 804.0 372.2 805.0 371.8C806.0 371.5 807.0 371.2 808.0 370.9C809.0 370.6 810.0 370.4 811.0 370.2C812.0 369.9 813.0 369.7 814.0 369.5C815.0 369.3 816.0 369.1 817.0 368.9C818.0 368.6 819.0 368.4 820.0 368.1C821.0 367.9 822.0 367.6 823.0 367.3C824.0 367.1 825.0 366.8 826.0 366.5C827.0 366.3 828.0 366.0 829.0 365.8C830.0 365.6 831.0 365.4 832.0 365.2C833.0 365.1 834.0 365.0 835.0 364.9C836.0 364.8 837.0 364.8 838.0 364.8C839.0 364.8 840.0 364.9 841.0 364.9C842.0 364.9 843.0 365.0 844.0 365.0C845.0 365.1 846.0 365.1 847.0 365.1C848.0 365.1 849.0 365.0 850.0 364.9C851.0 364.8 852.0 364.6 853.0 364.4C854.0 364.2 855.0 363.9 856.0 363.6C857.0 363.3 858.0 362.9 859.0 362.5C860.0 362.2 861.0 361.7 862.0 361.3C863.0 360.9 864.0 360.4 865.0 360.0C866.0 359.6 867.0 359.2 868.0 358.8C869.0 358.4 870.0 358.1 871.0 357.8C872.0 357.4 873.0 357.2 874.0 356.9C875.0 356.6 876.0 356.4 877.0 356.1C878.0 355.9 879.0 355.6 880.0 355.4C881.0 355.1 882.0 354.9 883.0 354.6C884.0 354.3 885.0 354.0 886.0 353.6C887.0 353.3 888.0 352.9 889.0 352.6C890.0 352.2 891.0 351.8 892.0 351.5C893.0 351.2 894.0 350.8 895.0 350.5C896.0 350.2 897.0 350.0 898.0 349.8C899.0 349.6 900.0 349.5 901.0 349.4C902.0 349.3 903.0 349.3 904.0 349.2C905.0 349.2 906.0 349.2 907.0 349.2C908.0 349.2 909.0 349.3 910.0 349.3C911.0 349.4 912.0 349.5 913.0 349.6C914.0 349.7 915.0 349.9 916.0 350.0C917.0 350.1 918.0 350.3 919.0 350.3C920.0 350.4 921.0 350.5 922.0 350.4C923.0 350.4 924.0 350.3 925.0 350.0C926.0 349.7 927.0 349.4 928.0 348.9C929.0 348.4 930.0 347.8 931.0 347.1C932.0 346.5 933.0 345.7 934.0 345.0C935.0 344.3 936.0 343.5 937.0 342.9C938.0 342.2 939.0 341.6 940.0 341.2C941.0 340.8 942.0 340.5 943.0 340.4C944.0 340.2 945.0 340.3 946.0 340.3C947.0 340.4 948.0 340.6 949.0 340.8C950.0 341.0 951.0 341.2 952.0 341.3C953.0 341.3 954.0 341.4 955.0 341.1C956.0 340.9 957.0 340.6 958.0 340.0C959.0 339.4 960.0 338.6 961.0 337.8C962.0 336.9 963.0 335.8 964.0 334.8C965.0 333.8 966.0 332.7 967.0 331.9C968.0 331.1 969.0 330.3 970.0 329.9C971.0 329.5 972.0 329.3 973.0 329.5C974.0 329.6 975.0 330.1 976.0 330.8C977.0 331.5 978.0 332.5 979.0 333.5C980.0 334.5 981.0 335.7 982.0 336.7C983.0 337.6 984.0 338.7 985.0 339.2C986.0 339.8 987.0 340.2 988.0 340.2C989.0 340.2 990.0 339.8 991.0 339.2C992.0 338.5 993.0 337.4 994.0 336.3C995.0 335.2 996.0 333.8 997.0 332.6C998.0 331.4 999.0 330.0 1000.0 329.2C1001.0 328.3 1002.0 327.5 1003.0 327.2C1004.0 326.9 1005.0 327.0 1006.0 327.4C1007.0 327.8 1008.0 328.7 1009.0 329.6C1010.0 330.5 1011.0 331.8 1012.0 332.8C1013.0 333.8 1014.0 335.0 1015.0 335.7C1016.0 336.4 1017.0 337.0 1018.0 337.0C1019.0 337.0 1020.0 336.6 1021.0 335.8C1022.0 334.9 1023.0 333.6 1024.0 332.0C1025.0 330.5 1026.0 328.5 1027.0 326.7C1028.0 325.0 1029.0 322.9 1030.0 321.4C1031.0 319.9 1032.0 318.5 1033.0 317.8C1034.0 317.0 1035.0 316.8 1036.0 317.0C1037.0 317.3 1037.0 318.3 1039.0 319.5C1041.0 320.8 1045.2 322.0 1048.0 324.5C1050.8 327.0 1053.2 331.3 1056.0 334.5C1058.8 337.8 1063.1 338.8 1065.0 344.0C1066.9 349.2 1066.7 361.3 1067.5 366.0C1068.3 370.7 1069.1 374.3 1070.0 372.0C1070.9 369.7 1072.4 358.0 1073.0 352.0C1073.6 346.0 1073.8 342.0 1073.7 336.0C1073.6 330.0 1073.3 322.0 1072.5 316.0C1071.7 310.0 1070.2 300.0 1069.0 300.0C1067.8 300.0 1065.9 310.0 1065.0 316.0C1064.1 322.0 1063.6 331.3 1063.5 336.0C1063.4 340.7 1064.1 339.7 1064.5 344.0C1064.9 348.3 1065.8 359.0 1066.0 362.0" fill="none" stroke="#9c3434" stroke-width="1.0" stroke-opacity="0.8"/><path d="M677.0 406.7C677.5 406.5 679.0 405.7 680.0 405.2C681.0 404.6 682.0 404.1 683.0 403.6C684.0 403.1 685.0 402.6 686.0 402.1C687.0 401.7 688.0 401.3 689.0 400.8C690.0 400.4 691.0 400.0 692.0 399.5C693.0 399.1 694.0 398.7 695.0 398.4C696.0 398.0 697.0 397.7 698.0 397.4C699.0 397.2 700.0 396.9 701.0 396.7C702.0 396.4 703.0 396.2 704.0 396.0C705.0 395.8 706.0 395.6 707.0 395.4C708.0 395.2 709.0 395.0 710.0 394.8C711.0 394.6 712.0 394.4 713.0 394.2C714.0 394.0 715.0 393.7 716.0 393.5C717.0 393.3 718.0 393.1 719.0 392.8C720.0 392.6 721.0 392.4 722.0 392.2C723.0 392.0 724.0 391.8 725.0 391.6C726.0 391.4 727.0 391.2 728.0 391.0C729.0 390.9 730.0 390.7 731.0 390.6C732.0 390.4 733.0 390.3 734.0 390.1C735.0 390.0 736.0 389.9 737.0 389.8C738.0 389.6 739.0 389.5 740.0 389.3C741.0 389.2 742.0 389.0 743.0 388.8C744.0 388.6 745.0 388.4 746.0 388.1C747.0 387.9 748.0 387.6 749.0 387.3C750.0 386.9 751.0 386.6 752.0 386.2C753.0 385.8 754.0 385.4 755.0 384.9C756.0 384.4 757.0 383.7 758.0 383.1C759.0 382.5 760.0 381.9 761.0 381.4C762.0 380.8 763.0 380.2 764.0 379.6C765.0 379.1 766.0 378.6 767.0 378.1C768.0 377.6 769.0 377.1 770.0 376.7C771.0 376.3 772.0 375.9 773.0 375.5C774.0 375.2 775.0 374.9 776.0 374.6C777.0 374.3 778.0 374.1 779.0 373.8C780.0 373.6 781.0 373.4 782.0 373.2C783.0 373.0 784.0 372.8 785.0 372.6C786.0 372.4 787.0 372.3 788.0 372.0C789.0 371.8 790.0 371.6 791.0 371.4C792.0 371.2 793.0 371.0 794.0 370.7C795.0 370.5 796.0 370.2 797.0 370.0C798.0 369.7 799.0 369.4 800.0 369.2C801.0 369.0 802.0 368.8 803.0 368.5C804.0 368.3 805.0 368.1 806.0 368.0C807.0 367.8 808.0 367.6 809.0 367.5C810.0 367.3 811.0 367.2 812.0 367.0C813.0 366.9 814.0 366.8 815.0 366.7C816.0 366.5 817.0 366.4 818.0 366.3C819.0 366.1 820.0 366.0 821.0 365.8C822.0 365.6 823.0 365.4 824.0 365.2C825.0 365.0 826.0 364.7 827.0 364.4C828.0 364.1 829.0 363.7 830.0 363.3C831.0 363.0 832.0 362.5 833.0 362.1C834.0 361.6 835.0 361.2 836.0 360.7C837.0 360.2 838.0 359.7 839.0 359.2C840.0 358.7 841.0 358.2 842.0 357.7C843.0 357.3 844.0 356.8 845.0 356.4C846.0 356.0 847.0 355.6 848.0 355.2C849.0 354.9 850.0 354.6 851.0 354.3C852.0 354.1 853.0 353.9 854.0 353.8C855.0 353.6 856.0 353.5 857.0 353.4C858.0 353.3 859.0 353.2 860.0 353.1C861.0 353.1 862.0 353.0 863.0 353.0C864.0 352.9 865.0 352.9 866.0 352.8C867.0 352.8 868.0 352.7 869.0 352.6C870.0 352.5 871.0 352.4 872.0 352.3C873.0 352.2 874.0 352.0 875.0 351.9C876.0 351.7 877.0 351.6 878.0 351.4C879.0 351.3 880.0 351.1 881.0 350.9C882.0 350.8 883.0 350.6 884.0 350.5C885.0 350.4 886.0 350.2 887.0 350.1C888.0 350.0 889.0 349.9 890.0 349.8C891.0 349.7 892.0 349.7 893.0 349.6C894.0 349.5 895.0 349.4 896.0 349.3C897.0 349.2 898.0 349.1 899.0 349.0C900.0 348.9 901.0 348.7 902.0 348.6C903.0 348.4 904.0 348.3 905.0 348.1C906.0 347.9 907.0 347.6 908.0 347.2C909.0 346.9 910.0 346.4 911.0 345.9C912.0 345.4 913.0 344.8 914.0 344.1C915.0 343.5 916.0 342.7 917.0 342.0C918.0 341.3 919.0 340.5 920.0 339.8C921.0 339.1 922.0 338.5 923.0 337.9C924.0 337.4 925.0 337.0 926.0 336.7C927.0 336.4 928.0 336.2 929.0 336.2C930.0 336.1 931.0 336.2 932.0 336.3C933.0 336.4 934.0 336.7 935.0 336.9C936.0 337.1 937.0 337.4 938.0 337.5C939.0 337.6 940.0 337.7 941.0 337.7C942.0 337.6 943.0 337.5 944.0 337.2C945.0 336.9 946.0 336.4 947.0 336.0C948.0 335.5 949.0 334.8 950.0 334.2C951.0 333.6 952.0 333.0 953.0 332.4C954.0 331.9 955.0 331.4 956.0 331.1C957.0 330.8 958.0 330.6 959.0 330.6C960.0 330.6 961.0 330.8 962.0 331.2C963.0 331.5 964.0 332.0 965.0 332.6C966.0 333.1 967.0 333.8 968.0 334.4C969.0 335.0 970.0 335.6 971.0 336.0C972.0 336.4 973.0 336.7 974.0 336.7C975.0 336.8 976.0 336.6 977.0 336.2C978.0 335.8 979.0 335.1 980.0 334.2C981.0 333.4 982.0 332.3 983.0 331.3C984.0 330.2 985.0 329.0 986.0 327.9C987.0 326.8 988.0 325.7 989.0 324.9C990.0 324.1 991.0 323.4 992.0 323.0C993.0 322.6 994.0 322.4 995.0 322.5C996.0 322.6 997.0 322.9 998.0 323.4C999.0 323.8 1000.0 324.5 1001.0 325.1C1002.0 325.6 1003.0 326.3 1004.0 326.8C1005.0 327.3 1006.0 327.7 1007.0 327.8C1008.0 327.9 1009.0 327.8 1010.0 327.5C1011.0 327.1 1012.0 326.3 1013.0 325.5C1014.0 324.7 1015.0 323.5 1016.0 322.5C1017.0 321.4 1018.0 320.2 1019.0 319.2C1020.0 318.2 1021.0 317.3 1022.0 316.7C1023.0 316.1 1024.0 315.7 1025.0 315.7C1026.0 315.7 1027.0 316.1 1028.0 316.8C1029.0 317.4 1030.0 318.5 1031.0 319.7C1032.0 320.9 1033.0 322.5 1034.0 323.9C1035.0 325.3 1036.0 326.9 1037.0 328.1C1038.0 329.3 1037.7 329.9 1040.0 331.2C1042.3 332.6 1047.5 333.7 1051.0 336.2C1054.5 338.7 1056.8 342.7 1061.0 346.2C1065.2 349.7 1073.1 351.5 1076.0 357.0C1078.9 362.5 1077.7 374.3 1078.5 379.0C1079.3 383.7 1080.1 387.3 1081.0 385.0C1081.9 382.7 1083.4 372.5 1084.0 365.0C1084.6 357.5 1084.8 349.0 1084.7 340.0C1084.6 331.0 1084.3 318.3 1083.5 311.0C1082.7 303.7 1081.2 296.0 1080.0 296.0C1078.8 296.0 1076.9 303.7 1076.0 311.0C1075.1 318.3 1074.6 332.3 1074.5 340.0C1074.4 347.7 1075.1 351.2 1075.5 357.0C1075.9 362.8 1076.8 372.0 1077.0 375.0" fill="none" stroke="#9c3434" stroke-width="1.0" stroke-opacity="0.8"/><path d="M1077.3 526.0C1077.0 523.0 1076.2 514.0 1075.8 508.0C1075.4 502.0 1074.7 498.0 1074.8 490.0C1074.9 482.0 1075.4 467.5 1076.3 460.0C1077.2 452.5 1079.0 445.0 1080.3 445.0C1081.5 445.0 1083.0 452.5 1083.8 460.0C1084.6 467.5 1084.9 480.7 1085.0 490.0C1085.1 499.3 1084.9 508.3 1084.3 516.0C1083.7 523.7 1082.2 533.7 1081.3 536.0C1080.4 538.3 1079.6 534.7 1078.8 530.0C1078.0 525.3 1079.3 511.6 1076.3 508.0C1073.3 504.4 1065.2 510.9 1061.0 508.5C1056.8 506.1 1054.7 496.8 1051.0 493.5C1047.3 490.1 1041.5 489.1 1039.0 488.5C1036.5 487.8 1037.0 489.3 1036.0 489.4C1035.0 489.6 1034.0 489.6 1033.0 489.4C1032.0 489.2 1031.0 488.8 1030.0 488.4C1029.0 487.9 1028.0 487.2 1027.0 486.5C1026.0 485.8 1025.0 485.0 1024.0 484.2C1023.0 483.5 1022.0 482.6 1021.0 481.9C1020.0 481.2 1019.0 480.6 1018.0 480.1C1017.0 479.6 1016.0 479.2 1015.0 478.9C1014.0 478.7 1013.0 478.6 1012.0 478.6C1011.0 478.7 1010.0 478.9 1009.0 479.1C1008.0 479.3 1007.0 479.6 1006.0 480.0C1005.0 480.3 1004.0 480.7 1003.0 481.1C1002.0 481.4 1001.0 481.8 1000.0 482.2C999.0 482.6 998.0 482.9 997.0 483.2C996.0 483.5 995.0 483.8 994.0 484.1C993.0 484.4 992.0 484.7 991.0 485.0C990.0 485.3 989.0 485.6 988.0 485.9C987.0 486.3 986.0 486.7 985.0 487.1C984.0 487.5 983.0 487.9 982.0 488.4C981.0 488.8 980.0 489.4 979.0 489.8C978.0 490.3 977.0 490.7 976.0 491.1C975.0 491.5 974.0 491.9 973.0 492.1C972.0 492.4 971.0 492.5 970.0 492.6C969.0 492.6 968.0 492.6 967.0 492.5C966.0 492.3 965.0 492.1 964.0 491.8C963.0 491.5 962.0 491.1 961.0 490.7C960.0 490.4 959.0 489.9 958.0 489.6C957.0 489.2 956.0 488.8 955.0 488.6C954.0 488.3 953.0 488.0 952.0 487.9C951.0 487.8 950.0 487.8 949.0 487.8C948.0 487.9 947.0 488.1 946.0 488.3C945.0 488.5 944.0 488.9 943.0 489.2C942.0 489.6 941.0 490.0 940.0 490.4C939.0 490.8 938.0 491.2 937.0 491.6C936.0 492.0 935.0 492.3 934.0 492.7C933.0 493.0 932.0 493.3 931.0 493.5C930.0 493.8 929.0 494.0 928.0 494.2C927.0 494.4 926.0 494.5 925.0 494.7C924.0 494.8 923.0 494.9 922.0 495.1C921.0 495.2 920.0 495.4 919.0 495.5C918.0 495.7 917.0 495.9 916.0 496.0C915.0 496.2 914.0 496.4 913.0 496.6C912.0 496.7 911.0 496.9 910.0 497.0C909.0 497.1 908.0 497.2 907.0 497.2C906.0 497.2 905.0 497.2 904.0 497.1C903.0 497.0 902.0 496.9 901.0 496.7C900.0 496.6 899.0 496.3 898.0 496.1C897.0 495.8 896.0 495.6 895.0 495.3C894.0 495.1 893.0 494.8 892.0 494.6C891.0 494.4 890.0 494.3 889.0 494.2C888.0 494.1 887.0 494.0 886.0 494.1C885.0 494.1 884.0 494.2 883.0 494.4C882.0 494.6 881.0 494.9 880.0 495.1C879.0 495.4 878.0 495.7 877.0 496.1C876.0 496.4 875.0 496.8 874.0 497.1C873.0 497.4 872.0 497.8 871.0 498.1C870.0 498.4 869.0 498.6 868.0 498.8C867.0 499.0 866.0 499.2 865.0 499.4C864.0 499.5 863.0 499.6 862.0 499.7C861.0 499.7 860.0 499.8 859.0 499.8C858.0 499.8 857.0 499.9 856.0 499.9C855.0 499.9 854.0 499.9 853.0 500.0C852.0 500.0 851.0 500.0 850.0 500.1C849.0 500.1 848.0 500.2 847.0 500.3C846.0 500.3 845.0 500.4 844.0 500.4C843.0 500.4 842.0 500.5 841.0 500.4C840.0 500.4 839.0 500.4 838.0 500.4C837.0 500.3 836.0 500.2 835.0 500.1C834.0 500.0 833.0 499.9 832.0 499.8C831.0 499.7 830.0 499.5 829.0 499.5C828.0 499.4 827.0 499.3 826.0 499.2C825.0 499.2 824.0 499.2 823.0 499.2C822.0 499.3 821.0 499.3 820.0 499.5C819.0 499.6 818.0 499.8 817.0 500.0C816.0 500.3 815.0 500.5 814.0 500.8C813.0 501.1 812.0 501.5 811.0 501.8C810.0 502.1 809.0 502.4 808.0 502.7C807.0 503.0 806.0 503.3 805.0 503.6C804.0 503.9 803.0 504.1 802.0 504.3C801.0 504.5 800.0 504.6 799.0 504.8C798.0 504.9 797.0 505.0 796.0 505.1C795.0 505.2 794.0 505.3 793.0 505.4C792.0 505.4 791.0 505.5 790.0 505.6C789.0 505.6 788.0 505.7 787.0 505.8C786.0 505.9 785.0 506.0 784.0 506.1C783.0 506.2 782.0 506.4 781.0 506.5C780.0 506.7 779.0 506.8 778.0 507.0C777.0 507.1 776.0 507.3 775.0 507.4C774.0 507.6 773.0 507.7 772.0 507.8C771.0 508.0 770.0 508.1 769.0 508.2C768.0 508.3 767.0 508.5 766.0 508.6C765.0 508.7 764.0 508.9 763.0 509.0C762.0 509.2 761.0 509.4 760.0 509.6C759.0 509.9 758.0 510.1 757.0 510.4C756.0 510.7 755.0 511.0 754.0 511.4C753.0 511.7 752.0 512.1 751.0 512.4C750.0 512.8 749.0 513.2 748.0 513.6C747.0 514.0 746.0 514.4 745.0 514.8C744.0 515.2 743.0 515.6 742.0 516.0C741.0 516.3 740.0 516.7 739.0 516.9C738.0 517.2 737.0 517.5 736.0 517.7C735.0 517.9 734.0 518.1 733.0 518.3C732.0 518.4 731.0 518.6 730.0 518.7C729.0 518.8 728.0 518.9 727.0 519.0C726.0 519.1 725.0 519.2 724.0 519.4C723.0 519.5 722.0 519.7 721.0 519.8C720.0 520.0 719.0 520.2 718.0 520.4C717.0 520.6 716.0 520.8 715.0 521.1C714.0 521.3 713.0 521.6 712.0 521.9C711.0 522.1 710.0 522.4 709.0 522.7C708.0 523.0 707.0 523.3 706.0 523.6C705.0 523.9 704.0 524.2 703.0 524.5C702.0 524.8 701.0 525.2 700.0 525.4C699.0 525.7 698.0 525.8 697.0 526.0C696.0 526.2 695.0 526.4 694.0 526.6C693.0 526.9 692.0 527.2 691.0 527.5C690.0 527.8 689.0 528.1 688.0 528.4C687.0 528.8 686.0 529.1 685.0 529.5C684.0 529.9 683.0 530.3 682.0 530.7C681.0 531.1 680.0 531.5 679.0 531.8C678.0 532.2 677.0 532.5 676.0 532.9C675.0 533.2 674.0 533.5 673.0 533.7C672.0 534.0 671.0 534.2 670.0 534.4C669.0 534.6 668.0 534.8 667.0 534.9C666.0 535.1 665.0 535.2 664.0 535.3C663.0 535.5 662.0 535.6 661.0 535.7C660.0 535.8 659.0 535.9 658.0 536.1C657.0 536.3 656.0 536.4 655.0 536.6C654.0 536.8 653.0 537.0 652.0 537.3C651.0 537.5 650.0 537.8 649.0 538.1C648.0 538.3 647.0 538.6 646.0 538.9C645.0 539.2 644.0 539.5 643.0 539.8C642.0 540.1 641.0 540.4 640.0 540.7C639.0 541.0 638.0 541.3 637.0 541.6C636.0 541.9 635.0 542.2 634.0 542.4C633.0 542.7 632.0 543.0 631.0 543.3C630.0 543.6 629.0 543.9 628.0 544.2C627.0 544.5 626.0 544.8 625.0 545.1C624.0 545.4 623.0 545.8 622.0 546.1C621.0 546.5 620.0 546.8 619.0 547.2C618.0 547.5 617.0 547.8 616.0 548.2C615.0 548.5 614.0 548.8 613.0 549.1C612.0 549.3 611.0 549.6 610.0 549.8C609.0 550.0 608.0 550.2 607.0 550.3C606.0 550.5 605.0 550.6 604.0 550.7C603.0 550.8 602.0 550.8 601.0 550.9C600.0 551.0 599.0 551.2 598.0 551.3C597.0 551.4 596.0 551.5 595.0 551.6C594.0 551.8 593.0 551.9 592.0 552.1C591.0 552.2 590.0 552.4 589.0 552.6C588.0 552.8 587.0 553.0 586.0 553.2C585.0 553.5 584.0 553.7 583.0 554.0C582.0 554.3 581.0 554.6 580.0 554.8C579.0 555.1 578.0 555.4 577.0 555.7C576.0 555.9 575.0 556.2 574.0 556.4C573.0 556.7 572.0 556.9 571.0 557.2C570.0 557.4 569.0 557.6 568.0 557.8C567.0 558.0 566.0 558.2 565.0 558.4C564.0 558.6 563.0 558.8 562.0 559.0C561.0 559.2 560.0 559.4 559.0 559.6C558.0 559.9 557.0 560.1 556.0 560.3C555.0 560.5 554.0 560.7 553.0 560.9C552.0 561.1 551.0 561.4 550.0 561.5C549.0 561.7 548.0 561.9 547.0 562.1C546.0 562.2 545.0 562.3 544.0 562.5C543.0 562.6 542.0 562.6 541.0 562.7C540.0 562.7 539.0 562.7 538.0 562.7C537.0 562.7 536.0 562.7 535.0 562.7C534.0 562.6 533.0 562.6 532.0 562.6C531.0 562.6 530.0 562.6 529.0 562.6C528.0 562.6 527.0 562.6 526.0 562.7C525.0 562.8 524.0 562.9 523.0 563.0C522.0 563.1 521.0 563.3 520.0 563.4C519.0 563.6 518.0 563.8 517.0 564.0C516.0 564.2 515.0 564.4 514.0 564.6C513.0 564.8 512.0 565.0 511.0 565.2C510.0 565.4 509.0 565.6 508.0 565.8C507.0 565.9 506.0 566.1 505.0 566.2C504.0 566.3 503.0 566.5 502.0 566.6C501.0 566.7 500.0 566.8 499.0 566.9C498.0 567.0 497.0 567.1 496.0 567.1C495.0 567.2 494.0 567.3 493.0 567.4C492.0 567.5 491.0 567.6 490.0 567.7C489.0 567.8 488.0 567.9 487.0 568.0C486.0 568.0 485.0 568.1 484.0 568.2C483.0 568.3 482.0 568.3 481.0 568.4C480.0 568.4 479.0 568.4 478.0 568.4C477.0 568.4 476.0 568.4 475.0 568.4C474.0 568.3 473.0 568.3 472.0 568.2C471.0 568.2 470.0 568.1 469.0 568.1C468.0 568.0 467.0 568.0 466.0 568.0C465.0 568.0 464.0 567.9 463.0 568.0C462.0 568.0 461.0 568.0 460.0 568.1C459.0 568.3 458.0 568.6 457.0 568.8C456.0 569.1 455.0 569.3 454.0 569.5C453.0 569.7 452.0 569.9 451.0 570.1C450.0 570.3 449.0 570.5 448.0 570.7C447.0 570.9 446.0 571.1 445.0 571.3C444.0 571.5 443.0 571.7 442.0 572.0C441.0 572.2 440.0 572.5 439.0 572.6C438.0 572.8 437.0 572.9 436.0 573.1C435.0 573.2 434.0 573.3 433.0 573.5C432.0 573.6 431.0 573.7 430.0 573.9C429.0 574.0 428.0 574.1 427.0 574.3C426.0 574.4 425.0 574.6 424.0 574.8C423.0 574.9 422.0 575.1 421.0 575.3C420.0 575.5 419.0 575.7 418.0 575.8C417.0 576.0 416.0 576.2 415.0 576.4C414.0 576.5 413.0 576.7 412.0 576.8C411.0 577.0 410.0 577.1 409.0 577.2C408.0 577.4 407.0 577.5 406.0 577.6C405.0 577.8 404.0 577.9 403.0 578.0C402.0 578.2 401.0 578.3 400.0 578.5C399.0 578.7 398.0 578.8 397.0 579.0C396.0 579.1 395.0 579.3 394.0 579.6C393.0 579.8 392.0 580.1 391.0 580.3C390.0 580.6 389.0 580.9 388.0 581.2C387.0 581.5 386.0 581.8 385.0 582.1C384.0 582.4 383.0 582.7 382.0 583.0C381.0 583.3 380.0 583.6 379.0 583.8C378.0 584.0 377.0 584.3 376.0 584.5C375.0 584.7 374.0 584.8 373.0 585.0C372.0 585.1 371.0 585.3 370.0 585.4C369.0 585.5 368.0 585.6 367.0 585.7C366.0 585.8 365.0 585.9 364.0 586.0C363.0 586.1 362.0 586.2 361.0 586.4C360.0 586.5 359.0 586.6 358.0 586.7C357.0 586.8 356.0 587.0 355.0 587.1C354.0 587.2 353.0 587.4 352.0 587.5C351.0 587.6 350.0 587.8 349.0 587.9C348.0 588.0 347.0 588.1 346.0 588.2C345.0 588.3 344.0 588.4 343.0 588.5C342.0 588.6 341.0 588.6 340.0 588.7C339.0 588.8 338.0 588.9 337.0 589.0C336.0 589.1 335.0 589.2 334.0 589.3C333.0 589.5 332.0 589.6 331.0 589.8C330.0 589.9 329.0 590.1 328.0 590.3C327.0 590.5 326.0 590.7 325.0 590.9C324.0 591.1 323.0 591.4 322.0 591.6C321.0 591.8 320.0 592.0 319.0 592.3C318.0 592.5 317.0 592.7 316.0 592.8C315.0 593.0 314.0 593.2 313.0 593.3C312.0 593.4 311.0 593.6 310.0 593.6C309.0 593.7 308.0 593.8 307.0 593.9C306.0 593.9 305.0 594.0 304.0 594.0C303.0 594.0 302.0 594.1 301.0 594.1C300.0 594.1 299.0 594.2 298.0 594.2C297.0 594.3 296.0 594.4 295.0 594.5C294.0 594.6 293.0 594.7 292.0 594.9C291.0 595.0 290.0 595.2 289.0 595.3C288.0 595.5 287.0 595.7 286.0 595.8C285.0 596.0 284.0 596.2 283.0 596.4C282.0 596.5 281.0 596.7 280.0 596.9C279.0 597.1 278.0 597.3 277.0 597.4C276.0 597.6 275.0 597.8 274.0 598.0C273.0 598.2 272.0 598.4 271.0 598.6C270.0 598.8 269.0 599.0 268.0 599.2C267.0 599.5 266.0 599.7 265.0 599.9C264.0 600.2 263.0 600.5 262.0 600.7C261.0 601.0 260.0 601.3 259.0 601.6C258.0 601.9 257.0 602.2 256.0 602.5C255.0 602.8 254.0 603.0 253.0 603.3C252.0 603.6 251.0 603.8 250.0 604.0C249.0 604.3 248.0 604.5 247.0 604.6C246.0 604.8 245.0 605.0 244.0 605.1C243.0 605.3 242.0 605.4 241.0 605.6C240.0 605.7 239.0 605.9 238.0 606.0C237.0 606.1 236.0 606.3 235.0 606.4C234.0 606.6 233.0 606.7 232.0 606.9C231.0 607.1 230.0 607.3 229.0 607.5C228.0 607.7 227.0 608.0 226.0 608.2C225.0 608.4 224.0 608.7 223.0 609.0C222.0 609.2 221.0 609.5 220.0 609.8C219.0 610.0 218.0 610.3 217.0 610.6C216.0 610.8 215.0 611.1 214.0 611.3C213.0 611.6 212.0 611.8 211.0 612.0C210.0 612.2 209.0 612.4 208.0 612.6C207.0 612.8 210.5 612.7 205.0 613.2C199.5 613.8 182.5 615.2 175.0 616.0C167.5 616.8 164.2 617.0 160.0 618.0C155.8 619.0 153.1 621.0 150.0 622.0C146.9 623.0 144.6 625.0 141.6 624.2C138.6 623.4 135.0 619.3 132.0 617.0C129.0 614.7 125.9 610.1 123.6 610.6C121.3 611.1 119.5 617.2 118.0 620.0C116.5 622.8 115.7 629.8 114.3 627.3C112.9 624.8 110.4 611.2 109.7 605.0C109.0 598.8 109.2 594.0 110.0 590.0C110.8 586.0 112.3 581.8 114.3 580.8C116.3 579.8 118.5 582.5 122.0 584.0C125.5 585.5 131.5 588.8 135.0 590.0C138.5 591.2 140.5 591.2 143.0 591.5C145.5 591.8 144.7 592.4 150.0 592.0C155.3 591.6 166.7 590.6 175.0 589.0C183.3 587.4 195.3 583.3 200.0 582.1C204.7 580.9 202.0 581.8 203.0 581.7C204.0 581.5 205.0 581.3 206.0 581.2C207.0 581.0 208.0 580.8 209.0 580.7C210.0 580.5 211.0 580.3 212.0 580.2C213.0 580.0 214.0 579.8 215.0 579.6C216.0 579.5 217.0 579.3 218.0 579.1C219.0 579.0 220.0 578.8 221.0 578.7C222.0 578.5 223.0 578.4 224.0 578.2C225.0 578.1 226.0 578.0 227.0 577.8C228.0 577.7 229.0 577.6 230.0 577.5C231.0 577.3 232.0 577.2 233.0 577.0C234.0 576.9 235.0 576.7 236.0 576.6C237.0 576.4 238.0 576.2 239.0 576.0C240.0 575.8 241.0 575.6 242.0 575.4C243.0 575.1 244.0 574.9 245.0 574.6C246.0 574.4 247.0 574.1 248.0 573.8C249.0 573.5 250.0 573.2 251.0 572.9C252.0 572.7 253.0 572.3 254.0 572.1C255.0 571.8 256.0 571.5 257.0 571.2C258.0 571.0 259.0 570.7 260.0 570.5C261.0 570.3 262.0 570.1 263.0 569.9C264.0 569.7 265.0 569.5 266.0 569.3C267.0 569.2 268.0 569.0 269.0 568.9C270.0 568.7 271.0 568.6 272.0 568.5C273.0 568.3 274.0 568.2 275.0 568.1C276.0 567.9 277.0 567.8 278.0 567.6C279.0 567.5 280.0 567.3 281.0 567.2C282.0 567.0 283.0 566.9 284.0 566.7C285.0 566.5 286.0 566.3 287.0 566.2C288.0 566.0 289.0 565.8 290.0 565.7C291.0 565.5 292.0 565.3 293.0 565.2C294.0 565.0 295.0 564.8 296.0 564.7C297.0 564.5 298.0 564.4 299.0 564.3C300.0 564.2 301.0 564.0 302.0 563.9C303.0 563.8 304.0 563.6 305.0 563.5C306.0 563.3 307.0 563.1 308.0 563.0C309.0 562.8 310.0 562.6 311.0 562.4C312.0 562.1 313.0 561.9 314.0 561.7C315.0 561.4 316.0 561.2 317.0 560.9C318.0 560.7 319.0 560.4 320.0 560.1C321.0 559.8 322.0 559.6 323.0 559.3C324.0 559.1 325.0 558.8 326.0 558.6C327.0 558.3 328.0 558.1 329.0 557.9C330.0 557.7 331.0 557.5 332.0 557.4C333.0 557.2 334.0 557.1 335.0 557.0C336.0 556.9 337.0 556.8 338.0 556.7C339.0 556.6 340.0 556.5 341.0 556.5C342.0 556.4 343.0 556.3 344.0 556.3C345.0 556.2 346.0 556.1 347.0 556.0C348.0 556.0 349.0 555.9 350.0 555.8C351.0 555.7 352.0 555.6 353.0 555.4C354.0 555.3 355.0 555.2 356.0 555.0C357.0 554.9 358.0 554.7 359.0 554.6C360.0 554.4 361.0 554.3 362.0 554.1C363.0 554.0 364.0 553.8 365.0 553.7C366.0 553.5 367.0 553.4 368.0 553.2C369.0 553.1 370.0 553.0 371.0 552.8C372.0 552.7 373.0 552.5 374.0 552.4C375.0 552.2 376.0 552.1 377.0 551.9C378.0 551.8 379.0 551.6 380.0 551.4C381.0 551.2 382.0 551.0 383.0 550.8C384.0 550.6 385.0 550.4 386.0 550.1C387.0 549.9 388.0 549.7 389.0 549.4C390.0 549.2 391.0 548.9 392.0 548.7C393.0 548.4 394.0 548.2 395.0 548.0C396.0 547.8 397.0 547.5 398.0 547.3C399.0 547.2 400.0 547.0 401.0 546.9C402.0 546.7 403.0 546.6 404.0 546.6C405.0 546.5 406.0 546.4 407.0 546.4C408.0 546.3 409.0 546.3 410.0 546.3C411.0 546.3 412.0 546.3 413.0 546.3C414.0 546.2 415.0 546.2 416.0 546.2C417.0 546.2 418.0 546.1 419.0 546.1C420.0 546.0 421.0 545.9 422.0 545.9C423.0 545.8 424.0 545.6 425.0 545.5C426.0 545.4 427.0 545.2 428.0 545.1C429.0 544.9 430.0 544.8 431.0 544.6C432.0 544.4 433.0 544.2 434.0 544.0C435.0 543.9 436.0 543.7 437.0 543.5C438.0 543.3 439.0 543.1 440.0 542.9C441.0 542.8 442.0 542.6 443.0 542.4C444.0 542.2 445.0 542.0 446.0 541.9C447.0 541.7 448.0 541.5 449.0 541.3C450.0 541.1 451.0 540.9 452.0 540.6C453.0 540.4 454.0 540.2 455.0 539.9C456.0 539.7 457.0 539.4 458.0 539.2C459.0 538.9 460.0 538.7 461.0 538.4C462.0 538.2 463.0 538.0 464.0 537.8C465.0 537.6 466.0 537.4 467.0 537.2C468.0 537.0 469.0 536.8 470.0 536.7C471.0 536.5 472.0 536.4 473.0 536.3C474.0 536.1 475.0 536.1 476.0 536.0C477.0 535.9 478.0 535.8 479.0 535.8C480.0 535.7 481.0 535.7 482.0 535.6C483.0 535.5 484.0 535.5 485.0 535.4C486.0 535.3 487.0 535.3 488.0 535.2C489.0 535.0 490.0 534.9 491.0 534.8C492.0 534.6 493.0 534.4 494.0 534.2C495.0 534.0 496.0 533.8 497.0 533.6C498.0 533.3 499.0 533.1 500.0 532.8C501.0 532.5 502.0 532.3 503.0 532.0C504.0 531.7 505.0 531.4 506.0 531.1C507.0 530.8 508.0 530.6 509.0 530.3C510.0 530.0 511.0 529.8 512.0 529.5C513.0 529.3 514.0 529.0 515.0 528.8C516.0 528.6 517.0 528.3 518.0 528.1C519.0 527.9 520.0 527.7 521.0 527.5C522.0 527.2 523.0 527.0 524.0 526.8C525.0 526.6 526.0 526.4 527.0 526.1C528.0 525.9 529.0 525.7 530.0 525.4C531.0 525.2 532.0 525.0 533.0 524.8C534.0 524.6 535.0 524.3 536.0 524.1C537.0 524.0 538.0 523.8 539.0 523.6C540.0 523.4 541.0 523.2 542.0 523.1C543.0 522.9 544.0 522.8 545.0 522.6C546.0 522.5 547.0 522.4 548.0 522.3C549.0 522.2 550.0 522.1 551.0 522.0C552.0 521.9 553.0 521.9 554.0 521.8C555.0 521.7 556.0 521.6 557.0 521.5C558.0 521.3 559.0 521.2 560.0 521.0C561.0 520.9 562.0 520.7 563.0 520.5C564.0 520.3 565.0 520.0 566.0 519.8C567.0 519.5 568.0 519.2 569.0 518.9C570.0 518.6 571.0 518.3 572.0 517.9C573.0 517.6 574.0 517.3 575.0 517.0C576.0 516.6 577.0 516.3 578.0 516.0C579.0 515.7 580.0 515.4 581.0 515.1C582.0 514.8 583.0 514.5 584.0 514.2C585.0 513.9 586.0 513.7 587.0 513.4C588.0 513.2 589.0 513.0 590.0 512.7C591.0 512.5 592.0 512.2 593.0 512.0C594.0 511.8 595.0 511.5 596.0 511.3C597.0 511.0 598.0 510.7 599.0 510.5C600.0 510.2 601.0 509.9 602.0 509.6C603.0 509.4 604.0 509.3 605.0 509.1C606.0 508.9 607.0 508.8 608.0 508.6C609.0 508.4 610.0 508.2 611.0 508.1C612.0 507.9 613.0 507.8 614.0 507.6C615.0 507.5 616.0 507.4 617.0 507.3C618.0 507.2 619.0 507.0 620.0 506.9C621.0 506.8 622.0 506.7 623.0 506.6C624.0 506.5 625.0 506.3 626.0 506.2C627.0 506.0 628.0 505.9 629.0 505.7C630.0 505.5 631.0 505.2 632.0 505.0C633.0 504.7 634.0 504.5 635.0 504.1C636.0 503.8 637.0 503.5 638.0 503.1C639.0 502.8 640.0 502.4 641.0 502.0C642.0 501.6 643.0 501.2 644.0 500.9C645.0 500.5 646.0 500.1 647.0 499.7C648.0 499.3 649.0 499.0 650.0 498.6C651.0 498.3 652.0 498.0 653.0 497.7C654.0 497.4 655.0 497.1 656.0 496.9C657.0 496.6 658.0 496.4 659.0 496.2C660.0 496.0 661.0 495.8 662.0 495.6C663.0 495.4 664.0 495.2 665.0 495.1C666.0 494.9 667.0 494.7 668.0 494.5C669.0 494.4 670.0 494.2 671.0 494.0C672.0 493.8 673.0 493.6 674.0 493.4C675.0 493.2 676.0 493.0 677.0 492.8C678.0 492.6 679.0 492.5 680.0 492.3C681.0 492.1 682.0 491.9 683.0 491.7C684.0 491.6 685.0 491.4 686.0 491.3C687.0 491.1 688.0 491.0 689.0 490.9C690.0 490.7 691.0 490.6 692.0 490.5C693.0 490.4 694.0 490.2 695.0 490.1C696.0 490.0 697.0 489.8 698.0 489.7C699.0 489.5 700.0 489.3 701.0 489.0C702.0 488.7 703.0 488.3 704.0 488.0C705.0 487.6 706.0 487.2 707.0 486.8C708.0 486.4 709.0 485.9 710.0 485.5C711.0 485.1 712.0 484.6 713.0 484.2C714.0 483.8 715.0 483.3 716.0 482.9C717.0 482.5 718.0 482.1 719.0 481.7C720.0 481.3 721.0 481.0 722.0 480.7C723.0 480.4 724.0 480.1 725.0 479.9C726.0 479.6 727.0 479.4 728.0 479.3C729.0 479.1 730.0 479.0 731.0 478.8C732.0 478.7 733.0 478.6 734.0 478.5C735.0 478.5 736.0 478.4 737.0 478.3C738.0 478.2 739.0 478.1 740.0 478.0C741.0 478.0 742.0 477.9 743.0 477.7C744.0 477.6 745.0 477.5 746.0 477.4C747.0 477.2 748.0 477.1 749.0 476.9C750.0 476.8 751.0 476.6 752.0 476.4C753.0 476.3 754.0 476.1 755.0 476.0C756.0 475.8 757.0 475.6 758.0 475.4C759.0 475.3 760.0 475.1 761.0 474.9C762.0 474.8 763.0 474.7 764.0 474.5C765.0 474.4 766.0 474.2 767.0 474.1C768.0 473.9 769.0 473.7 770.0 473.5C771.0 473.3 772.0 473.1 773.0 472.9C774.0 472.6 775.0 472.4 776.0 472.1C777.0 471.8 778.0 471.4 779.0 471.1C780.0 470.8 781.0 470.4 782.0 470.1C783.0 469.7 784.0 469.3 785.0 469.0C786.0 468.7 787.0 468.3 788.0 468.0C789.0 467.8 790.0 467.5 791.0 467.3C792.0 467.1 793.0 466.9 794.0 466.8C795.0 466.7 796.0 466.6 797.0 466.6C798.0 466.6 799.0 466.6 800.0 466.6C801.0 466.7 802.0 466.8 803.0 466.9C804.0 467.0 805.0 467.2 806.0 467.3C807.0 467.4 808.0 467.6 809.0 467.7C810.0 467.8 811.0 467.9 812.0 467.9C813.0 468.0 814.0 468.0 815.0 468.0C816.0 468.0 817.0 468.0 818.0 467.9C819.0 467.8 820.0 467.8 821.0 467.6C822.0 467.5 823.0 467.4 824.0 467.3C825.0 467.2 826.0 467.0 827.0 466.9C828.0 466.8 829.0 466.6 830.0 466.5C831.0 466.4 832.0 466.2 833.0 466.1C834.0 466.0 835.0 465.9 836.0 465.7C837.0 465.6 838.0 465.5 839.0 465.3C840.0 465.2 841.0 465.0 842.0 464.8C843.0 464.6 844.0 464.3 845.0 464.1C846.0 463.8 847.0 463.5 848.0 463.2C849.0 462.8 850.0 462.5 851.0 462.1C852.0 461.8 853.0 461.4 854.0 461.1C855.0 460.7 856.0 460.4 857.0 460.1C858.0 459.8 859.0 459.5 860.0 459.2C861.0 459.0 862.0 458.8 863.0 458.7C864.0 458.5 865.0 458.5 866.0 458.5C867.0 458.5 868.0 458.5 869.0 458.6C870.0 458.7 871.0 458.8 872.0 459.0C873.0 459.1 874.0 459.3 875.0 459.5C876.0 459.6 877.0 459.8 878.0 460.0C879.0 460.1 880.0 460.2 881.0 460.3C882.0 460.3 883.0 460.3 884.0 460.2C885.0 460.1 886.0 459.9 887.0 459.6C888.0 459.4 889.0 459.0 890.0 458.7C891.0 458.4 892.0 458.0 893.0 457.7C894.0 457.4 895.0 457.2 896.0 457.0C897.0 456.8 898.0 456.7 899.0 456.7C900.0 456.6 901.0 456.6 902.0 456.5C903.0 456.4 904.0 456.4 905.0 456.2C906.0 456.1 907.0 455.8 908.0 455.5C909.0 455.1 910.0 454.6 911.0 454.1C912.0 453.5 913.0 452.8 914.0 452.1C915.0 451.4 916.0 450.6 917.0 450.0C918.0 449.4 919.0 448.8 920.0 448.4C921.0 448.0 922.0 447.8 923.0 447.7C924.0 447.6 925.0 447.8 926.0 448.1C927.0 448.3 928.0 448.8 929.0 449.2C930.0 449.6 931.0 450.2 932.0 450.5C933.0 450.9 934.0 451.3 935.0 451.4C936.0 451.6 937.0 451.6 938.0 451.4C939.0 451.3 940.0 450.9 941.0 450.5C942.0 450.1 943.0 449.5 944.0 449.0C945.0 448.6 946.0 448.0 947.0 447.8C948.0 447.6 949.0 447.4 950.0 447.6C951.0 447.7 952.0 448.1 953.0 448.7C954.0 449.2 955.0 450.1 956.0 450.9C957.0 451.7 958.0 452.7 959.0 453.4C960.0 454.1 961.0 454.8 962.0 455.1C963.0 455.4 964.0 455.4 965.0 455.0C966.0 454.7 967.0 453.9 968.0 452.9C969.0 451.9 970.0 450.4 971.0 449.0C972.0 447.6 973.0 445.8 974.0 444.5C975.0 443.1 976.0 441.7 977.0 440.9C978.0 440.0 979.0 439.4 980.0 439.3C981.0 439.2 982.0 439.6 983.0 440.4C984.0 441.1 985.0 442.3 986.0 443.6C987.0 444.8 988.0 446.4 989.0 447.6C990.0 448.8 991.0 450.2 992.0 450.9C993.0 451.6 994.0 452.0 995.0 452.0C996.0 451.9 997.0 451.2 998.0 450.3C999.0 449.4 1000.0 447.9 1001.0 446.6C1002.0 445.2 1003.0 443.4 1004.0 442.2C1005.0 441.0 1006.0 439.7 1007.0 439.2C1008.0 438.7 1009.0 438.5 1010.0 439.1C1011.0 439.6 1012.0 440.8 1013.0 442.4C1014.0 443.9 1015.0 446.2 1016.0 448.4C1017.0 450.5 1018.0 453.1 1019.0 455.1C1020.0 457.1 1021.0 459.1 1022.0 460.3C1023.0 461.5 1024.0 462.2 1025.0 462.1C1026.0 462.1 1027.0 461.2 1028.0 459.9C1029.0 458.6 1030.0 456.5 1031.0 454.5C1032.0 452.4 1033.0 449.8 1034.0 447.8C1035.0 445.8 1036.0 443.7 1037.0 442.4C1038.0 441.2 1037.8 441.2 1040.0 440.4C1042.2 439.5 1044.5 436.1 1050.0 437.4C1055.5 438.6 1068.3 446.9 1073.0 448.0C1077.7 449.1 1076.5 443.3 1078.0 444.0C1079.5 444.7 1081.0 447.0 1082.0 452.0C1083.0 457.0 1083.7 470.3 1084.0 474.0" fill="none" stroke="#9c9c3c" stroke-width="1.0" stroke-opacity="0.8"/><path d="M1087.3 524.5C1087.0 521.5 1086.2 512.4 1085.8 506.5C1085.4 500.6 1084.7 497.0 1084.8 489.2C1084.9 481.5 1085.4 467.4 1086.3 460.0C1087.2 452.6 1089.0 445.0 1090.3 445.0C1091.5 445.0 1093.0 452.6 1093.8 460.0C1094.6 467.4 1094.9 480.2 1095.0 489.2C1095.1 498.3 1094.9 507.0 1094.3 514.5C1093.7 522.0 1092.2 532.2 1091.3 534.5C1090.4 536.8 1089.6 533.2 1088.8 528.5C1088.0 523.8 1090.1 511.5 1086.3 506.5C1082.5 501.5 1071.4 502.2 1066.0 498.4C1060.6 494.5 1058.5 486.7 1054.0 483.4C1049.5 480.0 1042.0 479.2 1039.0 478.4C1036.0 477.6 1037.0 478.5 1036.0 478.7C1035.0 479.0 1034.0 479.4 1033.0 479.9C1032.0 480.4 1031.0 481.0 1030.0 481.6C1029.0 482.1 1028.0 482.8 1027.0 483.4C1026.0 483.9 1025.0 484.5 1024.0 484.9C1023.0 485.4 1022.0 485.7 1021.0 486.0C1020.0 486.3 1019.0 486.5 1018.0 486.7C1017.0 486.8 1016.0 486.9 1015.0 487.0C1014.0 487.1 1013.0 487.2 1012.0 487.3C1011.0 487.4 1010.0 487.5 1009.0 487.6C1008.0 487.8 1007.0 487.9 1006.0 488.1C1005.0 488.3 1004.0 488.5 1003.0 488.7C1002.0 488.9 1001.0 489.1 1000.0 489.3C999.0 489.4 998.0 489.6 997.0 489.6C996.0 489.7 995.0 489.6 994.0 489.5C993.0 489.4 992.0 489.2 991.0 488.9C990.0 488.7 989.0 488.3 988.0 487.9C987.0 487.5 986.0 487.1 985.0 486.7C984.0 486.3 983.0 485.9 982.0 485.7C981.0 485.4 980.0 485.2 979.0 485.1C978.0 485.0 977.0 485.0 976.0 485.1C975.0 485.3 974.0 485.5 973.0 485.9C972.0 486.2 971.0 486.7 970.0 487.2C969.0 487.8 968.0 488.4 967.0 488.9C966.0 489.5 965.0 490.1 964.0 490.7C963.0 491.2 962.0 491.8 961.0 492.2C960.0 492.7 959.0 493.0 958.0 493.3C957.0 493.7 956.0 493.9 955.0 494.1C954.0 494.3 953.0 494.5 952.0 494.6C951.0 494.7 950.0 494.8 949.0 494.9C948.0 495.0 947.0 495.1 946.0 495.2C945.0 495.4 944.0 495.5 943.0 495.6C942.0 495.8 941.0 495.9 940.0 496.1C939.0 496.2 938.0 496.4 937.0 496.5C936.0 496.6 935.0 496.7 934.0 496.7C933.0 496.8 932.0 496.8 931.0 496.7C930.0 496.6 929.0 496.5 928.0 496.3C927.0 496.1 926.0 495.8 925.0 495.6C924.0 495.3 923.0 495.0 922.0 494.7C921.0 494.4 920.0 494.1 919.0 493.9C918.0 493.7 917.0 493.5 916.0 493.4C915.0 493.3 914.0 493.3 913.0 493.3C912.0 493.4 911.0 493.5 910.0 493.8C909.0 494.0 908.0 494.3 907.0 494.6C906.0 495.0 905.0 495.4 904.0 495.7C903.0 496.1 902.0 496.5 901.0 496.9C900.0 497.3 899.0 497.7 898.0 498.0C897.0 498.3 896.0 498.6 895.0 498.8C894.0 499.0 893.0 499.2 892.0 499.3C891.0 499.5 890.0 499.5 889.0 499.6C888.0 499.7 887.0 499.8 886.0 499.8C885.0 499.9 884.0 499.9 883.0 500.0C882.0 500.1 881.0 500.1 880.0 500.2C879.0 500.3 878.0 500.4 877.0 500.5C876.0 500.6 875.0 500.7 874.0 500.7C873.0 500.8 872.0 500.9 871.0 500.9C870.0 500.9 869.0 500.9 868.0 500.9C867.0 500.8 866.0 500.8 865.0 500.6C864.0 500.5 863.0 500.4 862.0 500.2C861.0 500.1 860.0 499.9 859.0 499.7C858.0 499.5 857.0 499.4 856.0 499.2C855.0 499.1 854.0 499.0 853.0 499.0C852.0 498.9 851.0 498.9 850.0 499.0C849.0 499.0 848.0 499.2 847.0 499.3C846.0 499.5 845.0 499.7 844.0 499.9C843.0 500.1 842.0 500.4 841.0 500.7C840.0 500.9 839.0 501.2 838.0 501.5C837.0 501.8 836.0 502.0 835.0 502.3C834.0 502.5 833.0 502.7 832.0 502.9C831.0 503.1 830.0 503.2 829.0 503.3C828.0 503.4 827.0 503.5 826.0 503.6C825.0 503.7 824.0 503.7 823.0 503.8C822.0 503.8 821.0 503.9 820.0 504.0C819.0 504.0 818.0 504.1 817.0 504.2C816.0 504.3 815.0 504.4 814.0 504.5C813.0 504.6 812.0 504.7 811.0 504.8C810.0 504.9 809.0 505.0 808.0 505.0C807.0 505.1 806.0 505.2 805.0 505.2C804.0 505.2 803.0 505.2 802.0 505.2C801.0 505.2 800.0 505.2 799.0 505.2C798.0 505.1 797.0 505.1 796.0 505.0C795.0 505.0 794.0 505.0 793.0 505.0C792.0 505.0 791.0 505.0 790.0 505.0C789.0 505.1 788.0 505.2 787.0 505.4C786.0 505.5 785.0 505.7 784.0 506.0C783.0 506.2 782.0 506.5 781.0 506.9C780.0 507.2 779.0 507.6 778.0 507.9C777.0 508.3 776.0 508.7 775.0 509.1C774.0 509.5 773.0 509.9 772.0 510.2C771.0 510.6 770.0 510.9 769.0 511.3C768.0 511.6 767.0 511.9 766.0 512.1C765.0 512.4 764.0 512.7 763.0 512.9C762.0 513.1 761.0 513.4 760.0 513.6C759.0 513.8 758.0 514.1 757.0 514.3C756.0 514.5 755.0 514.8 754.0 515.0C753.0 515.2 752.0 515.4 751.0 515.6C750.0 515.8 749.0 516.1 748.0 516.3C747.0 516.5 746.0 516.7 745.0 516.9C744.0 517.1 743.0 517.2 742.0 517.4C741.0 517.5 740.0 517.7 739.0 517.8C738.0 517.9 737.0 518.0 736.0 518.1C735.0 518.1 734.0 518.2 733.0 518.3C732.0 518.4 731.0 518.4 730.0 518.5C729.0 518.6 728.0 518.7 727.0 518.9C726.0 519.1 725.0 519.2 724.0 519.5C723.0 519.7 722.0 520.0 721.0 520.3C720.0 520.6 719.0 521.0 718.0 521.4C717.0 521.8 716.0 522.2 715.0 522.6C714.0 523.1 713.0 523.5 712.0 524.0C711.0 524.4 710.0 524.9 709.0 525.3C708.0 525.7 707.0 526.1 706.0 526.5C705.0 526.9 704.0 527.3 703.0 527.7C702.0 528.1 701.0 528.5 700.0 528.8C699.0 529.0 698.0 529.1 697.0 529.3C696.0 529.5 695.0 529.7 694.0 529.9C693.0 530.1 692.0 530.3 691.0 530.5C690.0 530.7 689.0 531.0 688.0 531.2C687.0 531.4 686.0 531.6 685.0 531.9C684.0 532.1 683.0 532.4 682.0 532.6C681.0 532.8 680.0 533.0 679.0 533.2C678.0 533.4 677.0 533.6 676.0 533.8C675.0 533.9 674.0 534.1 673.0 534.2C672.0 534.3 671.0 534.4 670.0 534.6C669.0 534.7 668.0 534.8 667.0 535.0C666.0 535.1 665.0 535.3 664.0 535.5C663.0 535.6 662.0 535.9 661.0 536.1C660.0 536.4 659.0 536.6 658.0 537.0C657.0 537.3 656.0 537.6 655.0 538.0C654.0 538.4 653.0 538.8 652.0 539.2C651.0 539.6 650.0 540.1 649.0 540.5C648.0 540.9 647.0 541.3 646.0 541.7C645.0 542.1 644.0 542.5 643.0 542.8C642.0 543.2 641.0 543.5 640.0 543.8C639.0 544.1 638.0 544.4 637.0 544.7C636.0 544.9 635.0 545.2 634.0 545.4C633.0 545.7 632.0 545.9 631.0 546.1C630.0 546.4 629.0 546.6 628.0 546.8C627.0 547.1 626.0 547.3 625.0 547.6C624.0 547.8 623.0 548.0 622.0 548.3C621.0 548.5 620.0 548.8 619.0 549.0C618.0 549.2 617.0 549.4 616.0 549.6C615.0 549.7 614.0 549.9 613.0 550.0C612.0 550.2 611.0 550.3 610.0 550.4C609.0 550.5 608.0 550.6 607.0 550.6C606.0 550.7 605.0 550.7 604.0 550.8C603.0 550.9 602.0 551.0 601.0 551.2C600.0 551.4 599.0 551.6 598.0 551.9C597.0 552.2 596.0 552.4 595.0 552.7C594.0 553.0 593.0 553.4 592.0 553.7C591.0 554.1 590.0 554.4 589.0 554.8C588.0 555.2 587.0 555.5 586.0 555.9C585.0 556.3 584.0 556.6 583.0 556.9C582.0 557.3 581.0 557.6 580.0 557.9C579.0 558.2 578.0 558.4 577.0 558.6C576.0 558.9 575.0 559.1 574.0 559.3C573.0 559.5 572.0 559.6 571.0 559.8C570.0 559.9 569.0 560.1 568.0 560.2C567.0 560.4 566.0 560.5 565.0 560.7C564.0 560.8 563.0 561.0 562.0 561.1C561.0 561.3 560.0 561.4 559.0 561.6C558.0 561.7 557.0 561.9 556.0 562.0C555.0 562.2 554.0 562.3 553.0 562.4C552.0 562.5 551.0 562.6 550.0 562.7C549.0 562.8 548.0 562.8 547.0 562.9C546.0 562.9 545.0 563.0 544.0 563.0C543.0 563.0 542.0 563.1 541.0 563.1C540.0 563.1 539.0 563.2 538.0 563.2C537.0 563.3 536.0 563.3 535.0 563.4C534.0 563.5 533.0 563.7 532.0 563.8C531.0 564.0 530.0 564.1 529.0 564.4C528.0 564.6 527.0 564.8 526.0 565.0C525.0 565.2 524.0 565.5 523.0 565.7C522.0 566.0 521.0 566.2 520.0 566.4C519.0 566.6 518.0 566.9 517.0 567.0C516.0 567.2 515.0 567.4 514.0 567.5C513.0 567.6 512.0 567.7 511.0 567.8C510.0 567.9 509.0 568.0 508.0 568.1C507.0 568.1 506.0 568.2 505.0 568.3C504.0 568.3 503.0 568.4 502.0 568.4C501.0 568.5 500.0 568.6 499.0 568.7C498.0 568.7 497.0 568.8 496.0 568.9C495.0 568.9 494.0 569.0 493.0 569.1C492.0 569.1 491.0 569.2 490.0 569.2C489.0 569.3 488.0 569.3 487.0 569.3C486.0 569.3 485.0 569.3 484.0 569.3C483.0 569.3 482.0 569.3 481.0 569.2C480.0 569.2 479.0 569.2 478.0 569.1C477.0 569.1 476.0 569.1 475.0 569.1C474.0 569.1 473.0 569.1 472.0 569.2C471.0 569.2 470.0 569.3 469.0 569.4C468.0 569.5 467.0 569.6 466.0 569.8C465.0 569.9 464.0 570.1 463.0 570.3C462.0 570.5 461.0 570.6 460.0 570.9C459.0 571.1 458.0 571.5 457.0 571.8C456.0 572.1 455.0 572.3 454.0 572.5C453.0 572.6 452.0 572.8 451.0 572.9C450.0 573.0 449.0 573.1 448.0 573.1C447.0 573.2 446.0 573.3 445.0 573.4C444.0 573.5 443.0 573.6 442.0 573.7C441.0 573.9 440.0 574.1 439.0 574.2C438.0 574.4 437.0 574.5 436.0 574.6C435.0 574.7 434.0 574.9 433.0 575.0C432.0 575.2 431.0 575.3 430.0 575.5C429.0 575.6 428.0 575.8 427.0 575.9C426.0 576.1 425.0 576.2 424.0 576.4C423.0 576.5 422.0 576.6 421.0 576.7C420.0 576.9 419.0 577.0 418.0 577.1C417.0 577.2 416.0 577.3 415.0 577.4C414.0 577.5 413.0 577.7 412.0 577.8C411.0 578.0 410.0 578.1 409.0 578.3C408.0 578.5 407.0 578.7 406.0 579.0C405.0 579.2 404.0 579.5 403.0 579.8C402.0 580.1 401.0 580.4 400.0 580.7C399.0 581.0 398.0 581.3 397.0 581.6C396.0 581.9 395.0 582.2 394.0 582.4C393.0 582.7 392.0 583.0 391.0 583.2C390.0 583.5 389.0 583.7 388.0 583.9C387.0 584.1 386.0 584.3 385.0 584.5C384.0 584.7 383.0 584.8 382.0 585.0C381.0 585.1 380.0 585.3 379.0 585.4C378.0 585.6 377.0 585.7 376.0 585.9C375.0 586.0 374.0 586.2 373.0 586.3C372.0 586.5 371.0 586.6 370.0 586.8C369.0 587.0 368.0 587.1 367.0 587.3C366.0 587.4 365.0 587.6 364.0 587.7C363.0 587.9 362.0 588.0 361.0 588.1C360.0 588.2 359.0 588.3 358.0 588.4C357.0 588.5 356.0 588.6 355.0 588.7C354.0 588.8 353.0 588.8 352.0 588.9C351.0 589.0 350.0 589.0 349.0 589.1C348.0 589.2 347.0 589.3 346.0 589.4C345.0 589.5 344.0 589.7 343.0 589.8C342.0 590.0 341.0 590.2 340.0 590.4C339.0 590.6 338.0 590.8 337.0 591.0C336.0 591.3 335.0 591.5 334.0 591.7C333.0 591.9 332.0 592.2 331.0 592.4C330.0 592.6 329.0 592.8 328.0 593.0C327.0 593.2 326.0 593.3 325.0 593.5C324.0 593.6 323.0 593.8 322.0 593.9C321.0 594.0 320.0 594.1 319.0 594.2C318.0 594.2 317.0 594.3 316.0 594.4C315.0 594.5 314.0 594.5 313.0 594.6C312.0 594.7 311.0 594.8 310.0 594.9C309.0 595.0 308.0 595.1 307.0 595.2C306.0 595.3 305.0 595.4 304.0 595.5C303.0 595.6 302.0 595.8 301.0 595.9C300.0 596.0 299.0 596.1 298.0 596.2C297.0 596.3 296.0 596.4 295.0 596.4C294.0 596.5 293.0 596.6 292.0 596.7C291.0 596.8 290.0 596.9 289.0 597.0C288.0 597.1 287.0 597.2 286.0 597.3C285.0 597.5 284.0 597.6 283.0 597.8C282.0 597.9 281.0 598.1 280.0 598.3C279.0 598.5 278.0 598.8 277.0 599.0C276.0 599.3 275.0 599.5 274.0 599.8C273.0 600.1 272.0 600.4 271.0 600.7C270.0 601.0 269.0 601.3 268.0 601.6C267.0 601.9 266.0 602.2 265.0 602.4C264.0 602.7 263.0 602.9 262.0 603.2C261.0 603.4 260.0 603.6 259.0 603.8C258.0 604.0 257.0 604.2 256.0 604.4C255.0 604.5 254.0 604.7 253.0 604.9C252.0 605.1 251.0 605.2 250.0 605.4C249.0 605.6 248.0 605.7 247.0 605.9C246.0 606.1 245.0 606.3 244.0 606.5C243.0 606.7 242.0 606.9 241.0 607.1C240.0 607.4 239.0 607.6 238.0 607.8C237.0 608.0 236.0 608.2 235.0 608.4C234.0 608.6 233.0 608.8 232.0 609.0C231.0 609.2 230.0 609.4 229.0 609.6C228.0 609.8 227.0 609.9 226.0 610.1C225.0 610.3 224.0 610.5 223.0 610.7C222.0 610.9 221.0 611.1 220.0 611.3C219.0 611.5 218.0 611.7 217.0 612.0C216.0 612.3 215.0 612.5 214.0 612.8C213.0 613.1 216.5 613.1 211.0 613.6C205.5 614.2 188.5 615.3 181.0 616.0C173.5 616.7 170.9 617.0 166.0 618.0C161.1 619.0 155.5 621.2 151.8 622.0C148.1 622.8 146.3 623.5 144.0 622.7C141.7 621.9 140.4 619.1 138.0 617.0C135.6 614.9 131.9 609.5 129.6 610.0C127.3 610.5 125.5 617.4 124.0 620.0C122.5 622.6 121.7 628.3 120.3 625.8C118.9 623.3 116.4 611.0 115.7 605.0C115.0 599.0 115.2 594.0 116.0 590.0C116.8 586.0 118.3 581.8 120.3 580.8C122.3 579.8 124.5 582.5 128.0 584.0C131.4 585.5 137.5 588.8 141.0 590.0C144.5 591.2 146.5 591.2 149.0 591.5C151.5 591.8 150.7 592.4 156.0 592.0C161.3 591.6 172.7 590.3 181.0 589.0C189.3 587.7 201.3 585.0 206.0 584.0C210.7 583.1 208.0 583.6 209.0 583.3C210.0 583.1 211.0 582.8 212.0 582.5C213.0 582.3 214.0 582.0 215.0 581.7C216.0 581.5 217.0 581.2 218.0 581.0C219.0 580.7 220.0 580.5 221.0 580.3C222.0 580.1 223.0 579.9 224.0 579.7C225.0 579.5 226.0 579.3 227.0 579.1C228.0 578.9 229.0 578.8 230.0 578.6C231.0 578.4 232.0 578.2 233.0 578.0C234.0 577.7 235.0 577.5 236.0 577.3C237.0 577.0 238.0 576.8 239.0 576.5C240.0 576.3 241.0 576.0 242.0 575.8C243.0 575.6 244.0 575.3 245.0 575.1C246.0 574.9 247.0 574.7 248.0 574.5C249.0 574.4 250.0 574.2 251.0 574.1C252.0 573.9 253.0 573.8 254.0 573.7C255.0 573.5 256.0 573.4 257.0 573.3C258.0 573.2 259.0 573.1 260.0 572.9C261.0 572.8 262.0 572.6 263.0 572.5C264.0 572.3 265.0 572.1 266.0 571.9C267.0 571.7 268.0 571.5 269.0 571.3C270.0 571.1 271.0 570.9 272.0 570.7C273.0 570.6 274.0 570.4 275.0 570.2C276.0 570.0 277.0 569.9 278.0 569.8C279.0 569.6 280.0 569.5 281.0 569.4C282.0 569.3 283.0 569.2 284.0 569.0C285.0 568.9 286.0 568.8 287.0 568.6C288.0 568.5 289.0 568.3 290.0 568.1C291.0 568.0 292.0 567.7 293.0 567.5C294.0 567.3 295.0 567.0 296.0 566.8C297.0 566.5 298.0 566.3 299.0 566.1C300.0 565.8 301.0 565.6 302.0 565.4C303.0 565.2 304.0 564.9 305.0 564.8C306.0 564.6 307.0 564.4 308.0 564.2C309.0 564.0 310.0 563.9 311.0 563.7C312.0 563.6 313.0 563.4 314.0 563.2C315.0 563.1 316.0 562.9 317.0 562.7C318.0 562.5 319.0 562.3 320.0 562.1C321.0 561.8 322.0 561.6 323.0 561.3C324.0 561.1 325.0 560.8 326.0 560.6C327.0 560.3 328.0 560.1 329.0 559.8C330.0 559.6 331.0 559.4 332.0 559.2C333.0 559.0 334.0 558.9 335.0 558.7C336.0 558.6 337.0 558.5 338.0 558.4C339.0 558.3 340.0 558.2 341.0 558.1C342.0 558.0 343.0 557.9 344.0 557.8C345.0 557.7 346.0 557.6 347.0 557.4C348.0 557.3 349.0 557.2 350.0 557.0C351.0 556.8 352.0 556.7 353.0 556.5C354.0 556.3 355.0 556.1 356.0 556.0C357.0 555.8 358.0 555.7 359.0 555.6C360.0 555.4 361.0 555.3 362.0 555.2C363.0 555.2 364.0 555.1 365.0 555.0C366.0 555.0 367.0 555.0 368.0 554.9C369.0 554.9 370.0 554.8 371.0 554.8C372.0 554.7 373.0 554.6 374.0 554.5C375.0 554.4 376.0 554.3 377.0 554.1C378.0 554.0 379.0 553.8 380.0 553.7C381.0 553.5 382.0 553.3 383.0 553.1C384.0 552.9 385.0 552.7 386.0 552.5C387.0 552.3 388.0 552.1 389.0 552.0C390.0 551.8 391.0 551.7 392.0 551.5C393.0 551.4 394.0 551.2 395.0 551.1C396.0 551.0 397.0 550.8 398.0 550.7C399.0 550.6 400.0 550.4 401.0 550.2C402.0 550.1 403.0 549.9 404.0 549.7C405.0 549.5 406.0 549.3 407.0 549.1C408.0 548.9 409.0 548.6 410.0 548.4C411.0 548.1 412.0 547.9 413.0 547.7C414.0 547.4 415.0 547.2 416.0 547.0C417.0 546.9 418.0 546.7 419.0 546.5C420.0 546.4 421.0 546.3 422.0 546.2C423.0 546.1 424.0 546.0 425.0 545.9C426.0 545.8 427.0 545.7 428.0 545.6C429.0 545.5 430.0 545.4 431.0 545.2C432.0 545.1 433.0 544.9 434.0 544.8C435.0 544.6 436.0 544.4 437.0 544.2C438.0 544.1 439.0 543.9 440.0 543.7C441.0 543.5 442.0 543.3 443.0 543.2C444.0 543.0 445.0 542.9 446.0 542.8C447.0 542.7 448.0 542.6 449.0 542.5C450.0 542.4 451.0 542.4 452.0 542.3C453.0 542.3 454.0 542.2 455.0 542.1C456.0 542.0 457.0 541.9 458.0 541.8C459.0 541.7 460.0 541.6 461.0 541.5C462.0 541.3 463.0 541.2 464.0 541.0C465.0 540.9 466.0 540.7 467.0 540.5C468.0 540.3 469.0 540.1 470.0 539.9C471.0 539.7 472.0 539.6 473.0 539.4C474.0 539.2 475.0 539.1 476.0 538.9C477.0 538.8 478.0 538.7 479.0 538.5C480.0 538.4 481.0 538.3 482.0 538.2C483.0 538.0 484.0 537.9 485.0 537.7C486.0 537.5 487.0 537.3 488.0 537.1C489.0 536.9 490.0 536.6 491.0 536.4C492.0 536.1 493.0 535.8 494.0 535.5C495.0 535.2 496.0 534.8 497.0 534.5C498.0 534.2 499.0 533.9 500.0 533.6C501.0 533.4 502.0 533.1 503.0 532.8C504.0 532.6 505.0 532.4 506.0 532.2C507.0 532.0 508.0 531.8 509.0 531.6C510.0 531.4 511.0 531.2 512.0 531.0C513.0 530.8 514.0 530.7 515.0 530.4C516.0 530.2 517.0 530.0 518.0 529.7C519.0 529.5 520.0 529.2 521.0 528.9C522.0 528.7 523.0 528.4 524.0 528.1C525.0 527.9 526.0 527.6 527.0 527.4C528.0 527.1 529.0 526.9 530.0 526.8C531.0 526.6 532.0 526.4 533.0 526.3C534.0 526.2 535.0 526.1 536.0 526.0C537.0 525.9 538.0 525.9 539.0 525.8C540.0 525.7 541.0 525.6 542.0 525.4C543.0 525.3 544.0 525.2 545.0 525.0C546.0 524.8 547.0 524.6 548.0 524.4C549.0 524.2 550.0 524.0 551.0 523.8C552.0 523.6 553.0 523.3 554.0 523.1C555.0 522.9 556.0 522.7 557.0 522.5C558.0 522.3 559.0 522.2 560.0 522.0C561.0 521.9 562.0 521.8 563.0 521.7C564.0 521.5 565.0 521.4 566.0 521.3C567.0 521.2 568.0 521.1 569.0 520.9C570.0 520.8 571.0 520.6 572.0 520.4C573.0 520.2 574.0 520.0 575.0 519.8C576.0 519.5 577.0 519.2 578.0 518.9C579.0 518.6 580.0 518.3 581.0 517.9C582.0 517.6 583.0 517.3 584.0 517.0C585.0 516.7 586.0 516.3 587.0 516.1C588.0 515.8 589.0 515.5 590.0 515.2C591.0 515.0 592.0 514.7 593.0 514.5C594.0 514.2 595.0 514.0 596.0 513.7C597.0 513.5 598.0 513.2 599.0 512.9C600.0 512.6 601.0 512.2 602.0 511.9C603.0 511.6 604.0 511.4 605.0 511.1C606.0 510.8 607.0 510.5 608.0 510.1C609.0 509.8 610.0 509.5 611.0 509.2C612.0 508.9 613.0 508.7 614.0 508.4C615.0 508.2 616.0 507.9 617.0 507.8C618.0 507.6 619.0 507.4 620.0 507.2C621.0 507.1 622.0 507.0 623.0 506.8C624.0 506.7 625.0 506.5 626.0 506.4C627.0 506.2 628.0 506.1 629.0 505.9C630.0 505.7 631.0 505.5 632.0 505.3C633.0 505.0 634.0 504.8 635.0 504.5C636.0 504.3 637.0 504.0 638.0 503.8C639.0 503.5 640.0 503.3 641.0 503.1C642.0 502.9 643.0 502.7 644.0 502.5C645.0 502.3 646.0 502.2 647.0 502.0C648.0 501.9 649.0 501.8 650.0 501.7C651.0 501.5 652.0 501.4 653.0 501.3C654.0 501.1 655.0 501.0 656.0 500.8C657.0 500.6 658.0 500.4 659.0 500.2C660.0 499.9 661.0 499.7 662.0 499.4C663.0 499.1 664.0 498.8 665.0 498.5C666.0 498.2 667.0 497.8 668.0 497.5C669.0 497.2 670.0 496.9 671.0 496.7C672.0 496.4 673.0 496.1 674.0 495.9C675.0 495.7 676.0 495.5 677.0 495.3C678.0 495.0 679.0 494.9 680.0 494.7C681.0 494.4 682.0 494.2 683.0 494.0C684.0 493.8 685.0 493.5 686.0 493.2C687.0 493.0 688.0 492.7 689.0 492.3C690.0 492.0 691.0 491.7 692.0 491.3C693.0 491.0 694.0 490.7 695.0 490.3C696.0 490.0 697.0 489.7 698.0 489.4C699.0 489.2 700.0 488.9 701.0 488.6C702.0 488.3 703.0 487.9 704.0 487.6C705.0 487.4 706.0 487.1 707.0 486.9C708.0 486.6 709.0 486.4 710.0 486.2C711.0 485.9 712.0 485.7 713.0 485.5C714.0 485.2 715.0 485.0 716.0 484.7C717.0 484.4 718.0 484.1 719.0 483.8C720.0 483.5 721.0 483.2 722.0 482.9C723.0 482.6 724.0 482.3 725.0 482.1C726.0 481.9 727.0 481.7 728.0 481.5C729.0 481.3 730.0 481.2 731.0 481.1C732.0 481.0 733.0 480.9 734.0 480.9C735.0 480.8 736.0 480.8 737.0 480.8C738.0 480.7 739.0 480.7 740.0 480.6C741.0 480.6 742.0 480.5 743.0 480.4C744.0 480.2 745.0 480.1 746.0 479.9C747.0 479.7 748.0 479.5 749.0 479.2C750.0 479.0 751.0 478.8 752.0 478.5C753.0 478.3 754.0 478.1 755.0 477.9C756.0 477.7 757.0 477.4 758.0 477.3C759.0 477.1 760.0 477.0 761.0 476.9C762.0 476.7 763.0 476.7 764.0 476.5C765.0 476.4 766.0 476.3 767.0 476.2C768.0 476.1 769.0 475.9 770.0 475.7C771.0 475.5 772.0 475.3 773.0 475.0C774.0 474.7 775.0 474.4 776.0 474.0C777.0 473.7 778.0 473.3 779.0 473.0C780.0 472.6 781.0 472.2 782.0 471.9C783.0 471.6 784.0 471.3 785.0 471.1C786.0 470.9 787.0 470.7 788.0 470.5C789.0 470.3 790.0 470.2 791.0 470.1C792.0 470.0 793.0 470.0 794.0 469.9C795.0 469.8 796.0 469.7 797.0 469.5C798.0 469.4 799.0 469.2 800.0 469.0C801.0 468.8 802.0 468.6 803.0 468.4C804.0 468.1 805.0 467.9 806.0 467.6C807.0 467.4 808.0 467.2 809.0 467.0C810.0 466.8 811.0 466.7 812.0 466.6C813.0 466.5 814.0 466.5 815.0 466.5C816.0 466.5 817.0 466.6 818.0 466.7C819.0 466.8 820.0 467.0 821.0 467.2C822.0 467.3 823.0 467.5 824.0 467.6C825.0 467.7 826.0 467.8 827.0 467.9C828.0 467.9 829.0 467.9 830.0 467.9C831.0 467.9 832.0 467.8 833.0 467.7C834.0 467.6 835.0 467.4 836.0 467.3C837.0 467.2 838.0 467.1 839.0 467.0C840.0 466.9 841.0 466.9 842.0 466.8C843.0 466.8 844.0 466.9 845.0 466.9C846.0 467.0 847.0 467.0 848.0 467.1C849.0 467.2 850.0 467.2 851.0 467.2C852.0 467.3 853.0 467.3 854.0 467.2C855.0 467.1 856.0 466.9 857.0 466.7C858.0 466.5 859.0 466.2 860.0 465.8C861.0 465.5 862.0 465.1 863.0 464.7C864.0 464.3 865.0 463.8 866.0 463.5C867.0 463.1 868.0 462.7 869.0 462.4C870.0 462.0 871.0 461.7 872.0 461.5C873.0 461.3 874.0 461.1 875.0 460.9C876.0 460.8 877.0 460.6 878.0 460.5C879.0 460.3 880.0 460.1 881.0 459.9C882.0 459.8 883.0 459.6 884.0 459.3C885.0 459.1 886.0 458.8 887.0 458.5C888.0 458.2 889.0 457.8 890.0 457.4C891.0 456.9 892.0 456.4 893.0 455.9C894.0 455.4 895.0 454.8 896.0 454.3C897.0 453.9 898.0 453.4 899.0 453.0C900.0 452.7 901.0 452.4 902.0 452.4C903.0 452.3 904.0 452.4 905.0 452.6C906.0 452.8 907.0 453.2 908.0 453.5C909.0 453.9 910.0 454.5 911.0 454.9C912.0 455.3 913.0 455.8 914.0 456.1C915.0 456.3 916.0 456.5 917.0 456.4C918.0 456.4 919.0 456.2 920.0 455.8C921.0 455.5 922.0 454.9 923.0 454.3C924.0 453.7 925.0 453.0 926.0 452.5C927.0 451.9 928.0 451.4 929.0 451.1C930.0 450.8 931.0 450.7 932.0 450.8C933.0 450.9 934.0 451.4 935.0 451.9C936.0 452.4 937.0 453.3 938.0 454.0C939.0 454.8 940.0 455.8 941.0 456.4C942.0 457.1 943.0 457.8 944.0 458.1C945.0 458.4 946.0 458.5 947.0 458.2C948.0 458.0 949.0 457.3 950.0 456.5C951.0 455.7 952.0 454.5 953.0 453.4C954.0 452.3 955.0 451.0 956.0 449.9C957.0 448.9 958.0 447.8 959.0 447.2C960.0 446.6 961.0 446.2 962.0 446.2C963.0 446.2 964.0 446.6 965.0 447.1C966.0 447.7 967.0 448.6 968.0 449.5C969.0 450.3 970.0 451.4 971.0 452.1C972.0 452.8 973.0 453.5 974.0 453.7C975.0 453.9 976.0 453.8 977.0 453.3C978.0 452.8 979.0 451.8 980.0 450.7C981.0 449.6 982.0 448.0 983.0 446.6C984.0 445.2 985.0 443.5 986.0 442.4C987.0 441.2 988.0 440.1 989.0 439.6C990.0 439.1 991.0 439.0 992.0 439.3C993.0 439.7 994.0 440.7 995.0 441.8C996.0 442.9 997.0 444.7 998.0 446.1C999.0 447.6 1000.0 449.4 1001.0 450.7C1002.0 452.0 1003.0 453.2 1004.0 453.8C1005.0 454.5 1006.0 454.6 1007.0 454.4C1008.0 454.1 1009.0 453.1 1010.0 452.1C1011.0 451.1 1012.0 449.5 1013.0 448.2C1014.0 447.0 1015.0 445.4 1016.0 444.5C1017.0 443.5 1018.0 442.7 1019.0 442.6C1020.0 442.5 1021.0 443.0 1022.0 443.9C1023.0 444.8 1024.0 446.5 1025.0 448.3C1026.0 450.0 1027.0 452.4 1028.0 454.4C1029.0 456.5 1030.0 458.8 1031.0 460.4C1032.0 462.0 1033.0 463.4 1034.0 464.0C1035.0 464.6 1036.0 464.6 1037.0 464.1C1038.0 463.5 1037.2 461.6 1040.0 460.5C1042.8 459.4 1046.8 459.6 1054.0 457.5C1061.2 455.4 1077.3 450.3 1083.0 448.0C1088.7 445.7 1086.5 443.3 1088.0 444.0C1089.5 444.7 1091.0 447.0 1092.0 452.0C1093.0 457.0 1093.7 470.3 1094.0 474.0" fill="none" stroke="#9c9c3c" stroke-width="1.0" stroke-opacity="0.8"/><path d="M303.0 565.0C303.5 564.9 305.0 564.7 306.0 564.6C307.0 564.5 308.0 564.3 309.0 564.2C310.0 564.0 311.0 563.9 312.0 563.7C313.0 563.6 314.0 563.4 315.0 563.2C316.0 563.0 317.0 562.8 318.0 562.6C319.0 562.4 320.0 562.2 321.0 561.9C322.0 561.7 323.0 561.4 324.0 561.2C325.0 560.9 326.0 560.7 327.0 560.4C328.0 560.2 329.0 559.9 330.0 559.7C331.0 559.5 332.0 559.2 333.0 559.0C334.0 558.8 335.0 558.6 336.0 558.4C337.0 558.2 338.0 558.0 339.0 557.8C340.0 557.6 341.0 557.5 342.0 557.3C343.0 557.2 344.0 557.0 345.0 556.9C346.0 556.8 347.0 556.6 348.0 556.5C349.0 556.4 350.0 556.3 351.0 556.1C352.0 556.0 353.0 555.8 354.0 555.7C355.0 555.6 356.0 555.4 357.0 555.3C358.0 555.1 359.0 555.0 360.0 554.8C361.0 554.7 362.0 554.5 363.0 554.4C364.0 554.2 365.0 554.0 366.0 553.9C367.0 553.8 368.0 553.6 369.0 553.5C370.0 553.4 371.0 553.2 372.0 553.1C373.0 553.0 374.0 552.9 375.0 552.8C376.0 552.7 377.0 552.7 378.0 552.6C379.0 552.5 380.0 552.5 381.0 552.4C382.0 552.3 383.0 552.3 384.0 552.2C385.0 552.2 386.0 552.1 387.0 552.0C388.0 551.9 389.0 551.8 390.0 551.7C391.0 551.6 392.0 551.5 393.0 551.4C394.0 551.3 395.0 551.1 396.0 550.9C397.0 550.8 398.0 550.6 399.0 550.4C400.0 550.2 401.0 550.0 402.0 549.8C403.0 549.6 404.0 549.4 405.0 549.2C406.0 549.0 407.0 548.8 408.0 548.6C409.0 548.4 410.0 548.2 411.0 548.1C412.0 547.9 413.0 547.7 414.0 547.5C415.0 547.4 416.0 547.2 417.0 547.0C418.0 546.9 419.0 546.8 420.0 546.6C421.0 546.5 422.0 546.3 423.0 546.2C424.0 546.0 425.0 545.9 426.0 545.8C427.0 545.6 428.0 545.5 429.0 545.3C430.0 545.2 431.0 545.0 432.0 544.8C433.0 544.6 434.0 544.5 435.0 544.3C436.0 544.1 437.0 543.9 438.0 543.7C439.0 543.5 440.0 543.3 441.0 543.1C442.0 542.8 443.0 542.6 444.0 542.4C445.0 542.2 446.0 542.0 447.0 541.9C448.0 541.7 449.0 541.5 450.0 541.3C451.0 541.2 452.0 541.0 453.0 540.9C454.0 540.8 455.0 540.6 456.0 540.5C457.0 540.4 458.0 540.3 459.0 540.2C460.0 540.1 461.0 540.0 462.0 540.0C463.0 539.9 464.0 539.9 465.0 539.8C466.0 539.7 467.0 539.7 468.0 539.6C469.0 539.5 470.0 539.4 471.0 539.3C472.0 539.2 473.0 539.0 474.0 538.9C475.0 538.7 476.0 538.6 477.0 538.4C478.0 538.2 479.0 538.0 480.0 537.8C481.0 537.6 482.0 537.4 483.0 537.2C484.0 537.0 485.0 536.8 486.0 536.6C487.0 536.4 488.0 536.2 489.0 536.0C490.0 535.8 491.0 535.6 492.0 535.4C493.0 535.3 494.0 535.1 495.0 534.9C496.0 534.7 497.0 534.5 498.0 534.3C499.0 534.2 500.0 534.0 501.0 533.8C502.0 533.6 503.0 533.4 504.0 533.2C505.0 533.0 506.0 532.8 507.0 532.5C508.0 532.3 509.0 532.0 510.0 531.8C511.0 531.5 512.0 531.2 513.0 531.0C514.0 530.7 515.0 530.4 516.0 530.1C517.0 529.8 518.0 529.5 519.0 529.2C520.0 528.9 521.0 528.6 522.0 528.3C523.0 528.0 524.0 527.7 525.0 527.5C526.0 527.2 527.0 526.9 528.0 526.7C529.0 526.5 530.0 526.3 531.0 526.1C532.0 525.9 533.0 525.7 534.0 525.5C535.0 525.4 536.0 525.2 537.0 525.1C538.0 525.0 539.0 524.9 540.0 524.7C541.0 524.6 542.0 524.4 543.0 524.2C544.0 524.1 545.0 523.9 546.0 523.7C547.0 523.6 548.0 523.4 549.0 523.2C550.0 523.1 551.0 522.9 552.0 522.7C553.0 522.5 554.0 522.3 555.0 522.1C556.0 521.9 557.0 521.7 558.0 521.5C559.0 521.3 560.0 521.2 561.0 521.0C562.0 520.8 563.0 520.6 564.0 520.4C565.0 520.2 566.0 520.1 567.0 519.9C568.0 519.8 569.0 519.6 570.0 519.5C571.0 519.3 572.0 519.2 573.0 519.0C574.0 518.9 575.0 518.8 576.0 518.6C577.0 518.5 578.0 518.4 579.0 518.2C580.0 518.0 581.0 517.9 582.0 517.7C583.0 517.5 584.0 517.3 585.0 517.1C586.0 516.9 587.0 516.6 588.0 516.3C589.0 516.1 590.0 515.8 591.0 515.5C592.0 515.1 593.0 514.8 594.0 514.5C595.0 514.1 596.0 513.7 597.0 513.4C598.0 513.0 599.0 512.6 600.0 512.2C601.0 511.9 602.0 511.5 603.0 511.2C604.0 510.9 605.0 510.6 606.0 510.4C607.0 510.1 608.0 509.9 609.0 509.6C610.0 509.4 611.0 509.1 612.0 508.9C613.0 508.7 614.0 508.5 615.0 508.3C616.0 508.1 617.0 507.9 618.0 507.6C619.0 507.4 620.0 507.2 621.0 507.0C622.0 506.8 623.0 506.6 624.0 506.3C625.0 506.1 626.0 505.9 627.0 505.6C628.0 505.4 629.0 505.1 630.0 504.9C631.0 504.6 632.0 504.3 633.0 504.1C634.0 503.8 635.0 503.5 636.0 503.3C637.0 503.0 638.0 502.7 639.0 502.5C640.0 502.2 641.0 502.0 642.0 501.8C643.0 501.6 644.0 501.4 645.0 501.2C646.0 501.0 647.0 500.8 648.0 500.7C649.0 500.5 650.0 500.4 651.0 500.2C652.0 500.1 653.0 500.0 654.0 499.8C655.0 499.7 656.0 499.6 657.0 499.4C658.0 499.3 659.0 499.2 660.0 499.0C661.0 498.9 662.0 498.7 663.0 498.5C664.0 498.3 665.0 498.1 666.0 497.9C667.0 497.7 668.0 497.5 669.0 497.2C670.0 497.0 671.0 496.7 672.0 496.4C673.0 496.2 674.0 495.9 675.0 495.6C676.0 495.3 677.0 495.0 678.0 494.7C679.0 494.5 680.0 494.2 681.0 493.9C682.0 493.6 683.0 493.4 684.0 493.1C685.0 492.9 686.0 492.6 687.0 492.4C688.0 492.1 689.0 491.9 690.0 491.7C691.0 491.5 692.0 491.3 693.0 491.1C694.0 490.9 695.0 490.7 696.0 490.5C697.0 490.3 698.0 490.1 699.0 489.9C700.0 489.6 701.0 489.3 702.0 488.9C703.0 488.6 704.0 488.2 705.0 487.8C706.0 487.4 707.0 487.0 708.0 486.7C709.0 486.3 710.0 485.9 711.0 485.5C712.0 485.1 713.0 484.7 714.0 484.4C715.0 484.0 716.0 483.6 717.0 483.3C718.0 483.0 719.0 482.6 720.0 482.4C721.0 482.1 722.0 481.8 723.0 481.6C724.0 481.3 725.0 481.1 726.0 481.0C727.0 480.8 728.0 480.6 729.0 480.5C730.0 480.4 731.0 480.3 732.0 480.2C733.0 480.1 734.0 480.0 735.0 479.9C736.0 479.8 737.0 479.7 738.0 479.7C739.0 479.6 740.0 479.5 741.0 479.4C742.0 479.3 743.0 479.2 744.0 479.0C745.0 478.9 746.0 478.7 747.0 478.6C748.0 478.4 749.0 478.3 750.0 478.1C751.0 477.9 752.0 477.7 753.0 477.6C754.0 477.4 755.0 477.2 756.0 477.0C757.0 476.8 758.0 476.6 759.0 476.4C760.0 476.2 761.0 476.1 762.0 475.9C763.0 475.8 764.0 475.6 765.0 475.5C766.0 475.4 767.0 475.3 768.0 475.2C769.0 475.1 770.0 475.0 771.0 474.9C772.0 474.8 773.0 474.7 774.0 474.6C775.0 474.5 776.0 474.3 777.0 474.2C778.0 474.0 779.0 473.8 780.0 473.6C781.0 473.4 782.0 473.2 783.0 472.9C784.0 472.7 785.0 472.4 786.0 472.1C787.0 471.8 788.0 471.5 789.0 471.2C790.0 470.8 791.0 470.5 792.0 470.2C793.0 469.8 794.0 469.5 795.0 469.2C796.0 468.9 797.0 468.6 798.0 468.4C799.0 468.1 800.0 467.9 801.0 467.7C802.0 467.5 803.0 467.3 804.0 467.2C805.0 467.1 806.0 467.0 807.0 466.9C808.0 466.8 809.0 466.8 810.0 466.8C811.0 466.7 812.0 466.7 813.0 466.7C814.0 466.7 815.0 466.7 816.0 466.7C817.0 466.7 818.0 466.6 819.0 466.6C820.0 466.6 821.0 466.5 822.0 466.5C823.0 466.4 824.0 466.3 825.0 466.3C826.0 466.2 827.0 466.1 828.0 466.0C829.0 465.9 830.0 465.8 831.0 465.8C832.0 465.7 833.0 465.6 834.0 465.6C835.0 465.5 836.0 465.5 837.0 465.5C838.0 465.5 839.0 465.5 840.0 465.6C841.0 465.6 842.0 465.7 843.0 465.7C844.0 465.8 845.0 465.9 846.0 466.0C847.0 466.1 848.0 466.2 849.0 466.2C850.0 466.3 851.0 466.4 852.0 466.4C853.0 466.5 854.0 466.5 855.0 466.4C856.0 466.4 857.0 466.3 858.0 466.2C859.0 466.1 860.0 465.9 861.0 465.7C862.0 465.5 863.0 465.2 864.0 464.9C865.0 464.6 866.0 464.3 867.0 464.0C868.0 463.6 869.0 463.2 870.0 462.9C871.0 462.5 872.0 462.1 873.0 461.7C874.0 461.4 875.0 461.0 876.0 460.7C877.0 460.3 878.0 460.0 879.0 459.7C880.0 459.4 881.0 459.2 882.0 459.0C883.0 458.8 884.0 458.6 885.0 458.3C886.0 458.1 887.0 457.8 888.0 457.5C889.0 457.2 890.0 456.9 891.0 456.6C892.0 456.2 893.0 455.9 894.0 455.6C895.0 455.3 896.0 455.0 897.0 454.8C898.0 454.6 899.0 454.4 900.0 454.3C901.0 454.2 902.0 454.2 903.0 454.1C904.0 454.1 905.0 454.1 906.0 454.1C907.0 454.1 908.0 454.2 909.0 454.1C910.0 454.0 911.0 453.9 912.0 453.7C913.0 453.6 914.0 453.3 915.0 453.0C916.0 452.7 917.0 452.3 918.0 451.9C919.0 451.5 920.0 451.1 921.0 450.7C922.0 450.4 923.0 450.0 924.0 449.9C925.0 449.7 926.0 449.7 927.0 449.8C928.0 449.9 929.0 450.2 930.0 450.6C931.0 451.0 932.0 451.6 933.0 452.3C934.0 452.9 935.0 453.7 936.0 454.4C937.0 455.1 938.0 455.8 939.0 456.3C940.0 456.9 941.0 457.3 942.0 457.5C943.0 457.6 944.0 457.6 945.0 457.3C946.0 457.0 947.0 456.4 948.0 455.7C949.0 455.0 950.0 453.9 951.0 453.0C952.0 452.0 953.0 450.9 954.0 450.0C955.0 449.1 956.0 448.1 957.0 447.5C958.0 446.9 959.0 446.4 960.0 446.3C961.0 446.2 962.0 446.4 963.0 446.8C964.0 447.2 965.0 448.0 966.0 448.8C967.0 449.6 968.0 450.7 969.0 451.6C970.0 452.5 971.0 453.5 972.0 454.1C973.0 454.8 974.0 455.3 975.0 455.4C976.0 455.4 977.0 455.2 978.0 454.6C979.0 454.0 980.0 452.9 981.0 451.7C982.0 450.5 983.0 448.8 984.0 447.3C985.0 445.8 986.0 444.0 987.0 442.6C988.0 441.2 989.0 439.8 990.0 438.9C991.0 438.0 992.0 437.4 993.0 437.3C994.0 437.3 995.0 437.7 996.0 438.4C997.0 439.2 998.0 440.5 999.0 441.9C1000.0 443.3 1001.0 445.2 1002.0 446.8C1003.0 448.4 1004.0 450.2 1005.0 451.5C1006.0 452.8 1007.0 454.0 1008.0 454.7C1009.0 455.3 1010.0 455.6 1011.0 455.4C1012.0 455.2 1013.0 454.4 1014.0 453.5C1015.0 452.6 1016.0 451.1 1017.0 449.8C1018.0 448.4 1019.0 446.8 1020.0 445.6C1021.0 444.4 1022.0 443.1 1023.0 442.5C1024.0 441.9 1025.0 441.7 1026.0 442.0C1027.0 442.3 1028.0 443.2 1029.0 444.5C1030.0 445.7 1031.0 447.7 1032.0 449.6C1033.0 451.5 1034.0 453.9 1035.0 455.9C1036.0 458.0 1035.2 461.3 1038.0 461.7C1040.8 462.2 1047.8 461.2 1052.0 458.7C1056.2 456.3 1060.3 449.6 1063.0 447.0C1065.7 444.4 1066.5 442.3 1068.0 443.0C1069.5 443.7 1071.0 446.0 1072.0 451.0C1073.0 456.0 1073.7 469.3 1074.0 473.0" fill="none" stroke="#9c9c3c" stroke-width="1.0" stroke-opacity="0.8"/><path d="M677.0 531.1C677.5 531.0 679.0 530.7 680.0 530.5C681.0 530.3 682.0 530.1 683.0 529.9C684.0 529.6 685.0 529.4 686.0 529.1C687.0 528.9 688.0 528.6 689.0 528.3C690.0 528.0 691.0 527.7 692.0 527.4C693.0 527.2 694.0 526.9 695.0 526.6C696.0 526.3 697.0 526.1 698.0 525.8C699.0 525.5 700.0 525.3 701.0 524.9C702.0 524.6 703.0 524.2 704.0 523.8C705.0 523.5 706.0 523.2 707.0 522.8C708.0 522.5 709.0 522.2 710.0 521.8C711.0 521.5 712.0 521.2 713.0 520.9C714.0 520.5 715.0 520.2 716.0 519.9C717.0 519.5 718.0 519.2 719.0 518.8C720.0 518.5 721.0 518.1 722.0 517.8C723.0 517.4 724.0 517.1 725.0 516.8C726.0 516.4 727.0 516.1 728.0 515.8C729.0 515.5 730.0 515.2 731.0 514.9C732.0 514.6 733.0 514.4 734.0 514.1C735.0 513.9 736.0 513.7 737.0 513.5C738.0 513.4 739.0 513.2 740.0 513.1C741.0 513.0 742.0 512.9 743.0 512.8C744.0 512.8 745.0 512.7 746.0 512.6C747.0 512.6 748.0 512.5 749.0 512.5C750.0 512.4 751.0 512.3 752.0 512.3C753.0 512.2 754.0 512.1 755.0 511.9C756.0 511.8 757.0 511.6 758.0 511.4C759.0 511.2 760.0 510.9 761.0 510.7C762.0 510.5 763.0 510.2 764.0 510.0C765.0 509.7 766.0 509.4 767.0 509.1C768.0 508.9 769.0 508.6 770.0 508.3C771.0 508.1 772.0 507.8 773.0 507.6C774.0 507.3 775.0 507.1 776.0 506.8C777.0 506.6 778.0 506.4 779.0 506.2C780.0 506.0 781.0 505.8 782.0 505.6C783.0 505.4 784.0 505.2 785.0 505.0C786.0 504.8 787.0 504.6 788.0 504.3C789.0 504.1 790.0 503.9 791.0 503.6C792.0 503.4 793.0 503.1 794.0 502.9C795.0 502.6 796.0 502.3 797.0 502.0C798.0 501.7 799.0 501.4 800.0 501.2C801.0 500.9 802.0 500.6 803.0 500.4C804.0 500.1 805.0 499.9 806.0 499.7C807.0 499.5 808.0 499.3 809.0 499.2C810.0 499.0 811.0 498.9 812.0 498.9C813.0 498.8 814.0 498.8 815.0 498.8C816.0 498.8 817.0 498.8 818.0 498.9C819.0 498.9 820.0 499.0 821.0 499.1C822.0 499.2 823.0 499.3 824.0 499.4C825.0 499.5 826.0 499.6 827.0 499.7C828.0 499.8 829.0 499.9 830.0 500.0C831.0 500.0 832.0 500.1 833.0 500.1C834.0 500.1 835.0 500.1 836.0 500.1C837.0 500.0 838.0 500.0 839.0 499.9C840.0 499.8 841.0 499.8 842.0 499.7C843.0 499.6 844.0 499.5 845.0 499.4C846.0 499.3 847.0 499.2 848.0 499.1C849.0 499.1 850.0 499.0 851.0 498.9C852.0 498.8 853.0 498.8 854.0 498.8C855.0 498.7 856.0 498.7 857.0 498.6C858.0 498.6 859.0 498.5 860.0 498.5C861.0 498.4 862.0 498.3 863.0 498.2C864.0 498.1 865.0 498.0 866.0 497.9C867.0 497.7 868.0 497.5 869.0 497.3C870.0 497.1 871.0 496.9 872.0 496.6C873.0 496.4 874.0 496.1 875.0 495.8C876.0 495.5 877.0 495.2 878.0 494.9C879.0 494.6 880.0 494.3 881.0 494.0C882.0 493.7 883.0 493.5 884.0 493.3C885.0 493.1 886.0 492.9 887.0 492.8C888.0 492.7 889.0 492.6 890.0 492.6C891.0 492.6 892.0 492.6 893.0 492.6C894.0 492.7 895.0 492.8 896.0 492.9C897.0 493.0 898.0 493.2 899.0 493.3C900.0 493.5 901.0 493.7 902.0 493.8C903.0 494.0 904.0 494.1 905.0 494.2C906.0 494.3 907.0 494.4 908.0 494.5C909.0 494.6 910.0 494.6 911.0 494.6C912.0 494.6 913.0 494.6 914.0 494.5C915.0 494.5 916.0 494.4 917.0 494.4C918.0 494.3 919.0 494.3 920.0 494.2C921.0 494.1 922.0 494.1 923.0 494.0C924.0 494.0 925.0 494.0 926.0 494.0C927.0 493.9 928.0 493.9 929.0 493.9C930.0 494.0 931.0 494.0 932.0 494.0C933.0 494.0 934.0 494.0 935.0 494.0C936.0 493.9 937.0 493.9 938.0 493.8C939.0 493.7 940.0 493.6 941.0 493.4C942.0 493.2 943.0 493.0 944.0 492.7C945.0 492.4 946.0 492.1 947.0 491.7C948.0 491.3 949.0 490.9 950.0 490.4C951.0 490.0 952.0 489.4 953.0 489.0C954.0 488.5 955.0 488.0 956.0 487.5C957.0 487.0 958.0 486.6 959.0 486.2C960.0 485.8 961.0 485.4 962.0 485.1C963.0 484.8 964.0 484.5 965.0 484.3C966.0 484.2 967.0 484.0 968.0 484.0C969.0 483.9 970.0 483.9 971.0 484.0C972.0 484.0 973.0 484.1 974.0 484.2C975.0 484.3 976.0 484.4 977.0 484.6C978.0 484.7 979.0 484.8 980.0 484.9C981.0 485.0 982.0 485.1 983.0 485.1C984.0 485.2 985.0 485.2 986.0 485.2C987.0 485.2 988.0 485.1 989.0 485.0C990.0 485.0 991.0 484.9 992.0 484.8C993.0 484.8 994.0 484.7 995.0 484.6C996.0 484.6 997.0 484.6 998.0 484.6C999.0 484.6 1000.0 484.6 1001.0 484.7C1002.0 484.8 1003.0 484.9 1004.0 485.1C1005.0 485.2 1006.0 485.4 1007.0 485.6C1008.0 485.8 1009.0 486.0 1010.0 486.2C1011.0 486.3 1012.0 486.4 1013.0 486.5C1014.0 486.6 1015.0 486.6 1016.0 486.6C1017.0 486.5 1018.0 486.4 1019.0 486.2C1020.0 486.0 1021.0 485.7 1022.0 485.3C1023.0 485.0 1024.0 484.5 1025.0 484.0C1026.0 483.5 1027.0 482.9 1028.0 482.3C1029.0 481.7 1030.0 481.1 1031.0 480.5C1032.0 479.9 1033.0 479.3 1034.0 478.8C1035.0 478.3 1036.0 477.8 1037.0 477.4C1038.0 477.0 1038.2 475.8 1040.0 476.5C1041.8 477.2 1045.3 478.1 1048.0 481.5C1050.7 484.8 1053.1 494.9 1056.0 496.5C1058.9 498.1 1063.5 488.2 1065.5 491.0C1067.5 493.8 1067.2 508.3 1068.0 513.0C1068.8 517.7 1069.6 521.3 1070.5 519.0C1071.4 516.7 1072.9 505.3 1073.5 499.0C1074.1 492.7 1074.3 487.7 1074.2 481.0C1074.1 474.3 1073.8 465.3 1073.0 459.0C1072.2 452.7 1070.8 443.0 1069.5 443.0C1068.2 443.0 1066.4 452.7 1065.5 459.0C1064.6 465.3 1064.1 475.7 1064.0 481.0C1063.9 486.3 1064.6 486.3 1065.0 491.0C1065.4 495.7 1066.2 506.0 1066.5 509.0" fill="none" stroke="#9c9c3c" stroke-width="1.0" stroke-opacity="0.8"/><path d="M200.0 887.3C191.7 887.4 163.3 887.8 150.0 888.0C136.7 888.2 126.3 887.8 120.0 888.5C113.7 889.2 113.8 890.1 112.0 892.0C110.2 893.9 109.7 897.5 109.5 900.0C109.3 902.5 110.1 905.2 111.0 907.0C111.9 908.8 113.3 910.5 115.0 911.0C116.7 911.5 118.7 910.0 121.0 910.0C123.3 910.0 126.2 910.2 128.8 911.0C131.2 911.8 133.6 913.7 136.0 915.0C138.4 916.3 139.0 917.9 143.0 918.8C147.0 919.6 147.2 919.6 160.0 920.0C172.8 920.4 197.3 921.5 220.0 921.2C242.7 921.0 266.0 919.4 296.0 918.8C326.0 918.1 357.7 917.5 400.0 917.5C442.3 917.5 496.7 919.2 550.0 919.0C603.3 918.8 661.7 916.5 720.0 916.2C778.3 915.9 853.3 916.9 900.0 917.0C946.7 917.1 973.0 916.9 1000.0 917.0C1027.0 917.1 1048.7 917.5 1062.0 917.5C1075.3 917.5 1076.4 918.9 1080.0 917.0C1083.6 915.1 1083.8 909.3 1083.8 906.0C1083.8 902.7 1083.1 899.2 1080.0 897.0C1076.9 894.8 1070.8 894.2 1065.0 893.0C1059.2 891.8 1050.3 890.8 1045.0 890.0C1039.7 889.2 1057.2 888.8 1033.0 888.0C1008.8 887.2 952.2 885.6 900.0 885.0C847.8 884.4 778.3 884.2 720.0 884.3C661.7 884.4 603.3 885.0 550.0 885.5C496.7 886.0 442.3 886.9 400.0 887.0C357.7 887.1 329.3 886.0 296.0 886.0C262.7 886.0 216.0 887.1 200.0 887.3" fill="none" stroke="#a84444" stroke-width="1.1" stroke-opacity="0.85"/><path d="M210.0 887.0C201.7 887.1 174.2 887.3 160.0 887.5C145.8 887.7 132.2 887.4 125.0 888.0C117.8 888.6 118.7 889.0 117.0 891.0C115.3 893.0 115.2 897.3 115.0 900.0C114.8 902.7 115.3 905.2 116.0 907.0C116.7 908.8 117.5 909.9 119.0 910.5C120.5 911.1 122.8 910.2 125.0 910.5C127.2 910.8 129.7 911.1 132.0 912.0C134.3 912.9 136.7 914.8 139.0 916.0C141.3 917.2 140.8 918.8 146.0 919.5C151.2 920.2 156.0 920.2 170.0 920.5C184.0 920.8 208.3 921.3 230.0 921.0C251.7 920.7 270.0 919.0 300.0 918.5C330.0 918.0 366.7 918.0 410.0 918.0C453.3 918.0 508.3 918.8 560.0 918.5C611.7 918.2 663.3 916.7 720.0 916.5C776.7 916.3 853.3 917.3 900.0 917.5C946.7 917.7 970.0 917.5 1000.0 917.5C1030.0 917.5 1065.0 917.9 1080.0 917.5C1095.0 917.1 1087.8 916.9 1090.0 915.0C1092.2 913.1 1093.3 908.8 1093.3 906.0C1093.3 903.2 1092.2 899.6 1090.0 898.0C1087.8 896.4 1085.0 896.8 1080.0 896.2C1075.0 895.8 1065.8 895.9 1060.0 895.0C1054.2 894.1 1050.0 892.2 1045.0 891.0C1040.0 889.8 1054.2 888.4 1030.0 887.5C1005.8 886.6 951.7 886.0 900.0 885.5C848.3 885.0 778.3 884.7 720.0 884.8C661.7 884.9 603.3 885.5 550.0 886.0C496.7 886.5 441.7 887.4 400.0 887.5C358.3 887.6 331.7 886.6 300.0 886.5C268.3 886.4 225.0 886.9 210.0 887.0" fill="none" stroke="#a84444" stroke-width="1.1" stroke-opacity="0.85"/><path d="M677.0 910.7C697.5 910.8 746.2 910.9 800.0 911.0C853.8 911.1 955.3 911.2 1000.0 911.2C1044.7 911.2 1055.5 912.1 1068.0 911.2C1080.5 910.4 1074.2 908.0 1075.0 906.0C1075.8 904.0 1075.2 900.7 1073.0 899.0C1070.8 897.3 1065.8 897.0 1062.0 896.0C1058.2 895.0 1052.0 893.5 1050.0 893.0" fill="none" stroke="#a84444" stroke-width="1.1" stroke-opacity="0.85"/><line x1="60.5" y1="202" x2="60.5" y2="693" stroke="#e85050" stroke-width="1"/><line x1="1142.5" y1="202" x2="1142.5" y2="693" stroke="#60a0d0" stroke-width="1.2"/><line x1="60.5" y1="693.5" x2="1142.5" y2="693.5" stroke="#9a78cc" stroke-width="1"/><line x1="60.5" y1="692.5" x2="65" y2="692.5" stroke="#e85050" stroke-width="1.3"/><line x1="60.5" y1="594.5" x2="65" y2="594.5" stroke="#e85050" stroke-width="1.3"/><line x1="60.5" y1="496.5" x2="65" y2="496.5" stroke="#e85050" stroke-width="1.3"/><line x1="60.5" y1="398.5" x2="65" y2="398.5" stroke="#e85050" stroke-width="1.3"/><line x1="60.5" y1="300.5" x2="65" y2="300.5" stroke="#e85050" stroke-width="1.3"/><line x1="60.5" y1="202.5" x2="65" y2="202.5" stroke="#e85050" stroke-width="1.3"/><line x1="1138" y1="692.5" x2="1142.5" y2="692.5" stroke="#60a0d0" stroke-width="1.3"/><line x1="1138" y1="594.5" x2="1142.5" y2="594.5" stroke="#60a0d0" stroke-width="1.3"/><line x1="1138" y1="496.5" x2="1142.5" y2="496.5" stroke="#60a0d0" stroke-width="1.3"/><line x1="1138" y1="398.5" x2="1142.5" y2="398.5" stroke="#60a0d0" stroke-width="1.3"/><line x1="1138" y1="300.5" x2="1142.5" y2="300.5" stroke="#60a0d0" stroke-width="1.3"/><line x1="1138" y1="202.5" x2="1142.5" y2="202.5" stroke="#60a0d0" stroke-width="1.3"/><line x1="144.5" y1="688" x2="144.5" y2="693" stroke="#9a78cc" stroke-width="1"/><line x1="144.5" y1="925.5" x2="144.5" y2="930.5" stroke="#9a78cc" stroke-width="1"/><line x1="297.5" y1="688" x2="297.5" y2="693" stroke="#9a78cc" stroke-width="1"/><line x1="297.5" y1="925.5" x2="297.5" y2="930.5" stroke="#9a78cc" stroke-width="1"/><line x1="449.5" y1="688" x2="449.5" y2="693" stroke="#9a78cc" stroke-width="1"/><line x1="449.5" y1="925.5" x2="449.5" y2="930.5" stroke="#9a78cc" stroke-width="1"/><line x1="602.5" y1="688" x2="602.5" y2="693" stroke="#9a78cc" stroke-width="1"/><line x1="602.5" y1="925.5" x2="602.5" y2="930.5" stroke="#9a78cc" stroke-width="1"/><line x1="755.5" y1="688" x2="755.5" y2="693" stroke="#9a78cc" stroke-width="1"/><line x1="755.5" y1="925.5" x2="755.5" y2="930.5" stroke="#9a78cc" stroke-width="1"/><line x1="908.5" y1="688" x2="908.5" y2="693" stroke="#9a78cc" stroke-width="1"/><line x1="908.5" y1="925.5" x2="908.5" y2="930.5" stroke="#9a78cc" stroke-width="1"/><line x1="1060.5" y1="688" x2="1060.5" y2="693" stroke="#9a78cc" stroke-width="1"/><line x1="1060.5" y1="925.5" x2="1060.5" y2="930.5" stroke="#9a78cc" stroke-width="1"/><line x1="60.5" y1="733" x2="60.5" y2="930.5" stroke="#6a6a6a" stroke-width="1"/><line x1="60.5" y1="930.5" x2="1142" y2="930.5" stroke="#9a78cc" stroke-width="1"/><line x1="60.5" y1="930.5" x2="65" y2="930.5" stroke="#6a6a6a" stroke-width="1.3"/><line x1="60.5" y1="891.5" x2="65" y2="891.5" stroke="#6a6a6a" stroke-width="1.3"/><line x1="60.5" y1="851.5" x2="65" y2="851.5" stroke="#6a6a6a" stroke-width="1.3"/><line x1="60.5" y1="812.5" x2="65" y2="812.5" stroke="#6a6a6a" stroke-width="1.3"/><line x1="60.5" y1="772.5" x2="65" y2="772.5" stroke="#6a6a6a" stroke-width="1.3"/><line x1="60.5" y1="733.5" x2="65" y2="733.5" stroke="#6a6a6a" stroke-width="1.3"/><text x="0" y="0" transform="translate(56.50,696.30)" font-family="Liberation Sans" font-weight="bold" font-size="11.30" letter-spacing="0.676" fill="#e02828" text-anchor="end">0</text><text x="0" y="0" transform="translate(56.50,598.30)" font-family="Liberation Sans" font-weight="bold" font-size="11.30" letter-spacing="0.676" fill="#e02828" text-anchor="end">20</text><text x="0" y="0" transform="translate(56.50,500.30)" font-family="Liberation Sans" font-weight="bold" font-size="11.30" letter-spacing="0.676" fill="#e02828" text-anchor="end">40</text><text x="0" y="0" transform="translate(56.50,402.30)" font-family="Liberation Sans" font-weight="bold" font-size="11.30" letter-spacing="0.676" fill="#e02828" text-anchor="end">60</text><text x="0" y="0" transform="translate(56.50,304.30)" font-family="Liberation Sans" font-weight="bold" font-size="11.30" letter-spacing="0.676" fill="#e02828" text-anchor="end">80</text><text x="0" y="0" transform="translate(1145.00,696.30)" font-family="Liberation Sans" font-weight="bold" font-size="11.30" letter-spacing="0.676" fill="#2f80c0" text-anchor="start">0</text><text x="0" y="0" transform="translate(1145.00,598.30)" font-family="Liberation Sans" font-weight="bold" font-size="11.30" letter-spacing="0.676" fill="#2f80c0" text-anchor="start">25</text><text x="0" y="0" transform="translate(1145.00,500.30)" font-family="Liberation Sans" font-weight="bold" font-size="11.30" letter-spacing="0.676" fill="#2f80c0" text-anchor="start">50</text><text x="0" y="0" transform="translate(1145.00,402.30)" font-family="Liberation Sans" font-weight="bold" font-size="11.30" letter-spacing="0.676" fill="#2f80c0" text-anchor="start">75</text><text x="0" y="0" transform="translate(1145.00,304.30)" font-family="Liberation Sans" font-weight="bold" font-size="11.30" letter-spacing="0.676" fill="#2f80c0" text-anchor="start">100</text><text x="0" y="0" transform="translate(144.25,706.00)" font-family="Liberation Sans" font-weight="bold" font-size="11.30" letter-spacing="0.676" fill="#7a4cb8" text-anchor="middle">2000</text><text x="0" y="0" transform="translate(144.25,943.00)" font-family="Liberation Sans" font-weight="bold" font-size="11.30" letter-spacing="0.676" fill="#7a4cb8" text-anchor="middle">2000</text><text x="0" y="0" transform="translate(297.04,706.00)" font-family="Liberation Sans" font-weight="bold" font-size="11.30" letter-spacing="0.676" fill="#7a4cb8" text-anchor="middle">2500</text><text x="0" y="0" transform="translate(297.04,943.00)" font-family="Liberation Sans" font-weight="bold" font-size="11.30" letter-spacing="0.676" fill="#7a4cb8" text-anchor="middle">2500</text><text x="0" y="0" transform="translate(449.83,706.00)" font-family="Liberation Sans" font-weight="bold" font-size="11.30" letter-spacing="0.676" fill="#7a4cb8" text-anchor="middle">3000</text><text x="0" y="0" transform="translate(449.83,943.00)" font-family="Liberation Sans" font-weight="bold" font-size="11.30" letter-spacing="0.676" fill="#7a4cb8" text-anchor="middle">3000</text><text x="0" y="0" transform="translate(602.62,706.00)" font-family="Liberation Sans" font-weight="bold" font-size="11.30" letter-spacing="0.676" fill="#7a4cb8" text-anchor="middle">3500</text><text x="0" y="0" transform="translate(602.62,943.00)" font-family="Liberation Sans" font-weight="bold" font-size="11.30" letter-spacing="0.676" fill="#7a4cb8" text-anchor="middle">3500</text><text x="0" y="0" transform="translate(755.41,706.00)" font-family="Liberation Sans" font-weight="bold" font-size="11.30" letter-spacing="0.676" fill="#7a4cb8" text-anchor="middle">4000</text><text x="0" y="0" transform="translate(755.41,943.00)" font-family="Liberation Sans" font-weight="bold" font-size="11.30" letter-spacing="0.676" fill="#7a4cb8" text-anchor="middle">4000</text><text x="0" y="0" transform="translate(908.20,706.00)" font-family="Liberation Sans" font-weight="bold" font-size="11.30" letter-spacing="0.676" fill="#7a4cb8" text-anchor="middle">4500</text><text x="0" y="0" transform="translate(908.20,943.00)" font-family="Liberation Sans" font-weight="bold" font-size="11.30" letter-spacing="0.676" fill="#7a4cb8" text-anchor="middle">4500</text><text x="0" y="0" transform="translate(1060.99,706.00)" font-family="Liberation Sans" font-weight="bold" font-size="11.30" letter-spacing="0.676" fill="#7a4cb8" text-anchor="middle">5000</text><text x="0" y="0" transform="translate(1060.99,943.00)" font-family="Liberation Sans" font-weight="bold" font-size="11.30" letter-spacing="0.676" fill="#7a4cb8" text-anchor="middle">5000</text><text x="0" y="0" transform="translate(56.50,934.10)" font-family="Liberation Sans" font-weight="bold" font-size="11.30" letter-spacing="0.676" fill="#111" text-anchor="end">0</text><text x="0" y="0" transform="translate(56.50,894.60)" font-family="Liberation Sans" font-weight="bold" font-size="11.30" letter-spacing="0.676" fill="#111" text-anchor="end">200</text><text x="0" y="0" transform="translate(56.50,855.10)" font-family="Liberation Sans" font-weight="bold" font-size="11.30" letter-spacing="0.676" fill="#111" text-anchor="end">400</text><text x="0" y="0" transform="translate(56.50,815.60)" font-family="Liberation Sans" font-weight="bold" font-size="11.30" letter-spacing="0.676" fill="#111" text-anchor="end">600</text><text x="0" y="0" transform="translate(56.50,776.10)" font-family="Liberation Sans" font-weight="bold" font-size="11.30" letter-spacing="0.676" fill="#111" text-anchor="end">800</text><text x="0" y="0" transform="translate(601.00,720.00)" font-family="Liberation Sans" font-weight="bold" font-size="10.94" letter-spacing="0.424" fill="#7a4cb8" text-anchor="middle">Engine speed [RPM]</text><text x="0" y="0" transform="translate(601.00,956.00)" font-family="Liberation Sans" font-weight="bold" font-size="10.94" letter-spacing="0.424" fill="#7a4cb8" text-anchor="middle">Engine speed [RPM]</text><text x="0" y="0" transform="translate(38.40,447.00) rotate(-90)" font-family="Liberation Sans" font-weight="bold" font-size="10.96" letter-spacing="0.425" fill="#e02828" text-anchor="middle">Engine power [PS]</text><text x="0" y="0" transform="translate(1169.00,447.00) rotate(90)" font-family="Liberation Sans" font-weight="bold" font-size="11.05" letter-spacing="0.472" fill="#2f80c0" text-anchor="middle">Engine torque [Nm]</text><text x="0" y="0" transform="translate(32.20,831.50) rotate(-90)" font-family="Liberation Sans" font-weight="bold" font-size="11.07" letter-spacing="0.459" fill="#111" text-anchor="middle">Roller 1 brakes torque [Nm]</text><line x1="459.5" y1="202" x2="459.5" y2="695" stroke="#222" stroke-width="1"/><rect x="459.5" y="293.5" width="26" height="15" fill="#fff" stroke="#3a3a98" stroke-width="1"/><text x="0" y="0" transform="translate(461.50,304.20)" font-family="Liberation Sans" font-weight="bold" font-size="11.30" letter-spacing="0.676" fill="#1a1a80" text-anchor="start">99</text><path d="M475.5 300.8H480" stroke="#1a1a80" stroke-width="1.8"/><path d="M479 297.8L483.2 300.8L479 303.8Z" fill="#1a1a80"/><rect x="432.5" y="559.5" width="25" height="14.5" fill="#fff" stroke="#8a8a28" stroke-width="1"/><text x="0" y="0" transform="translate(442.50,570.00)" font-family="Liberation Sans" font-weight="bold" font-size="11.30" letter-spacing="0.676" fill="#7a7a10" text-anchor="start">25</text><path d="M437.5 566.6H441.5" stroke="#7a7a10" stroke-width="1.8"/><path d="M438.5 563.6L434.4 566.6L438.5 569.6Z" fill="#7a7a10"/><rect x="443.5" y="694.5" width="32" height="15" fill="#fff" stroke="#222" stroke-width="1"/><text x="0" y="0" transform="translate(459.50,706.00)" font-family="Liberation Sans" font-weight="bold" font-size="11.30" letter-spacing="0.676" fill="#111" text-anchor="middle">3032</text></svg><div class="a" style="left:712px;top:553px;width:321px;height:409px;border-radius:7px 7px 0 0;box-shadow:0 2px 10px rgba(0,0,0,0.30);background:#eeeeee;border:1px solid #6a6a6a;border-top:none"></div><div class="a" style="left:712px;top:553px;width:321px;height:21px;background:#2a2a2a;border-radius:7px 7px 0 0"></div><div class="a" style="left:712px;top:557px;width:321px;text-align:center;color:#c8c8c8;font-weight:bold;line-height:12px"><span style="font-size:10.78px;letter-spacing:0.378px">Inertia Calibration</span></div><div class="a" style="left:1015px;top:557px;width:13px;height:13px;border-radius:50%;background:#555"></div><svg class="a" style="left:1015px;top:557px" width="13" height="13"><path d="M3.8 3.8L9.2 9.2M9.2 3.8L3.8 9.2" stroke="#eee" stroke-width="1.3"/></svg><div class="g" style="top:583px"><span style="font-size:10.35px;letter-spacing:0.150px">This tool is use to adjust rotational inertia value with use of</span></div><div class="g" style="top:594px"><span style="font-size:10.33px;letter-spacing:0.153px">specially prepared double ramp test.</span></div><div class="g" style="top:615px"><span style="font-size:10.33px;letter-spacing:0.152px">Adjust &quot;Engine inertia&quot; to have consistent power reading</span></div><div class="g" style="top:626px"><span style="font-size:10.34px;letter-spacing:0.155px">between runs on different gears.</span></div><div class="g" style="top:647px"><span style="font-size:10.33px;letter-spacing:0.152px">Adjust other inertia values to have consistent power reading on</span></div><div class="g" style="top:658px"><span style="font-size:10.33px;letter-spacing:0.156px">acceleration and deceleration ramp.</span></div><div class="g" style="top:679px"><span style="display:inline-block;font-size:10.00px;transform:scaleX(0.9467);transform-origin:left">LOADED RUNS:</span></div><div class="a" style="left:720.5px;top:695px;color:#222;line-height:11px"><span style="font-size:10.37px;letter-spacing:0.187px">2022-11-16 14:05:46</span></div><div class="btn" style="left:720px;top:711px;width:305px;height:17px;line-height:15px"><span style="font-size:10.06px;letter-spacing:0.031px">Clear Loss Model</span></div><div class="lbl" style="top:736.5px"><span style="display:inline-block;font-size:10.00px;transform:scaleX(0.9863);transform-origin:right">PROJECT / Engine inertia</span></div><div class="spin" style="top:733.5px"><span style="font-size:10.49px;letter-spacing:0.248px">0.112 kg*m²</span><div class="ar"><svg style="position:absolute;left:2.5px;top:3px" width="5" height="10"><path d="M0 3.5L2.5 1L5 3.5Z" fill="#555"/><path d="M0 6.5L2.5 9L5 6.5Z" fill="#555"/></svg></div></div><div class="lbl" style="top:759.2px"><span style="font-size:10.05px;letter-spacing:0.025px">PROJECT / Drivetrain inertia</span></div><div class="spin" style="top:756.2px"><span style="font-size:10.43px;letter-spacing:0.215px">0.21 kg*m²</span><div class="ar"><svg style="position:absolute;left:2.5px;top:3px" width="5" height="10"><path d="M0 3.5L2.5 1L5 3.5Z" fill="#555"/><path d="M0 6.5L2.5 9L5 6.5Z" fill="#555"/></svg></div></div><div class="lbl" style="top:782.0px"><span style="font-size:10.13px;letter-spacing:0.061px">SETTINGS / Engine speed input / inertia</span></div><div class="spin" style="top:779.0px"><span style="font-size:10.43px;letter-spacing:0.215px">0.00 kg*m²</span><div class="ar"><svg style="position:absolute;left:2.5px;top:3px" width="5" height="10"><path d="M0 3.5L2.5 1L5 3.5Z" fill="#555"/><path d="M0 6.5L2.5 9L5 6.5Z" fill="#555"/></svg></div></div><div class="lbl" style="top:804.8px"><span style="font-size:10.09px;letter-spacing:0.041px">SETTINGS / Freq input 1 / inertia</span></div><div class="spin" style="top:801.8px"><span style="font-size:10.43px;letter-spacing:0.215px">2.60 kg*m²</span><div class="ar"><svg style="position:absolute;left:2.5px;top:3px" width="5" height="10"><path d="M0 3.5L2.5 1L5 3.5Z" fill="#555"/><path d="M0 6.5L2.5 9L5 6.5Z" fill="#555"/></svg></div></div><div class="lbl" style="top:827.5px"><span style="font-size:10.09px;letter-spacing:0.041px">SETTINGS / Freq input 2 / inertia</span></div><div class="spin" style="top:824.5px"><span style="font-size:10.43px;letter-spacing:0.215px">2.60 kg*m²</span><div class="ar"><svg style="position:absolute;left:2.5px;top:3px" width="5" height="10"><path d="M0 3.5L2.5 1L5 3.5Z" fill="#555"/><path d="M0 6.5L2.5 9L5 6.5Z" fill="#555"/></svg></div></div><div class="lbl" style="top:850.2px"><span style="font-size:10.09px;letter-spacing:0.041px">SETTINGS / Freq input 3 / inertia</span></div><div class="spin" style="top:847.2px"><span style="font-size:10.43px;letter-spacing:0.215px">0.00 kg*m²</span><div class="ar"><svg style="position:absolute;left:2.5px;top:3px" width="5" height="10"><path d="M0 3.5L2.5 1L5 3.5Z" fill="#555"/><path d="M0 6.5L2.5 9L5 6.5Z" fill="#aaa"/></svg></div></div><div class="lbl" style="top:873.0px"><span style="font-size:10.09px;letter-spacing:0.041px">SETTINGS / Freq input 4 / inertia</span></div><div class="spin" style="top:870.0px"><span style="font-size:10.43px;letter-spacing:0.215px">0.00 kg*m²</span><div class="ar"><svg style="position:absolute;left:2.5px;top:3px" width="5" height="10"><path d="M0 3.5L2.5 1L5 3.5Z" fill="#555"/><path d="M0 6.5L2.5 9L5 6.5Z" fill="#aaa"/></svg></div></div><div class="btn" style="left:720px;top:892px;width:305px;height:17.5px;line-height:16px"><span style="font-size:10.30px;letter-spacing:0.141px">Save to dyno settings</span></div><div class="btn" style="left:720px;top:914px;width:305px;height:17.5px;line-height:16px"><span style="font-size:10.32px;letter-spacing:0.144px">Save to project settings</span></div><div class="btn" style="left:906.5px;top:935.5px;width:57px;height:18.5px;line-height:17px;border-color:#7fa8d0;background:linear-gradient(#f4f8fb,#dde5ec)"><svg style="position:absolute;left:7.5px;top:2.5px" width="13" height="12"><path d="M1 6.5L4.5 11L12 1" fill="none" stroke="#5f8f52" stroke-width="2.6"/></svg><span style="position:absolute;left:20.5px;top:0"><span style="font-size:10.26px;letter-spacing:0.135px">Apply</span></span></div><div class="btn" style="left:967.5px;top:935.5px;width:57px;height:18.5px;line-height:17px"><span style="position:absolute;left:5px;top:3.5px;width:10px;height:10px;border-radius:50%;background:#e80000;box-shadow:0 0 0 1.2px #b0b0b0"></span><span style="position:absolute;left:18.5px;top:0;font-size:10px;letter-spacing:0.3px"><u style="text-underline-offset:1.5px">C</u>ancel</span></div></body></html>
